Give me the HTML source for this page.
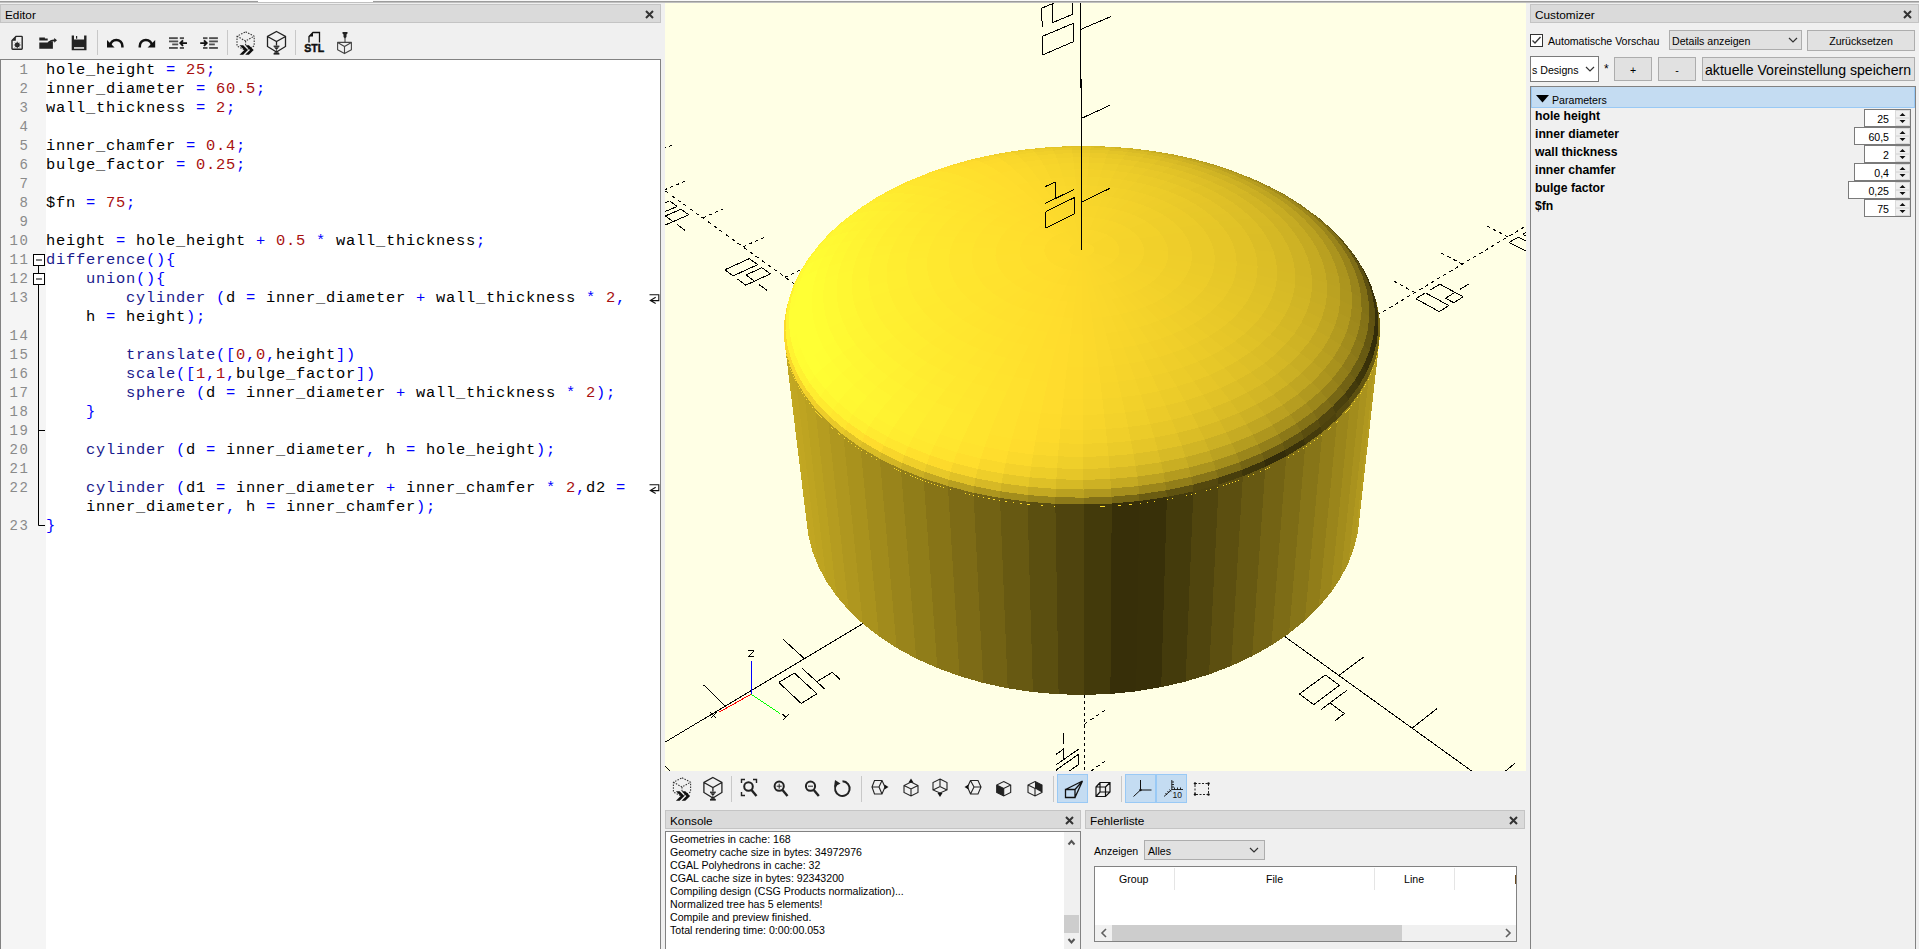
<!DOCTYPE html>
<html><head><meta charset="utf-8">
<style>
html,body{margin:0;padding:0;}
body{width:1919px;height:949px;overflow:hidden;background:#f0f0f0;position:relative;font-family:"Liberation Sans",sans-serif;font-size:12px;color:#000;}
.a{position:absolute;}
.tb{position:absolute;background:#dadada;border:1px solid #c4c4c4;box-sizing:border-box;height:19px;}
.tb span{position:absolute;left:4px;top:3.6px;font-size:11.8px;line-height:13px;color:#000;}
.tb svg{position:absolute;right:6px;top:5px;}
#code,#gut{position:absolute;top:61px;font-family:"Liberation Mono",monospace;font-size:14px;letter-spacing:1.6px;line-height:19px;white-space:pre;}
#code{left:46px;color:#000;letter-spacing:0.69px;transform:scaleX(1.1);transform-origin:0 0;}
#gut{left:0;width:29.6px;text-align:right;color:#8a8a8a;}
.k{color:#1a1a8c}.o{color:#0000ff}.n{color:#a81010}
.ic{position:absolute;}
.sep{position:absolute;width:1px;background:#c8c8c8;}
</style></head><body>
<!-- top strip -->
<div class="a" style="left:0;top:0;width:1919px;height:1px;background:#f8f8f8"></div><div class="a" style="left:0;top:1px;width:1919px;height:1px;background:#9c9c9c"></div>
<div class="a" style="left:258px;top:0;width:115px;height:2px;background:#fff"></div><div class="a" style="left:0;top:2px;width:1919px;height:1px;background:#c0c0c0"></div>

<!-- ================= Editor dock ================= -->
<div class="tb" style="left:0;top:4px;width:661px;"><span>Editor</span>
<svg width="9" height="9" viewBox="0 0 9 9"><path d="M1 1L8 8M8 1L1 8" stroke="#333" stroke-width="2"/></svg></div>

<!-- editor toolbar icons -->
<svg class="ic" style="left:0;top:28px" width="370" height="30" viewBox="0 28 370 30">
 <!-- new -->
 <path d="M16 36.4 H21.5 Q22.2 36.4 22.2 37.1 V48.6 Q22.2 49.3 21.5 49.3 H12.7 Q12 49.3 12 48.6 V40.6 Z" fill="none" stroke="#262626" stroke-width="1.4"/>
 <path d="M12.2 40.8 L15.8 37 V40.8 Z" fill="#262626"/>
 <circle cx="17.3" cy="45" r="2.4" fill="#1a1a1a"/>
 <path d="M17.3 41.6 V48.4 M13.9 45 H20.7 M14.9 42.6 L19.7 47.4 M19.7 42.6 L14.9 47.4" stroke="#333" stroke-width="0.8"/>
 <!-- open -->
 <path d="M39.3 37.4 H44.9 V38.5 H47.7 V40.4 H39.3 Z M39.3 42.5 H47.5 L49 41.5 H52.9 V48.7 H39.3 Z" fill="#222"/>
 <path d="M47.8 42.3 Q50 39.4 54.2 39.4 V37.9 L57 40.3 L54.2 42.8 V41.3 Q51 41.3 49.5 42.8 Z" fill="#222"/>
 <!-- save -->
 <path d="M71.7 35.5 H74 V39.5 H84.1 V35.5 H86.5 V50.3 H71.7 Z" fill="#222"/>
 <rect x="76" y="36" width="1.2" height="2.7" fill="#222"/>
 <rect x="74" y="47" width="10.1" height="1.9" fill="#c8c8c8"/>
 <!-- separator -->
 <rect x="97" y="30" width="1" height="25" fill="#c8c8c8"/>
 <!-- undo -->
 <path d="M110.2 46 A6.1 6.1 0 0 1 122.4 46 V47.6" fill="none" stroke="#111" stroke-width="2.5"/>
 <path d="M107 40 V47.6 H114.6 Z" fill="#111"/>
 <!-- redo -->
 <path d="M152 46 A6.1 6.1 0 0 0 139.8 46 V47.6" fill="none" stroke="#111" stroke-width="2.5"/>
 <path d="M155.2 40 V47.6 H147.6 Z" fill="#111"/>
 <!-- unindent -->
 <g fill="#505050">
  <rect x="169" y="37.2" width="8.8" height="1.9"/><rect x="179.8" y="37.2" width="4.2" height="1.9"/>
  <rect x="169" y="40.5" width="9.2" height="1.8"/>
  <rect x="172.2" y="43.5" width="6" height="1.8"/>
  <rect x="169" y="47" width="8.8" height="1.9"/><rect x="179.8" y="47" width="4.2" height="1.9"/>
 </g>
 <path d="M187 43.1 H181 M183 40.3 L180.3 43.1 L183 45.9" fill="none" stroke="#111" stroke-width="1.9"/>
 <!-- indent -->
 <g fill="#505050">
  <rect x="203" y="37.2" width="4.5" height="1.9"/><rect x="209.1" y="37.2" width="8.8" height="1.9"/>
  <rect x="209.1" y="40.5" width="8.8" height="1.8"/>
  <rect x="209.1" y="43.5" width="5.7" height="1.8"/>
  <rect x="203" y="47" width="4.5" height="1.9"/><rect x="209.1" y="47" width="8.8" height="1.9"/>
 </g>
 <path d="M200.2 43.1 H206 M204 40.3 L206.7 43.1 L204 45.9" fill="none" stroke="#111" stroke-width="1.9"/>
 <rect x="227" y="30" width="1" height="25" fill="#c8c8c8"/>
 <!-- preview -->
 <path d="M245.6 31.8 L254.2 36.2 V46 L245.6 50.4 L237 46 V36.2 Z M237 36.2 L245.6 41 L254.2 36.2 M245.6 41 V45" fill="none" stroke="#333" stroke-width="1.1" stroke-dasharray="1.5 1.3" stroke-linejoin="round"/>
 <path d="M239.5 45.3 H243.2 L248 50 L243.2 54.8 H239.5 L244.3 50 Z M245.2 45.3 H248.9 L253.7 50 L248.9 54.8 H245.2 L250 50 Z" fill="#111"/>
 <!-- render -->
 <path d="M276.5 31.5 L285.5 36.5 V46.5 L276.5 52 L267.5 46.5 V36.5 Z M267.5 36.5 L276.5 41.5 L285.5 36.5 M276.5 41.5 V45.5" fill="none" stroke="#222" stroke-width="1.3"/>
 <rect x="273.6" y="45.6" width="5.8" height="1.3" fill="#222"/>
 <path d="M274 47.2 H279 L276.5 50 Z M274 52.8 H279 L276.5 50 Z" fill="#222"/>
 <rect x="273.6" y="53" width="5.8" height="1.6" fill="#222"/>
 <rect x="295" y="30" width="1" height="25" fill="#c8c8c8"/>
 <!-- STL -->
 <path d="M309 42.5 V36.5 L313 32.5 H319.5 V42.5" fill="none" stroke="#111" stroke-width="1.3"/><path d="M309 36.5 H313 V32.5 Z" fill="#111"/>
 <text x="304.3" y="52.3" font-family="Liberation Sans" font-weight="bold" font-size="10.6" fill="#111" stroke="#111" stroke-width="0.45">STL</text>
 <!-- print -->
 <path d="M342.5 32 H347.5 V33.5 L346.5 34.5 V37 L345 38.5 L343.5 37 V34.5 L342.5 33.5 Z" fill="#222"/>
 <path d="M345 38 V42.2" stroke="#333" stroke-width="1"/>
 <path d="M337.6 42.4 H351.4 V49.7 L344.5 53.6 L337.6 49.7 Z M337.6 42.4 L344.5 46.4 L351.4 42.4 M344.5 46.4 V53.6" fill="none" stroke="#444" stroke-width="1.1" stroke-linejoin="round"/>
</svg>

<!-- editor area -->
<div class="a" style="left:0;top:59px;width:661px;height:890px;background:#fff;border:1px solid #828282;border-bottom:none;box-sizing:border-box"></div>
<div class="a" style="left:1px;top:60px;width:45px;height:889px;background:#f5f5f5"></div>
<!-- fold markers -->
<svg class="a" style="left:30px;top:250px" width="20" height="290" viewBox="30 250 20 290">
 <rect x="33.5" y="254.5" width="11" height="11" fill="#fff" stroke="#000" stroke-width="1"/>
 <path d="M36 260 H42" stroke="#000" stroke-width="1"/>
 <rect x="33.5" y="273.5" width="11" height="11" fill="#fff" stroke="#000" stroke-width="1"/>
 <path d="M36 279 H42" stroke="#000" stroke-width="1"/>
 <path d="M38.5 266 V273 M38.5 285 V525.5 H45 M38.5 430.5 H45" fill="none" stroke="#000" stroke-width="1"/>
</svg>
<div id="gut">1
2
3
4
5
6
7
8
9
10
11
12
13

14
15
16
17
18
19
20
21
22

23</div>
<div id="code">hole_height <span class="o">=</span> <span class="n">25</span><span class="o">;</span>
inner_diameter <span class="o">=</span> <span class="n">60.5</span><span class="o">;</span>
wall_thickness <span class="o">=</span> <span class="n">2</span><span class="o">;</span>

inner_chamfer <span class="o">=</span> <span class="n">0.4</span><span class="o">;</span>
bulge_factor <span class="o">=</span> <span class="n">0.25</span><span class="o">;</span>

$fn <span class="o">=</span> <span class="n">75</span><span class="o">;</span>

height <span class="o">=</span> hole_height <span class="o">+</span> <span class="n">0.5</span> <span class="o">*</span> wall_thickness<span class="o">;</span>
<span class="k">difference</span><span class="o">(){</span>
    <span class="k">union</span><span class="o">(){</span>
        <span class="k">cylinder</span> <span class="o">(</span>d <span class="o">=</span> inner_diameter <span class="o">+</span> wall_thickness <span class="o">*</span> <span class="n">2</span><span class="o">,</span>
    h <span class="o">=</span> height<span class="o">);</span>

        <span class="k">translate</span><span class="o">([</span><span class="n">0</span><span class="o">,</span><span class="n">0</span><span class="o">,</span>height<span class="o">])</span>
        <span class="k">scale</span><span class="o">([</span><span class="n">1</span><span class="o">,</span><span class="n">1</span><span class="o">,</span>bulge_factor<span class="o">])</span>
        <span class="k">sphere</span> <span class="o">(</span>d <span class="o">=</span> inner_diameter <span class="o">+</span> wall_thickness <span class="o">*</span> <span class="n">2</span><span class="o">);</span>
    <span class="o">}</span>

    <span class="k">cylinder</span> <span class="o">(</span>d <span class="o">=</span> inner_diameter<span class="o">,</span> h <span class="o">=</span> hole_height<span class="o">);</span>

    <span class="k">cylinder</span> <span class="o">(</span>d1 <span class="o">=</span> inner_diameter <span class="o">+</span> inner_chamfer <span class="o">*</span> <span class="n">2</span><span class="o">,</span>d2 <span class="o">=</span>
    inner_diameter<span class="o">,</span> h <span class="o">=</span> inner_chamfer<span class="o">);</span>
<span class="o">}</span></div>
<!-- wrap markers -->
<svg class="a" style="left:645px;top:285px" width="16" height="210" viewBox="645 285 16 210">
 <path d="M649.5 294.8 H658.8 V300.6 H650.5 M655.7 297.3 L650.3 300.6 L655.7 303.6" fill="none" stroke="#111" stroke-width="1.1"/>
 <path d="M649.5 484.8 H658.8 V490.6 H650.5 M655.7 487.3 L650.3 490.6 L655.7 493.6" fill="none" stroke="#111" stroke-width="1.1"/>
</svg>

<!-- ================= Viewport ================= -->
<svg class="a" style="left:665px;top:3px;background:#ffffe5" width="861" height="768" viewBox="0 0 861 768">
<g stroke="#000" stroke-width="1" shape-rendering="crispEdges" fill="none"><line x1="418.1" y1="488.5" x2="-3071.9" y2="2581.3"/>
<line x1="418.1" y1="488.5" x2="1385.5" y2="-91.5" stroke-dasharray="3.50 3.50"/>
<line x1="418.1" y1="488.5" x2="4008.4" y2="3070.9"/>
<line x1="418.1" y1="488.5" x2="-433.1" y2="-123.7" stroke-dasharray="3.70 3.70"/>
<line x1="418.1" y1="488.5" x2="395.1" y2="-3941.1"/>
<line x1="418.1" y1="488.5" x2="423.0" y2="1426.3" stroke-dasharray="3.00 3.00"/>
<line x1="353.5" y1="527.3" x2="330.9" y2="510.2"/>
<line x1="285.6" y1="568.0" x2="263.2" y2="550.0"/>
<line x1="321.3" y1="586.7" x2="307.3" y2="595.3"/>
<line x1="307.3" y1="595.3" x2="299.2" y2="588.8"/>
<line x1="313.2" y1="580.3" x2="299.2" y2="588.8"/>
<line x1="298.3" y1="568.4" x2="313.2" y2="580.3"/>
<line x1="298.3" y1="568.4" x2="284.3" y2="576.7"/>
<line x1="300.3" y1="599.6" x2="286.2" y2="608.3"/>
<line x1="286.2" y1="608.3" x2="278.1" y2="601.7"/>
<line x1="278.1" y1="601.7" x2="263.2" y2="589.5"/>
<line x1="277.3" y1="581.0" x2="263.2" y2="589.5"/>
<line x1="277.3" y1="581.0" x2="292.2" y2="593.0"/>
<line x1="292.2" y1="593.0" x2="300.3" y2="599.6"/>
<line x1="214.4" y1="610.7" x2="192.2" y2="591.8"/>
<line x1="139.4" y1="655.7" x2="117.5" y2="635.8"/>
<line x1="167.2" y1="669.3" x2="175.2" y2="676.5"/>
<line x1="167.2" y1="669.3" x2="151.8" y2="678.7"/>
<line x1="159.7" y1="686.0" x2="151.8" y2="678.7"/>
<line x1="151.8" y1="678.7" x2="137.2" y2="665.4"/>
<line x1="151.9" y1="690.8" x2="136.2" y2="700.4"/>
<line x1="136.2" y1="700.4" x2="128.3" y2="693.0"/>
<line x1="128.3" y1="693.0" x2="113.8" y2="679.5"/>
<line x1="129.4" y1="670.1" x2="113.8" y2="679.5"/>
<line x1="129.4" y1="670.1" x2="144.0" y2="683.5"/>
<line x1="144.0" y1="683.5" x2="151.9" y2="690.8"/>
<line x1="60.4" y1="703.1" x2="38.8" y2="682.1"/>
<line x1="-23.0" y1="753.1" x2="-44.2" y2="730.9"/>
<line x1="12.8" y1="776.2" x2="-4.4" y2="786.8"/>
<line x1="5.1" y1="768.2" x2="12.8" y2="776.2"/>
<line x1="5.1" y1="768.2" x2="-12.1" y2="778.7"/>
<line x1="-9.1" y1="753.5" x2="5.1" y2="768.2"/>
<line x1="-9.1" y1="753.5" x2="-26.2" y2="763.9"/>
<line x1="-12.1" y1="778.7" x2="-26.2" y2="763.9"/>
<line x1="-13.1" y1="792.1" x2="-30.7" y2="802.9"/>
<line x1="-30.7" y1="802.9" x2="-38.3" y2="794.6"/>
<line x1="-38.3" y1="794.6" x2="-52.3" y2="779.6"/>
<line x1="-34.9" y1="769.1" x2="-52.3" y2="779.6"/>
<line x1="-34.9" y1="769.1" x2="-20.8" y2="784.0"/>
<line x1="-20.8" y1="784.0" x2="-13.1" y2="792.1"/>
<line x1="479.8" y1="451.6" x2="457.0" y2="436.0" stroke-dasharray="3.63 3.63"/>
<line x1="538.7" y1="416.3" x2="515.8" y2="401.4" stroke-dasharray="3.58 3.58"/>
<line x1="599.3" y1="405.7" x2="588.1" y2="412.6"/>
<line x1="567.3" y1="406.3" x2="555.9" y2="413.1"/>
<line x1="555.9" y1="413.1" x2="571.1" y2="422.9"/>
<line x1="582.5" y1="416.0" x2="571.1" y2="422.9"/>
<line x1="590.7" y1="421.3" x2="582.5" y2="416.0"/>
<line x1="590.7" y1="421.3" x2="579.4" y2="428.3"/>
<line x1="550.2" y1="416.6" x2="538.7" y2="423.5"/>
<line x1="538.7" y1="423.5" x2="553.9" y2="433.4"/>
<line x1="553.9" y1="433.4" x2="562.1" y2="438.8"/>
<line x1="573.6" y1="431.8" x2="562.1" y2="438.8"/>
<line x1="573.6" y1="431.8" x2="565.4" y2="426.4"/>
<line x1="565.4" y1="426.4" x2="550.2" y2="416.6"/>
<line x1="595.0" y1="382.5" x2="572.1" y2="368.3" stroke-dasharray="3.53 3.53"/>
<line x1="648.8" y1="350.2" x2="625.9" y2="336.6" stroke-dasharray="3.49 3.49"/>
<line x1="706.2" y1="340.5" x2="695.9" y2="346.8"/>
<line x1="690.7" y1="350.0" x2="675.5" y2="341.1"/>
<line x1="690.7" y1="350.0" x2="680.3" y2="356.3"/>
<line x1="665.1" y1="347.3" x2="680.3" y2="356.3"/>
<line x1="680.3" y1="356.3" x2="688.6" y2="361.2"/>
<line x1="659.9" y1="350.5" x2="649.4" y2="356.8"/>
<line x1="649.4" y1="356.8" x2="664.6" y2="365.9"/>
<line x1="664.6" y1="365.9" x2="672.8" y2="370.9"/>
<line x1="683.4" y1="364.4" x2="672.8" y2="370.9"/>
<line x1="683.4" y1="364.4" x2="675.1" y2="359.5"/>
<line x1="675.1" y1="359.5" x2="659.9" y2="350.5"/>
<line x1="700.4" y1="319.3" x2="677.5" y2="306.2" stroke-dasharray="3.45 3.45"/>
<line x1="749.9" y1="289.6" x2="727.0" y2="277.1" stroke-dasharray="3.42 3.42"/>
<line x1="804.2" y1="280.7" x2="794.8" y2="286.5"/>
<line x1="774.9" y1="281.2" x2="765.3" y2="287.0"/>
<line x1="790.0" y1="289.4" x2="774.9" y2="281.2"/>
<line x1="790.0" y1="289.4" x2="780.5" y2="295.2"/>
<line x1="798.3" y1="293.8" x2="790.0" y2="289.4"/>
<line x1="798.3" y1="293.8" x2="788.7" y2="299.7"/>
<line x1="780.5" y1="295.2" x2="788.7" y2="299.7"/>
<line x1="760.5" y1="289.9" x2="750.8" y2="295.7"/>
<line x1="750.8" y1="295.7" x2="766.0" y2="304.1"/>
<line x1="766.0" y1="304.1" x2="774.2" y2="308.6"/>
<line x1="783.9" y1="302.6" x2="774.2" y2="308.6"/>
<line x1="783.9" y1="302.6" x2="775.7" y2="298.1"/>
<line x1="775.7" y1="298.1" x2="760.5" y2="289.9"/>
<line x1="797.4" y1="261.1" x2="774.5" y2="249.1" stroke-dasharray="3.39 3.39"/>
<line x1="842.9" y1="233.8" x2="820.2" y2="222.2" stroke-dasharray="3.37 3.37"/>
<line x1="894.6" y1="225.6" x2="885.9" y2="230.9"/>
<line x1="866.4" y1="226.1" x2="857.6" y2="231.4"/>
<line x1="857.6" y1="231.4" x2="872.7" y2="239.0"/>
<line x1="872.7" y1="239.0" x2="880.8" y2="243.1"/>
<line x1="889.7" y1="237.7" x2="880.8" y2="243.1"/>
<line x1="889.7" y1="237.7" x2="881.5" y2="233.6"/>
<line x1="881.5" y1="233.6" x2="866.4" y2="226.1"/>
<line x1="881.5" y1="233.6" x2="872.7" y2="239.0"/>
<line x1="853.2" y1="234.1" x2="844.2" y2="239.4"/>
<line x1="844.2" y1="239.4" x2="859.3" y2="247.1"/>
<line x1="859.3" y1="247.1" x2="867.5" y2="251.3"/>
<line x1="876.4" y1="245.8" x2="867.5" y2="251.3"/>
<line x1="876.4" y1="245.8" x2="868.2" y2="241.7"/>
<line x1="868.2" y1="241.7" x2="853.2" y2="234.1"/>
<line x1="886.7" y1="207.6" x2="864.0" y2="196.4" stroke-dasharray="3.34 3.34"/>
<line x1="477.0" y1="530.9" x2="502.1" y2="515.1"/>
<line x1="539.0" y1="575.5" x2="564.2" y2="558.8"/>
<line x1="532.6" y1="615.8" x2="519.7" y2="606.2"/>
<line x1="519.7" y1="606.2" x2="528.7" y2="600.2"/>
<line x1="541.7" y1="609.6" x2="528.7" y2="600.2"/>
<line x1="558.4" y1="598.3" x2="541.7" y2="609.6"/>
<line x1="558.4" y1="598.3" x2="545.5" y2="589.0"/>
<line x1="513.2" y1="601.5" x2="500.5" y2="592.1"/>
<line x1="500.5" y1="592.1" x2="509.6" y2="586.1"/>
<line x1="509.6" y1="586.1" x2="526.3" y2="575.1"/>
<line x1="539.0" y1="584.3" x2="526.3" y2="575.1"/>
<line x1="539.0" y1="584.3" x2="522.3" y2="595.5"/>
<line x1="522.3" y1="595.5" x2="513.2" y2="601.5"/>
<line x1="604.5" y1="622.6" x2="629.7" y2="605.0"/>
<line x1="673.8" y1="672.4" x2="699.0" y2="653.8"/>
<line x1="679.5" y1="710.6" x2="670.4" y2="717.5"/>
<line x1="679.5" y1="710.6" x2="665.0" y2="700.0"/>
<line x1="655.9" y1="706.8" x2="665.0" y2="700.0"/>
<line x1="665.0" y1="700.0" x2="681.7" y2="687.5"/>
<line x1="648.7" y1="701.5" x2="634.4" y2="691.0"/>
<line x1="634.4" y1="691.0" x2="643.5" y2="684.3"/>
<line x1="643.5" y1="684.3" x2="660.3" y2="672.0"/>
<line x1="674.5" y1="682.3" x2="660.3" y2="672.0"/>
<line x1="674.5" y1="682.3" x2="657.8" y2="694.7"/>
<line x1="657.8" y1="694.7" x2="648.7" y2="701.5"/>
<line x1="747.1" y1="725.2" x2="772.2" y2="705.4"/>
<line x1="824.9" y1="781.1" x2="849.9" y2="760.2"/>
<line x1="825.3" y1="831.9" x2="808.9" y2="819.9"/>
<line x1="834.4" y1="824.2" x2="825.3" y2="831.9"/>
<line x1="834.4" y1="824.2" x2="818.0" y2="812.2"/>
<line x1="851.0" y1="809.9" x2="834.4" y2="824.2"/>
<line x1="851.0" y1="809.9" x2="834.7" y2="798.1"/>
<line x1="818.0" y1="812.2" x2="834.7" y2="798.1"/>
<line x1="800.8" y1="813.9" x2="784.8" y2="802.0"/>
<line x1="784.8" y1="802.0" x2="793.9" y2="794.5"/>
<line x1="793.9" y1="794.5" x2="810.5" y2="780.6"/>
<line x1="826.6" y1="792.2" x2="810.5" y2="780.6"/>
<line x1="826.6" y1="792.2" x2="809.9" y2="806.2"/>
<line x1="809.9" y1="806.2" x2="800.8" y2="813.9"/>
<line x1="362.2" y1="448.3" x2="387.1" y2="434.1" stroke-dasharray="3.46 3.46"/>
<line x1="309.1" y1="410.1" x2="333.8" y2="396.5" stroke-dasharray="3.42 3.42"/>
<line x1="291.6" y1="426.3" x2="281.2" y2="418.7"/>
<line x1="267.2" y1="419.8" x2="257.0" y2="412.3"/>
<line x1="257.0" y1="412.3" x2="265.9" y2="407.5"/>
<line x1="276.1" y1="415.0" x2="265.9" y2="407.5"/>
<line x1="292.5" y1="406.1" x2="276.1" y2="415.0"/>
<line x1="292.5" y1="406.1" x2="282.3" y2="398.7"/>
<line x1="251.9" y1="408.6" x2="241.9" y2="401.2"/>
<line x1="241.9" y1="401.2" x2="250.8" y2="396.4"/>
<line x1="250.8" y1="396.4" x2="267.1" y2="387.7"/>
<line x1="277.2" y1="395.0" x2="267.1" y2="387.7"/>
<line x1="277.2" y1="395.0" x2="260.8" y2="403.8"/>
<line x1="260.8" y1="403.8" x2="251.9" y2="408.6"/>
<line x1="258.4" y1="373.7" x2="283.0" y2="360.7" stroke-dasharray="3.39 3.39"/>
<line x1="210.2" y1="339.0" x2="234.6" y2="326.6" stroke-dasharray="3.36 3.36"/>
<line x1="192.5" y1="353.7" x2="183.1" y2="346.8"/>
<line x1="178.4" y1="343.4" x2="169.6" y2="347.8"/>
<line x1="178.4" y1="343.4" x2="169.2" y2="336.6"/>
<line x1="160.4" y1="341.0" x2="169.2" y2="336.6"/>
<line x1="169.2" y1="336.6" x2="185.3" y2="328.6"/>
<line x1="155.8" y1="337.6" x2="146.7" y2="330.8"/>
<line x1="146.7" y1="330.8" x2="155.4" y2="326.5"/>
<line x1="155.4" y1="326.5" x2="171.5" y2="318.6"/>
<line x1="180.7" y1="325.2" x2="171.5" y2="318.6"/>
<line x1="180.7" y1="325.2" x2="164.6" y2="333.2"/>
<line x1="164.6" y1="333.2" x2="155.8" y2="337.6"/>
<line x1="164.1" y1="305.8" x2="188.4" y2="294.0" stroke-dasharray="3.33 3.33"/>
<line x1="120.1" y1="274.2" x2="144.2" y2="262.9" stroke-dasharray="3.31 3.31"/>
<line x1="102.3" y1="287.6" x2="93.7" y2="281.3"/>
<line x1="80.8" y1="282.2" x2="72.4" y2="276.0"/>
<line x1="89.5" y1="278.2" x2="80.8" y2="282.2"/>
<line x1="89.5" y1="278.2" x2="81.0" y2="272.0"/>
<line x1="105.4" y1="270.8" x2="89.5" y2="278.2"/>
<line x1="105.4" y1="270.8" x2="96.9" y2="264.7"/>
<line x1="81.0" y1="272.0" x2="96.9" y2="264.7"/>
<line x1="68.2" y1="272.9" x2="59.9" y2="266.7"/>
<line x1="59.9" y1="266.7" x2="68.5" y2="262.8"/>
<line x1="68.5" y1="262.8" x2="84.3" y2="255.6"/>
<line x1="92.7" y1="261.6" x2="84.3" y2="255.6"/>
<line x1="92.7" y1="261.6" x2="76.8" y2="268.9"/>
<line x1="76.8" y1="268.9" x2="68.2" y2="272.9"/>
<line x1="77.9" y1="243.9" x2="101.9" y2="233.1" stroke-dasharray="3.29 3.29"/>
<line x1="37.6" y1="214.9" x2="61.4" y2="204.5" stroke-dasharray="3.27 3.27"/>
<line x1="19.9" y1="227.2" x2="12.0" y2="221.4"/>
<line x1="-0.4" y1="222.3" x2="-8.1" y2="216.5"/>
<line x1="-8.1" y1="216.5" x2="0.4" y2="212.9"/>
<line x1="0.4" y1="212.9" x2="16.0" y2="206.2"/>
<line x1="23.8" y1="211.8" x2="16.0" y2="206.2"/>
<line x1="23.8" y1="211.8" x2="8.1" y2="218.6"/>
<line x1="8.1" y1="218.6" x2="-0.4" y2="222.3"/>
<line x1="8.1" y1="218.6" x2="0.4" y2="212.9"/>
<line x1="-11.9" y1="213.7" x2="-19.6" y2="208.1"/>
<line x1="-19.6" y1="208.1" x2="-11.1" y2="204.5"/>
<line x1="-11.1" y1="204.5" x2="4.5" y2="197.8"/>
<line x1="12.2" y1="203.4" x2="4.5" y2="197.8"/>
<line x1="12.2" y1="203.4" x2="-3.5" y2="210.1"/>
<line x1="-3.5" y1="210.1" x2="-11.9" y2="213.7"/>
<line x1="-1.0" y1="187.1" x2="22.5" y2="177.2" stroke-dasharray="3.26 3.26"/>
<line x1="-38.0" y1="160.4" x2="8.3" y2="141.6" stroke-dasharray="3.24 3.24"/>
<line x1="-55.7" y1="171.8" x2="-62.9" y2="166.5"/>
<line x1="-82.0" y1="162.0" x2="-73.7" y2="158.6"/>
<line x1="-73.7" y1="158.6" x2="-58.3" y2="152.4"/>
<line x1="-85.5" y1="159.4" x2="-92.6" y2="154.2"/>
<line x1="-92.6" y1="154.2" x2="-84.3" y2="150.9"/>
<line x1="-84.3" y1="150.9" x2="-68.9" y2="144.8"/>
<line x1="-61.9" y1="149.9" x2="-68.9" y2="144.8"/>
<line x1="-61.9" y1="149.9" x2="-77.2" y2="156.0"/>
<line x1="-77.2" y1="156.0" x2="-85.5" y2="159.4"/>
<line x1="-96.1" y1="151.6" x2="-103.0" y2="146.5"/>
<line x1="-103.0" y1="146.5" x2="-94.7" y2="143.2"/>
<line x1="-94.7" y1="143.2" x2="-79.4" y2="137.2"/>
<line x1="-72.5" y1="142.2" x2="-79.4" y2="137.2"/>
<line x1="-72.5" y1="142.2" x2="-87.8" y2="148.3"/>
<line x1="-87.8" y1="148.3" x2="-96.1" y2="151.6"/>
<line x1="417.8" y1="422.3" x2="443.5" y2="407.5"/>
<line x1="417.4" y1="352.2" x2="443.9" y2="337.7"/>
<line x1="383.1" y1="341.4" x2="383.4" y2="356.1"/>
<line x1="383.4" y1="356.1" x2="393.0" y2="350.9"/>
<line x1="392.7" y1="336.2" x2="393.0" y2="350.9"/>
<line x1="410.5" y1="326.6" x2="392.7" y2="336.2"/>
<line x1="410.5" y1="326.6" x2="410.6" y2="341.3"/>
<line x1="383.5" y1="363.4" x2="383.8" y2="377.9"/>
<line x1="383.8" y1="377.9" x2="393.3" y2="372.7"/>
<line x1="393.3" y1="372.7" x2="410.8" y2="363.0"/>
<line x1="410.7" y1="348.6" x2="410.8" y2="363.0"/>
<line x1="410.7" y1="348.6" x2="393.1" y2="358.2"/>
<line x1="393.1" y1="358.2" x2="383.5" y2="363.4"/>
<line x1="417.0" y1="277.9" x2="444.3" y2="263.8"/>
<line x1="418.5" y1="551.3" x2="442.8" y2="536.2" stroke-dasharray="3.53 3.53"/>
<line x1="418.8" y1="610.9" x2="442.5" y2="595.6" stroke-dasharray="3.57 3.57"/>
<line x1="397.0" y1="619.1" x2="397.1" y2="630.7"/>
<line x1="388.7" y1="642.0" x2="388.9" y2="653.5"/>
<line x1="388.9" y1="653.5" x2="397.4" y2="647.9"/>
<line x1="397.2" y1="636.5" x2="397.4" y2="647.9"/>
<line x1="412.9" y1="626.3" x2="397.2" y2="636.5"/>
<line x1="412.9" y1="626.3" x2="413.0" y2="637.8"/>
<line x1="389.0" y1="659.2" x2="389.3" y2="670.4"/>
<line x1="389.3" y1="670.4" x2="397.6" y2="664.9"/>
<line x1="397.6" y1="664.9" x2="413.1" y2="654.7"/>
<line x1="413.0" y1="643.4" x2="413.1" y2="654.7"/>
<line x1="413.0" y1="643.4" x2="397.5" y2="653.6"/>
<line x1="397.5" y1="653.6" x2="389.0" y2="659.2"/>
<line x1="419.1" y1="667.5" x2="442.2" y2="652.1" stroke-dasharray="3.61 3.61"/>
<line x1="419.3" y1="721.3" x2="441.9" y2="705.8" stroke-dasharray="3.64 3.64"/>
<line x1="398.6" y1="730.2" x2="398.8" y2="740.7"/>
<line x1="398.8" y1="745.9" x2="390.8" y2="751.5"/>
<line x1="398.8" y1="745.9" x2="399.0" y2="756.3"/>
<line x1="391.0" y1="761.9" x2="399.0" y2="756.3"/>
<line x1="399.0" y1="756.3" x2="413.8" y2="746.0"/>
<line x1="391.1" y1="767.0" x2="391.3" y2="777.2"/>
<line x1="391.3" y1="777.2" x2="399.2" y2="771.6"/>
<line x1="399.2" y1="771.6" x2="413.9" y2="761.3"/>
<line x1="413.8" y1="751.1" x2="413.9" y2="761.3"/>
<line x1="413.8" y1="751.1" x2="399.1" y2="761.4"/>
<line x1="399.1" y1="761.4" x2="391.1" y2="767.0"/>
<line x1="419.6" y1="772.5" x2="441.6" y2="757.0" stroke-dasharray="3.67 3.67"/>
<line x1="419.9" y1="821.4" x2="441.4" y2="805.8" stroke-dasharray="3.70 3.70"/>
<line x1="400.1" y1="830.9" x2="400.3" y2="840.4"/>
<line x1="392.6" y1="850.7" x2="392.8" y2="860.2"/>
<line x1="400.3" y1="845.1" x2="392.6" y2="850.7"/>
<line x1="400.3" y1="845.1" x2="400.5" y2="854.5"/>
<line x1="414.5" y1="834.8" x2="400.3" y2="845.1"/>
<line x1="414.5" y1="834.8" x2="414.6" y2="844.2"/>
<line x1="400.5" y1="854.5" x2="414.6" y2="844.2"/>
<line x1="392.9" y1="864.8" x2="393.1" y2="874.1"/>
<line x1="393.1" y1="874.1" x2="400.7" y2="868.5"/>
<line x1="400.7" y1="868.5" x2="414.7" y2="858.2"/>
<line x1="414.6" y1="848.9" x2="414.7" y2="858.2"/>
<line x1="414.6" y1="848.9" x2="400.5" y2="859.2"/>
<line x1="400.5" y1="859.2" x2="392.9" y2="864.8"/></g>
<g shape-rendering="crispEdges"><polygon points="119.1,335.5 119.0,332.9 119.3,318.2 121.7,303.7 123.2,298.7 127.5,284.6 133.8,270.9 141.9,257.7 145.0,253.4 154.6,240.9 165.8,228.9 178.5,217.7 182.8,214.4 196.5,204.1 211.5,194.4 227.7,185.5 244.8,177.4 262.9,170.2 266.5,168.7 284.9,162.4 303.9,157.0 323.6,152.5 343.6,148.8 364.1,146.0 384.8,144.1 405.6,143.1 426.5,143.0 447.4,143.8 468.1,145.5 488.6,148.1 508.7,151.5 528.3,155.9 547.4,161.1 565.8,167.2 583.5,174.1 587.6,175.7 604.8,183.6 621.0,192.3 636.1,201.8 649.9,212.0 654.2,215.2 667.0,226.3 678.3,238.1 688.1,250.5 691.3,254.8 699.5,267.9 705.9,281.5 710.4,295.5 711.9,300.4 714.5,314.9 715.0,329.6 715.0,332.1 713.4,346.9 692.9,529.1 689.2,544.6 683.4,560.0 675.6,575.1 665.7,589.8 653.7,604.1 639.8,617.7 624.0,630.5 606.4,642.4 587.1,653.3 566.2,663.0 544.0,671.5 520.6,678.6 496.2,684.2 471.1,688.4 445.4,691.0 419.5,691.9 393.6,691.3 367.9,689.1 342.7,685.3 318.2,680.0 294.6,673.2 272.3,665.0 251.2,655.6 231.7,645.0 213.9,633.3 197.8,620.7 183.7,607.2 171.5,593.1 161.4,578.5 153.3,563.4 147.3,548.1 143.3,532.6 141.4,517.1" fill="#b89a26"/><polygon points="197.8,620.7 213.9,633.3 195.8,447.3 178.6,435.1" fill="#a9921d"/>
<polygon points="213.9,633.3 231.7,645.0 215.0,458.6 195.8,447.3" fill="#a18b1c"/>
<polygon points="231.7,645.0 251.2,655.6 236.1,468.9 215.0,458.6" fill="#99841b"/>
<polygon points="251.2,655.6 272.3,665.0 258.8,478.1 236.1,468.9" fill="#907d19"/>
<polygon points="272.3,665.0 294.6,673.2 283.1,486.0 258.8,478.1" fill="#877417"/>
<polygon points="294.6,673.2 318.2,680.0 308.6,492.6 283.1,486.0" fill="#7d6b16"/>
<polygon points="318.2,680.0 342.7,685.3 335.1,497.8 308.6,492.6" fill="#726214"/>
<polygon points="342.7,685.3 367.9,689.1 362.5,501.5 335.1,497.8" fill="#675912"/>
<polygon points="367.9,689.1 393.6,691.3 390.4,503.6 362.5,501.5" fill="#5b4f10"/>
<polygon points="393.6,691.3 419.5,691.9 418.6,504.2 390.4,503.6" fill="#4f440e"/>
<polygon points="419.5,691.9 445.4,691.0 446.7,503.3 418.6,504.2" fill="#433a0b"/>
<polygon points="445.4,691.0 471.1,688.4 474.5,500.8 446.7,503.3" fill="#372f09"/>
<polygon points="471.1,688.4 496.2,684.2 501.8,496.7 474.5,500.8" fill="#383009"/>
<polygon points="496.2,684.2 520.6,678.6 528.3,491.2 501.8,496.7" fill="#443b0c"/>
<polygon points="520.6,678.6 544.0,671.5 553.6,484.3 528.3,491.2" fill="#50450e"/>
<polygon points="544.0,671.5 566.2,663.0 577.7,476.1 553.6,484.3" fill="#5c4f10"/>
<polygon points="566.2,663.0 587.1,653.3 600.2,466.7 577.7,476.1" fill="#675912"/>
<polygon points="587.1,653.3 606.4,642.4 621.1,456.1 600.2,466.7" fill="#736314"/>
<polygon points="606.4,642.4 624.0,630.5 640.1,444.6 621.1,456.1" fill="#7d6c16"/>
<polygon points="624.0,630.5 639.8,617.7 657.1,432.2 640.1,444.6" fill="#877518"/>
<polygon points="639.8,617.7 653.7,604.1 672.0,419.1 657.1,432.2" fill="#917d19"/>
<polygon points="653.7,604.1 665.7,589.8 684.7,405.3 672.0,419.1" fill="#9a851b"/>
<polygon points="665.7,589.8 675.6,575.1 695.2,391.1 684.7,405.3" fill="#a28c1c"/>
<polygon points="675.6,575.1 683.4,560.0 703.5,376.6 695.2,391.1" fill="#a9921e"/>
<polygon points="683.4,560.0 689.2,544.6 709.6,361.8 703.5,376.6" fill="#b0981f"/>
<polygon points="689.2,544.6 692.9,529.1 713.4,346.9 709.6,361.8" fill="#b69d20"/>
<polygon points="141.4,517.1 143.3,532.6 120.9,350.3 119.1,335.5" fill="#c3a822"/>
<polygon points="143.3,532.6 147.3,548.1 124.9,365.2 120.9,350.3" fill="#c2a822"/>
<polygon points="147.3,548.1 153.3,563.4 131.2,379.9 124.9,365.2" fill="#c1a622"/>
<polygon points="153.3,563.4 161.4,578.5 139.7,394.4 131.2,379.9" fill="#bea421"/>
<polygon points="161.4,578.5 171.5,593.1 150.5,408.5 139.7,394.4" fill="#baa120"/>
<polygon points="171.5,593.1 183.7,607.2 163.5,422.1 150.5,408.5" fill="#b59c20"/>
<polygon points="183.7,607.2 197.8,620.7 178.6,435.1 163.5,422.1" fill="#af971f"/>
<polygon points="178.6,435.1 195.8,447.3 215.0,458.6 236.1,468.9 258.8,478.1 283.1,486.0 308.6,492.6 335.1,497.8 362.5,501.5 390.4,503.6 418.6,504.2 446.7,503.3 474.5,500.8 501.8,496.7 528.3,491.2 553.6,484.3 577.7,476.1 600.2,466.7 621.1,456.1 640.1,444.6 657.1,432.2 672.0,419.1 684.7,405.3 695.2,391.1 703.5,376.6 709.6,361.8 713.4,346.9 715.0,332.1 714.5,317.4 711.9,302.9 707.3,288.8 700.8,275.0 692.6,261.8 682.6,249.1 671.0,237.0 658.0,225.6 643.6,215.0 628.0,205.1 611.2,196.0 593.3,187.7 574.6,180.3 555.1,173.8 534.9,168.3 514.1,163.6 492.8,159.9 471.1,157.1 449.2,155.3 427.2,154.4 405.1,154.6 383.0,155.6 361.1,157.7 339.5,160.6 318.3,164.6 297.5,169.4 277.3,175.2 257.8,181.9 239.1,189.5 221.4,197.9 204.7,207.2 189.1,217.3 174.8,228.1 161.9,239.7 150.4,251.9 140.6,264.7 132.5,278.1 126.2,291.9 121.8,306.2 119.4,320.7 119.1,335.5 120.9,350.3 124.9,365.2 131.2,379.9 139.7,394.4 150.5,408.5 163.5,422.1" fill="#fbd92c"/>
<polygon points="407.6,251.3 408.3,251.7 409.1,252.1 410.0,252.4 410.9,252.7 411.8,253.0 412.8,253.2 413.8,253.4 414.8,253.5 415.9,253.6 416.9,253.6 418.0,253.6 419.0,253.5 420.1,253.3 421.1,253.2 422.0,252.9 423.0,252.7 423.9,252.4 424.7,252.0 425.5,251.6 426.2,251.2 426.9,250.7 427.5,250.3 428.0,249.8 428.5,249.2 428.8,248.7 429.1,248.1 429.3,247.5 429.4,246.9 429.4,246.4 429.3,245.8 429.2,245.2 428.9,244.6 428.6,244.1 428.2,243.5 427.7,243.0 427.1,242.5 426.5,242.1 425.8,241.7 425.0,241.3 424.2,240.9 423.3,240.6 422.4,240.3 421.4,240.1 420.4,239.9 419.4,239.8 418.4,239.7 417.3,239.6 416.3,239.6 415.3,239.7 414.2,239.8 413.2,239.9 412.2,240.1 411.3,240.4 410.4,240.7 409.5,241.0 408.7,241.3 407.9,241.7 407.2,242.2 406.6,242.7 406.0,243.1 405.5,243.7 405.1,244.2 404.8,244.8 404.6,245.3 404.4,245.9 404.4,246.5 404.4,247.1 404.5,247.7 404.7,248.2 405.0,248.8 405.3,249.3 405.8,249.9 406.3,250.4 406.9,250.9" fill="#fbd92c"/>
<polygon points="407.6,251.3 388.8,261.3 391.0,262.5 408.3,251.7" fill="#fddb2c"/>
<polygon points="408.3,251.7 391.0,262.5 393.4,263.7 409.1,252.1" fill="#fddb2c"/>
<polygon points="409.1,252.1 393.4,263.7 396.0,264.7 410.0,252.4" fill="#fddb2c"/>
<polygon points="410.0,252.4 396.0,264.7 398.7,265.7 410.9,252.7" fill="#fdda2c"/>
<polygon points="410.9,252.7 398.7,265.7 401.6,266.4 411.8,253.0" fill="#fdda2c"/>
<polygon points="411.8,253.0 401.6,266.4 404.5,267.1 412.8,253.2" fill="#fdda2c"/>
<polygon points="412.8,253.2 404.5,267.1 407.6,267.6 413.8,253.4" fill="#fcda2c"/>
<polygon points="413.8,253.4 407.6,267.6 410.7,267.9 414.8,253.5" fill="#fcda2c"/>
<polygon points="414.8,253.5 410.7,267.9 413.8,268.2 415.9,253.6" fill="#fcd92c"/>
<polygon points="415.9,253.6 413.8,268.2 417.0,268.2 416.9,253.6" fill="#fcd92c"/>
<polygon points="416.9,253.6 417.0,268.2 420.2,268.1 418.0,253.6" fill="#fbd92c"/>
<polygon points="418.0,253.6 420.2,268.1 423.4,267.9 419.0,253.5" fill="#fbd92c"/>
<polygon points="419.0,253.5 423.4,267.9 426.5,267.5 420.1,253.3" fill="#fbd92c"/>
<polygon points="420.1,253.3 426.5,267.5 429.5,267.0 421.1,253.2" fill="#fbd82c"/>
<polygon points="421.1,253.2 429.5,267.0 432.5,266.3 422.0,252.9" fill="#fad82c"/>
<polygon points="422.0,252.9 432.5,266.3 435.3,265.5 423.0,252.7" fill="#fad82c"/>
<polygon points="423.0,252.7 435.3,265.5 438.0,264.5 423.9,252.4" fill="#fad82c"/>
<polygon points="423.9,252.4 438.0,264.5 440.5,263.4 424.7,252.0" fill="#fad72c"/>
<polygon points="424.7,252.0 440.5,263.4 442.9,262.3 425.5,251.6" fill="#f9d72c"/>
<polygon points="425.5,251.6 442.9,262.3 445.1,261.0 426.2,251.2" fill="#f9d72c"/>
<polygon points="426.2,251.2 445.1,261.0 447.1,259.6 426.9,250.7" fill="#f9d72c"/>
<polygon points="426.9,250.7 447.1,259.6 448.9,258.1 427.5,250.3" fill="#f9d72c"/>
<polygon points="427.5,250.3 448.9,258.1 450.4,256.6 428.0,249.8" fill="#f9d72c"/>
<polygon points="428.0,249.8 450.4,256.6 451.7,255.0 428.5,249.2" fill="#f8d62b"/>
<polygon points="428.5,249.2 451.7,255.0 452.7,253.3 428.8,248.7" fill="#f8d62b"/>
<polygon points="428.8,248.7 452.7,253.3 453.5,251.6 429.1,248.1" fill="#f8d62b"/>
<polygon points="429.1,248.1 453.5,251.6 454.0,249.9 429.3,247.5" fill="#f8d62b"/>
<polygon points="429.3,247.5 454.0,249.9 454.3,248.1 429.4,246.9" fill="#f8d62b"/>
<polygon points="429.4,246.9 454.3,248.1 454.3,246.4 429.4,246.4" fill="#f8d62b"/>
<polygon points="429.4,246.4 454.3,246.4 454.1,244.6 429.3,245.8" fill="#f8d62b"/>
<polygon points="429.3,245.8 454.1,244.6 453.5,242.9 429.2,245.2" fill="#f8d62b"/>
<polygon points="429.2,245.2 453.5,242.9 452.8,241.2 428.9,244.6" fill="#f8d62b"/>
<polygon points="428.9,244.6 452.8,241.2 451.8,239.6 428.6,244.1" fill="#f8d62b"/>
<polygon points="428.6,244.1 451.8,239.6 450.5,238.0 428.2,243.5" fill="#f8d62b"/>
<polygon points="428.2,243.5 450.5,238.0 449.0,236.5 427.7,243.0" fill="#f8d62b"/>
<polygon points="427.7,243.0 449.0,236.5 447.3,235.0 427.1,242.5" fill="#f8d62b"/>
<polygon points="427.1,242.5 447.3,235.0 445.4,233.7 426.5,242.1" fill="#f8d62b"/>
<polygon points="426.5,242.1 445.4,233.7 443.3,232.4 425.8,241.7" fill="#f8d62b"/>
<polygon points="425.8,241.7 443.3,232.4 441.0,231.2 425.0,241.3" fill="#f9d72c"/>
<polygon points="425.0,241.3 441.0,231.2 438.5,230.2 424.2,240.9" fill="#f9d72c"/>
<polygon points="424.2,240.9 438.5,230.2 435.9,229.3 423.3,240.6" fill="#f9d72c"/>
<polygon points="423.3,240.6 435.9,229.3 433.2,228.5 422.4,240.3" fill="#f9d72c"/>
<polygon points="422.4,240.3 433.2,228.5 430.3,227.8 421.4,240.1" fill="#f9d72c"/>
<polygon points="421.4,240.1 430.3,227.8 427.4,227.2 420.4,239.9" fill="#fad72c"/>
<polygon points="420.4,239.9 427.4,227.2 424.4,226.8 419.4,239.8" fill="#fad82c"/>
<polygon points="419.4,239.8 424.4,226.8 421.4,226.6 418.4,239.7" fill="#fad82c"/>
<polygon points="418.4,239.7 421.4,226.6 418.3,226.4 417.3,239.6" fill="#fad82c"/>
<polygon points="417.3,239.6 418.3,226.4 415.2,226.4 416.3,239.6" fill="#fad82c"/>
<polygon points="416.3,239.6 415.2,226.4 412.1,226.6 415.3,239.7" fill="#fbd82c"/>
<polygon points="415.3,239.7 412.1,226.6 409.1,226.9 414.2,239.8" fill="#fbd92c"/>
<polygon points="414.2,239.8 409.1,226.9 406.1,227.3 413.2,239.9" fill="#fbd92c"/>
<polygon points="413.2,239.9 406.1,227.3 403.1,227.9 412.2,240.1" fill="#fbd92c"/>
<polygon points="412.2,240.1 403.1,227.9 400.3,228.6 411.3,240.4" fill="#fcd92c"/>
<polygon points="411.3,240.4 400.3,228.6 397.6,229.5 410.4,240.7" fill="#fcda2c"/>
<polygon points="410.4,240.7 397.6,229.5 395.0,230.4 409.5,241.0" fill="#fcda2c"/>
<polygon points="409.5,241.0 395.0,230.4 392.6,231.5 408.7,241.3" fill="#fcda2c"/>
<polygon points="408.7,241.3 392.6,231.5 390.3,232.7 407.9,241.7" fill="#fdda2c"/>
<polygon points="407.9,241.7 390.3,232.7 388.2,234.0 407.2,242.2" fill="#fdda2c"/>
<polygon points="407.2,242.2 388.2,234.0 386.3,235.3 406.6,242.7" fill="#fdda2c"/>
<polygon points="406.6,242.7 386.3,235.3 384.6,236.8 406.0,243.1" fill="#fddb2c"/>
<polygon points="406.0,243.1 384.6,236.8 383.1,238.3 405.5,243.7" fill="#fddb2c"/>
<polygon points="405.5,243.7 383.1,238.3 381.9,239.9 405.1,244.2" fill="#fedb2c"/>
<polygon points="405.1,244.2 381.9,239.9 380.9,241.6 404.8,244.8" fill="#fedb2c"/>
<polygon points="404.8,244.8 380.9,241.6 380.1,243.3 404.6,245.3" fill="#fedb2c"/>
<polygon points="404.6,245.3 380.1,243.3 379.7,245.0 404.4,245.9" fill="#fedb2c"/>
<polygon points="404.4,245.9 379.7,245.0 379.4,246.8 404.4,246.5" fill="#fedb2c"/>
<polygon points="404.4,246.5 379.4,246.8 379.4,248.5 404.4,247.1" fill="#fedb2c"/>
<polygon points="404.4,247.1 379.4,248.5 379.7,250.3 404.5,247.7" fill="#fedb2c"/>
<polygon points="404.5,247.7 379.7,250.3 380.3,252.0 404.7,248.2" fill="#fedb2c"/>
<polygon points="404.7,248.2 380.3,252.0 381.1,253.7 405.0,248.8" fill="#fedb2c"/>
<polygon points="405.0,248.8 381.1,253.7 382.2,255.3 405.3,249.3" fill="#fedb2c"/>
<polygon points="405.3,249.3 382.2,255.3 383.5,256.9 405.8,249.9" fill="#fedb2c"/>
<polygon points="405.8,249.9 383.5,256.9 385.1,258.5 406.3,250.4" fill="#fedb2c"/>
<polygon points="406.3,250.4 385.1,258.5 386.8,259.9 406.9,250.9" fill="#fedb2c"/>
<polygon points="406.9,250.9 386.8,259.9 388.8,261.3 407.6,251.3" fill="#fedb2c"/>
<polygon points="388.8,261.3 370.1,271.7 373.7,273.8 391.0,262.5" fill="#ffdd2d"/>
<polygon points="391.0,262.5 373.7,273.8 377.7,275.8 393.4,263.7" fill="#ffdd2d"/>
<polygon points="393.4,263.7 377.7,275.8 381.9,277.6 396.0,264.7" fill="#ffdc2d"/>
<polygon points="396.0,264.7 381.9,277.6 386.5,279.1 398.7,265.7" fill="#ffdc2d"/>
<polygon points="398.7,265.7 386.5,279.1 391.2,280.4 401.6,266.4" fill="#fedc2d"/>
<polygon points="401.6,266.4 391.2,280.4 396.2,281.5 404.5,267.1" fill="#fedb2c"/>
<polygon points="404.5,267.1 396.2,281.5 401.3,282.4 407.6,267.6" fill="#fedb2c"/>
<polygon points="407.6,267.6 401.3,282.4 406.5,283.0 410.7,267.9" fill="#fdda2c"/>
<polygon points="410.7,267.9 406.5,283.0 411.8,283.3 413.8,268.2" fill="#fdda2c"/>
<polygon points="413.8,268.2 411.8,283.3 417.1,283.4 417.0,268.2" fill="#fcda2c"/>
<polygon points="417.0,268.2 417.1,283.4 422.5,283.3 420.2,268.1" fill="#fcd92c"/>
<polygon points="420.2,268.1 422.5,283.3 427.8,282.9 423.4,267.9" fill="#fbd92c"/>
<polygon points="423.4,267.9 427.8,282.9 433.0,282.2 426.5,267.5" fill="#fbd82c"/>
<polygon points="426.5,267.5 433.0,282.2 438.1,281.3 429.5,267.0" fill="#fad82c"/>
<polygon points="429.5,267.0 438.1,281.3 443.0,280.1 432.5,266.3" fill="#fad72c"/>
<polygon points="432.5,266.3 443.0,280.1 447.7,278.8 435.3,265.5" fill="#f9d72c"/>
<polygon points="435.3,265.5 447.7,278.8 452.2,277.2 438.0,264.5" fill="#f9d72c"/>
<polygon points="438.0,264.5 452.2,277.2 456.5,275.4 440.5,263.4" fill="#f8d62b"/>
<polygon points="440.5,263.4 456.5,275.4 460.4,273.4 442.9,262.3" fill="#f8d62b"/>
<polygon points="442.9,262.3 460.4,273.4 464.0,271.2 445.1,261.0" fill="#f7d52b"/>
<polygon points="445.1,261.0 464.0,271.2 467.3,268.9 447.1,259.6" fill="#f7d52b"/>
<polygon points="447.1,259.6 467.3,268.9 470.2,266.4 448.9,258.1" fill="#f6d52b"/>
<polygon points="448.9,258.1 470.2,266.4 472.7,263.8 450.4,256.6" fill="#f6d42b"/>
<polygon points="450.4,256.6 472.7,263.8 474.8,261.1 451.7,255.0" fill="#f6d42b"/>
<polygon points="451.7,255.0 474.8,261.1 476.5,258.3 452.7,253.3" fill="#f6d42b"/>
<polygon points="452.7,253.3 476.5,258.3 477.8,255.5 453.5,251.6" fill="#f5d42b"/>
<polygon points="453.5,251.6 477.8,255.5 478.6,252.6 454.0,249.9" fill="#f5d42b"/>
<polygon points="454.0,249.9 478.6,252.6 479.0,249.7 454.3,248.1" fill="#f5d32b"/>
<polygon points="454.3,248.1 479.0,249.7 479.0,246.8 454.3,246.4" fill="#f5d32b"/>
<polygon points="454.3,246.4 479.0,246.8 478.5,243.9 454.1,244.6" fill="#f5d32b"/>
<polygon points="454.1,244.6 478.5,243.9 477.6,241.1 453.5,242.9" fill="#f5d32b"/>
<polygon points="453.5,242.9 477.6,241.1 476.3,238.3 452.8,241.2" fill="#f5d32b"/>
<polygon points="452.8,241.2 476.3,238.3 474.5,235.6 451.8,239.6" fill="#f5d32b"/>
<polygon points="451.8,239.6 474.5,235.6 472.4,233.0 450.5,238.0" fill="#f5d32b"/>
<polygon points="450.5,238.0 472.4,233.0 469.9,230.5 449.0,236.5" fill="#f5d42b"/>
<polygon points="449.0,236.5 469.9,230.5 467.0,228.1 447.3,235.0" fill="#f5d42b"/>
<polygon points="447.3,235.0 467.0,228.1 463.8,225.9 445.4,233.7" fill="#f5d42b"/>
<polygon points="445.4,233.7 463.8,225.9 460.3,223.8 443.3,232.4" fill="#f6d42b"/>
<polygon points="443.3,232.4 460.3,223.8 456.5,221.9 441.0,231.2" fill="#f6d42b"/>
<polygon points="441.0,231.2 456.5,221.9 452.5,220.2 438.5,230.2" fill="#f6d52b"/>
<polygon points="438.5,230.2 452.5,220.2 448.2,218.7 435.9,229.3" fill="#f7d52b"/>
<polygon points="435.9,229.3 448.2,218.7 443.7,217.3 433.2,228.5" fill="#f7d52b"/>
<polygon points="433.2,228.5 443.7,217.3 439.0,216.2 430.3,227.8" fill="#f7d62b"/>
<polygon points="430.3,227.8 439.0,216.2 434.2,215.4 427.4,227.2" fill="#f8d62b"/>
<polygon points="427.4,227.2 434.2,215.4 429.3,214.7 424.4,226.8" fill="#f8d62b"/>
<polygon points="424.4,226.8 429.3,214.7 424.2,214.3 421.4,226.6" fill="#f9d72c"/>
<polygon points="421.4,226.6 424.2,214.3 419.2,214.1 418.3,226.4" fill="#f9d72c"/>
<polygon points="418.3,226.4 419.2,214.1 414.1,214.1 415.2,226.4" fill="#fad82c"/>
<polygon points="415.2,226.4 414.1,214.1 409.0,214.3 412.1,226.6" fill="#fad82c"/>
<polygon points="412.1,226.6 409.0,214.3 404.0,214.8 409.1,226.9" fill="#fbd92c"/>
<polygon points="409.1,226.9 404.0,214.8 399.1,215.5 406.1,227.3" fill="#fbd92c"/>
<polygon points="406.1,227.3 399.1,215.5 394.3,216.5 403.1,227.9" fill="#fcd92c"/>
<polygon points="403.1,227.9 394.3,216.5 389.6,217.6 400.3,228.6" fill="#fcda2c"/>
<polygon points="400.3,228.6 389.6,217.6 385.2,219.0 397.6,229.5" fill="#fdda2c"/>
<polygon points="397.6,229.5 385.2,219.0 380.9,220.6 395.0,230.4" fill="#fddb2c"/>
<polygon points="395.0,230.4 380.9,220.6 376.9,222.3 392.6,231.5" fill="#fedb2c"/>
<polygon points="392.6,231.5 376.9,222.3 373.1,224.2 390.3,232.7" fill="#fedb2d"/>
<polygon points="390.3,232.7 373.1,224.2 369.6,226.4 388.2,234.0" fill="#ffdc2d"/>
<polygon points="388.2,234.0 369.6,226.4 366.4,228.6 386.3,235.3" fill="#ffdc2d"/>
<polygon points="386.3,235.3 366.4,228.6 363.6,231.0 384.6,236.8" fill="#ffdc2d"/>
<polygon points="384.6,236.8 363.6,231.0 361.1,233.5 383.1,238.3" fill="#ffdd2d"/>
<polygon points="383.1,238.3 361.1,233.5 359.0,236.2 381.9,239.9" fill="#ffdd2d"/>
<polygon points="381.9,239.9 359.0,236.2 357.4,238.9 380.9,241.6" fill="#ffdd2d"/>
<polygon points="380.9,241.6 357.4,238.9 356.1,241.7 380.1,243.3" fill="#ffdd2d"/>
<polygon points="380.1,243.3 356.1,241.7 355.2,244.6 379.7,245.0" fill="#ffde2d"/>
<polygon points="379.7,245.0 355.2,244.6 354.8,247.5 379.4,246.8" fill="#ffde2d"/>
<polygon points="379.4,246.8 354.8,247.5 354.8,250.4 379.4,248.5" fill="#ffde2d"/>
<polygon points="379.4,248.5 354.8,250.4 355.2,253.3 379.7,250.3" fill="#ffde2d"/>
<polygon points="379.7,250.3 355.2,253.3 356.1,256.1 380.3,252.0" fill="#ffde2d"/>
<polygon points="380.3,252.0 356.1,256.1 357.4,259.0 381.1,253.7" fill="#ffde2d"/>
<polygon points="381.1,253.7 357.4,259.0 359.1,261.7 382.2,255.3" fill="#ffde2d"/>
<polygon points="382.2,255.3 359.1,261.7 361.3,264.4 383.5,256.9" fill="#ffde2d"/>
<polygon points="383.5,256.9 361.3,264.4 363.8,267.0 385.1,258.5" fill="#ffdd2d"/>
<polygon points="385.1,258.5 363.8,267.0 366.7,269.4 386.8,259.9" fill="#ffdd2d"/>
<polygon points="386.8,259.9 366.7,269.4 370.1,271.7 388.8,261.3" fill="#ffdd2d"/>
<polygon points="370.1,271.7 351.4,282.5 356.4,285.6 373.7,273.8" fill="#ffdf2d"/>
<polygon points="373.7,273.8 356.4,285.6 362.0,288.3 377.7,275.8" fill="#ffde2d"/>
<polygon points="377.7,275.8 362.0,288.3 367.9,290.8 381.9,277.6" fill="#ffde2d"/>
<polygon points="381.9,277.6 367.9,290.8 374.2,293.0 386.5,279.1" fill="#ffde2d"/>
<polygon points="386.5,279.1 374.2,293.0 380.9,294.9 391.2,280.4" fill="#ffdd2d"/>
<polygon points="391.2,280.4 380.9,294.9 387.8,296.4 396.2,281.5" fill="#ffdc2d"/>
<polygon points="396.2,281.5 387.8,296.4 395.0,297.6 401.3,282.4" fill="#ffdc2d"/>
<polygon points="401.3,282.4 395.0,297.6 402.3,298.5 406.5,283.0" fill="#fedb2c"/>
<polygon points="406.5,283.0 402.3,298.5 409.7,299.0 411.8,283.3" fill="#fddb2c"/>
<polygon points="411.8,283.3 409.7,299.0 417.2,299.1 417.1,283.4" fill="#fdda2c"/>
<polygon points="417.1,283.4 417.2,299.1 424.7,298.9 422.5,283.3" fill="#fcd92c"/>
<polygon points="422.5,283.3 424.7,298.9 432.2,298.3 427.8,282.9" fill="#fbd92c"/>
<polygon points="427.8,282.9 432.2,298.3 439.5,297.4 433.0,282.2" fill="#fad82c"/>
<polygon points="433.0,282.2 439.5,297.4 446.6,296.1 438.1,281.3" fill="#f9d72c"/>
<polygon points="438.1,281.3 446.6,296.1 453.5,294.5 443.0,280.1" fill="#f9d72c"/>
<polygon points="443.0,280.1 453.5,294.5 460.1,292.5 447.7,278.8" fill="#f8d62b"/>
<polygon points="447.7,278.8 460.1,292.5 466.4,290.3 452.2,277.2" fill="#f7d52b"/>
<polygon points="452.2,277.2 466.4,290.3 472.3,287.7 456.5,275.4" fill="#f6d52b"/>
<polygon points="456.5,275.4 472.3,287.7 477.8,284.9 460.4,273.4" fill="#f6d42b"/>
<polygon points="460.4,273.4 477.8,284.9 482.8,281.8 464.0,271.2" fill="#f5d42b"/>
<polygon points="464.0,271.2 482.8,281.8 487.4,278.6 467.3,268.9" fill="#f5d32b"/>
<polygon points="467.3,268.9 487.4,278.6 491.4,275.1 470.2,266.4" fill="#f4d32b"/>
<polygon points="470.2,266.4 491.4,275.1 494.8,271.4 472.7,263.8" fill="#f3d22b"/>
<polygon points="472.7,263.8 494.8,271.4 497.7,267.7 474.8,261.1" fill="#f3d22b"/>
<polygon points="474.8,261.1 497.7,267.7 500.0,263.8 476.5,258.3" fill="#f3d12a"/>
<polygon points="476.5,258.3 500.0,263.8 501.7,259.8 477.8,255.5" fill="#f2d12a"/>
<polygon points="477.8,255.5 501.7,259.8 502.8,255.8 478.6,252.6" fill="#f2d12a"/>
<polygon points="478.6,252.6 502.8,255.8 503.3,251.7 479.0,249.7" fill="#f2d12a"/>
<polygon points="479.0,249.7 503.3,251.7 503.1,247.7 479.0,246.8" fill="#f2d12a"/>
<polygon points="479.0,246.8 503.1,247.7 502.4,243.7 478.5,243.9" fill="#f1d02a"/>
<polygon points="478.5,243.9 502.4,243.7 501.1,239.7 477.6,241.1" fill="#f1d02a"/>
<polygon points="477.6,241.1 501.1,239.7 499.2,235.9 476.3,238.3" fill="#f1d02a"/>
<polygon points="476.3,238.3 499.2,235.9 496.7,232.1 474.5,235.6" fill="#f1d02a"/>
<polygon points="474.5,235.6 496.7,232.1 493.7,228.5 472.4,233.0" fill="#f2d12a"/>
<polygon points="472.4,233.0 493.7,228.5 490.2,225.1 469.9,230.5" fill="#f2d12a"/>
<polygon points="469.9,230.5 490.2,225.1 486.2,221.8 467.0,228.1" fill="#f2d12a"/>
<polygon points="467.0,228.1 486.2,221.8 481.7,218.7 463.8,225.9" fill="#f2d12a"/>
<polygon points="463.8,225.9 481.7,218.7 476.9,215.9 460.3,223.8" fill="#f3d22b"/>
<polygon points="460.3,223.8 476.9,215.9 471.6,213.3 456.5,221.9" fill="#f3d22b"/>
<polygon points="456.5,221.9 471.6,213.3 466.0,210.9 452.5,220.2" fill="#f4d22b"/>
<polygon points="452.5,220.2 466.0,210.9 460.0,208.9 448.2,218.7" fill="#f4d32b"/>
<polygon points="448.2,218.7 460.0,208.9 453.8,207.1 443.7,217.3" fill="#f5d32b"/>
<polygon points="443.7,217.3 453.8,207.1 447.4,205.6 439.0,216.2" fill="#f6d42b"/>
<polygon points="439.0,216.2 447.4,205.6 440.7,204.3 434.2,215.4" fill="#f6d52b"/>
<polygon points="434.2,215.4 440.7,204.3 433.9,203.4 429.3,214.7" fill="#f7d52b"/>
<polygon points="429.3,214.7 433.9,203.4 427.0,202.8 424.2,214.3" fill="#f8d62b"/>
<polygon points="424.2,214.3 427.0,202.8 420.1,202.6 419.2,214.1" fill="#f8d62b"/>
<polygon points="419.2,214.1 420.1,202.6 413.1,202.6 414.1,214.1" fill="#f9d72c"/>
<polygon points="414.1,214.1 413.1,202.6 406.1,203.0 409.0,214.3" fill="#fad82c"/>
<polygon points="409.0,214.3 406.1,203.0 399.2,203.6 404.0,214.8" fill="#fbd82c"/>
<polygon points="404.0,214.8 399.2,203.6 392.4,204.6 399.1,215.5" fill="#fbd92c"/>
<polygon points="399.1,215.5 392.4,204.6 385.8,205.9 394.3,216.5" fill="#fcda2c"/>
<polygon points="394.3,216.5 385.8,205.9 379.4,207.4 389.6,217.6" fill="#fdda2c"/>
<polygon points="389.6,217.6 379.4,207.4 373.2,209.3 385.2,219.0" fill="#fedb2c"/>
<polygon points="385.2,219.0 373.2,209.3 367.3,211.5 380.9,220.6" fill="#fedc2d"/>
<polygon points="380.9,220.6 367.3,211.5 361.7,213.9 376.9,222.3" fill="#ffdc2d"/>
<polygon points="376.9,222.3 361.7,213.9 356.4,216.5 373.1,224.2" fill="#ffdd2d"/>
<polygon points="373.1,224.2 356.4,216.5 351.6,219.4 369.6,226.4" fill="#ffdd2d"/>
<polygon points="369.6,226.4 351.6,219.4 347.2,222.5 366.4,228.6" fill="#ffde2d"/>
<polygon points="366.4,228.6 347.2,222.5 343.2,225.8 363.6,231.0" fill="#ffde2d"/>
<polygon points="363.6,231.0 343.2,225.8 339.7,229.3 361.1,233.5" fill="#ffdf2d"/>
<polygon points="361.1,233.5 339.7,229.3 336.8,232.9 359.0,236.2" fill="#ffdf2d"/>
<polygon points="359.0,236.2 336.8,232.9 334.4,236.7 357.4,238.9" fill="#ffdf2d"/>
<polygon points="357.4,238.9 334.4,236.7 332.5,240.6 356.1,241.7" fill="#ffe02d"/>
<polygon points="356.1,241.7 332.5,240.6 331.2,244.6 355.2,244.6" fill="#ffe02d"/>
<polygon points="355.2,244.6 331.2,244.6 330.6,248.6 354.8,247.5" fill="#ffe02d"/>
<polygon points="354.8,247.5 330.6,248.6 330.5,252.6 354.8,250.4" fill="#ffe02d"/>
<polygon points="354.8,250.4 330.5,252.6 331.0,256.7 355.2,253.3" fill="#ffe02e"/>
<polygon points="355.2,253.3 331.0,256.7 332.2,260.7 356.1,256.1" fill="#ffe02e"/>
<polygon points="356.1,256.1 332.2,260.7 333.9,264.6 357.4,259.0" fill="#ffe02d"/>
<polygon points="357.4,259.0 333.9,264.6 336.3,268.5 359.1,261.7" fill="#ffe02d"/>
<polygon points="359.1,261.7 336.3,268.5 339.2,272.3 361.3,264.4" fill="#ffe02d"/>
<polygon points="361.3,264.4 339.2,272.3 342.7,275.9 363.8,267.0" fill="#ffe02d"/>
<polygon points="363.8,267.0 342.7,275.9 346.8,279.3 366.7,269.4" fill="#ffe02d"/>
<polygon points="366.7,269.4 346.8,279.3 351.4,282.5 370.1,271.7" fill="#ffdf2d"/>
<polygon points="351.4,282.5 332.9,293.7 339.4,297.6 356.4,285.6" fill="#ffe12e"/>
<polygon points="356.4,285.6 339.4,297.6 346.4,301.2 362.0,288.3" fill="#ffe02e"/>
<polygon points="362.0,288.3 346.4,301.2 354.0,304.4 367.9,290.8" fill="#ffe02d"/>
<polygon points="367.9,290.8 354.0,304.4 362.1,307.2 374.2,293.0" fill="#ffdf2d"/>
<polygon points="374.2,293.0 362.1,307.2 370.7,309.7 380.9,294.9" fill="#ffde2d"/>
<polygon points="380.9,294.9 370.7,309.7 379.6,311.7 387.8,296.4" fill="#ffde2d"/>
<polygon points="387.8,296.4 379.6,311.7 388.7,313.2 395.0,297.6" fill="#ffdd2d"/>
<polygon points="395.0,297.6 388.7,313.2 398.2,314.4 402.3,298.5" fill="#ffdc2d"/>
<polygon points="402.3,298.5 398.2,314.4 407.7,315.0 409.7,299.0" fill="#fedb2c"/>
<polygon points="409.7,299.0 407.7,315.0 417.3,315.2 417.2,299.1" fill="#fdda2c"/>
<polygon points="417.2,299.1 417.3,315.2 427.0,314.9 424.7,298.9" fill="#fcd92c"/>
<polygon points="424.7,298.9 427.0,314.9 436.5,314.2 432.2,298.3" fill="#fbd82c"/>
<polygon points="432.2,298.3 436.5,314.2 445.9,312.9 439.5,297.4" fill="#fad82c"/>
<polygon points="439.5,297.4 445.9,312.9 455.1,311.3 446.6,296.1" fill="#f9d72c"/>
<polygon points="446.6,296.1 455.1,311.3 463.9,309.1 453.5,294.5" fill="#f8d62b"/>
<polygon points="453.5,294.5 463.9,309.1 472.4,306.6 460.1,292.5" fill="#f7d52b"/>
<polygon points="460.1,292.5 472.4,306.6 480.5,303.7 466.4,290.3" fill="#f6d42b"/>
<polygon points="466.4,290.3 480.5,303.7 488.0,300.4 472.3,287.7" fill="#f5d32b"/>
<polygon points="472.3,287.7 488.0,300.4 495.0,296.7 477.8,284.9" fill="#f4d22b"/>
<polygon points="477.8,284.9 495.0,296.7 501.4,292.8 482.8,281.8" fill="#f3d22b"/>
<polygon points="482.8,281.8 501.4,292.8 507.2,288.5 487.4,278.6" fill="#f2d12a"/>
<polygon points="487.4,278.6 507.2,288.5 512.2,284.1 491.4,275.1" fill="#f1d02a"/>
<polygon points="491.4,275.1 512.2,284.1 516.6,279.4 494.8,271.4" fill="#f1d02a"/>
<polygon points="494.8,271.4 516.6,279.4 520.2,274.5 497.7,267.7" fill="#f0cf2a"/>
<polygon points="497.7,267.7 520.2,274.5 523.0,269.5 500.0,263.8" fill="#efcf2a"/>
<polygon points="500.0,263.8 523.0,269.5 525.1,264.4 501.7,259.8" fill="#efce2a"/>
<polygon points="501.7,259.8 525.1,264.4 526.4,259.3 502.8,255.8" fill="#efce2a"/>
<polygon points="502.8,255.8 526.4,259.3 526.9,254.1 503.3,251.7" fill="#eece2a"/>
<polygon points="503.3,251.7 526.9,254.1 526.7,249.0 503.1,247.7" fill="#eecd2a"/>
<polygon points="503.1,247.7 526.7,249.0 525.6,243.9 502.4,243.7" fill="#eecd2a"/>
<polygon points="502.4,243.7 525.6,243.9 523.9,238.8 501.1,239.7" fill="#eecd2a"/>
<polygon points="501.1,239.7 523.9,238.8 521.4,233.9 499.2,235.9" fill="#eecd2a"/>
<polygon points="499.2,235.9 521.4,233.9 518.2,229.2 496.7,232.1" fill="#eecd2a"/>
<polygon points="496.7,232.1 518.2,229.2 514.3,224.6 493.7,228.5" fill="#eece2a"/>
<polygon points="493.7,228.5 514.3,224.6 509.8,220.3 490.2,225.1" fill="#eece2a"/>
<polygon points="490.2,225.1 509.8,220.3 504.7,216.2 486.2,221.8" fill="#efce2a"/>
<polygon points="486.2,221.8 504.7,216.2 499.0,212.3 481.7,218.7" fill="#efce2a"/>
<polygon points="481.7,218.7 499.0,212.3 492.7,208.7 476.9,215.9" fill="#f0cf2a"/>
<polygon points="476.9,215.9 492.7,208.7 486.0,205.5 471.6,213.3" fill="#f0cf2a"/>
<polygon points="471.6,213.3 486.0,205.5 478.9,202.5 466.0,210.9" fill="#f1d02a"/>
<polygon points="466.0,210.9 478.9,202.5 471.4,199.9 460.0,208.9" fill="#f2d12a"/>
<polygon points="460.0,208.9 471.4,199.9 463.5,197.6 453.8,207.1" fill="#f3d12a"/>
<polygon points="453.8,207.1 463.5,197.6 455.4,195.8 447.4,205.6" fill="#f3d22b"/>
<polygon points="447.4,205.6 455.4,195.8 447.0,194.2 440.7,204.3" fill="#f4d32b"/>
<polygon points="440.7,204.3 447.0,194.2 438.4,193.1 433.9,203.4" fill="#f5d42b"/>
<polygon points="433.9,203.4 438.4,193.1 429.7,192.4 427.0,202.8" fill="#f6d52b"/>
<polygon points="427.0,202.8 429.7,192.4 420.9,192.0 420.1,202.6" fill="#f7d52b"/>
<polygon points="420.1,202.6 420.9,192.0 412.1,192.1 413.1,202.6" fill="#f8d62b"/>
<polygon points="413.1,202.6 412.1,192.1 403.3,192.5 406.1,203.0" fill="#f9d72c"/>
<polygon points="406.1,203.0 403.3,192.5 394.6,193.3 399.2,203.6" fill="#fad82c"/>
<polygon points="399.2,203.6 394.6,193.3 386.0,194.5 392.4,204.6" fill="#fbd92c"/>
<polygon points="392.4,204.6 386.0,194.5 377.7,196.1 385.8,205.9" fill="#fcda2c"/>
<polygon points="385.8,205.9 377.7,196.1 369.5,198.1 379.4,207.4" fill="#fddb2c"/>
<polygon points="379.4,207.4 369.5,198.1 361.7,200.5 373.2,209.3" fill="#fedc2d"/>
<polygon points="373.2,209.3 361.7,200.5 354.2,203.1 367.3,211.5" fill="#ffdc2d"/>
<polygon points="367.3,211.5 354.2,203.1 347.1,206.2 361.7,213.9" fill="#ffdd2d"/>
<polygon points="361.7,213.9 347.1,206.2 340.4,209.5 356.4,216.5" fill="#ffde2d"/>
<polygon points="356.4,216.5 340.4,209.5 334.2,213.1 351.6,219.4" fill="#ffdf2d"/>
<polygon points="351.6,219.4 334.2,213.1 328.6,217.1 347.2,222.5" fill="#ffdf2d"/>
<polygon points="347.2,222.5 328.6,217.1 323.5,221.2 343.2,225.8" fill="#ffe02d"/>
<polygon points="343.2,225.8 323.5,221.2 319.1,225.6 339.7,229.3" fill="#ffe12e"/>
<polygon points="339.7,229.3 319.1,225.6 315.2,230.3 336.8,232.9" fill="#ffe12e"/>
<polygon points="336.8,232.9 315.2,230.3 312.1,235.0 334.4,236.7" fill="#ffe22e"/>
<polygon points="334.4,236.7 312.1,235.0 309.7,240.0 332.5,240.6" fill="#ffe22e"/>
<polygon points="332.5,240.6 309.7,240.0 308.0,245.0 331.2,244.6" fill="#ffe22e"/>
<polygon points="331.2,244.6 308.0,245.0 307.0,250.1 330.6,248.6" fill="#ffe32e"/>
<polygon points="330.6,248.6 307.0,250.1 306.8,255.3 330.5,252.6" fill="#ffe32e"/>
<polygon points="330.5,252.6 306.8,255.3 307.4,260.5 331.0,256.7" fill="#ffe32e"/>
<polygon points="331.0,256.7 307.4,260.5 308.8,265.6 332.2,260.7" fill="#ffe32e"/>
<polygon points="332.2,260.7 308.8,265.6 310.9,270.7 333.9,264.6" fill="#ffe32e"/>
<polygon points="333.9,264.6 310.9,270.7 313.9,275.6 336.3,268.5" fill="#ffe32e"/>
<polygon points="336.3,268.5 313.9,275.6 317.5,280.5 339.2,272.3" fill="#ffe22e"/>
<polygon points="339.2,272.3 317.5,280.5 322.0,285.1 342.7,275.9" fill="#ffe22e"/>
<polygon points="342.7,275.9 322.0,285.1 327.1,289.5 346.8,279.3" fill="#ffe22e"/>
<polygon points="346.8,279.3 327.1,289.5 332.9,293.7 351.4,282.5" fill="#ffe12e"/>
<polygon points="332.9,293.7 314.9,305.1 322.7,309.9 339.4,297.6" fill="#ffe32e"/>
<polygon points="339.4,297.6 322.7,309.9 331.2,314.2 346.4,301.2" fill="#ffe22e"/>
<polygon points="346.4,301.2 331.2,314.2 340.4,318.2 354.0,304.4" fill="#ffe12e"/>
<polygon points="354.0,304.4 340.4,318.2 350.2,321.7 362.1,307.2" fill="#ffe12e"/>
<polygon points="362.1,307.2 350.2,321.7 360.6,324.7 370.7,309.7" fill="#ffe02d"/>
<polygon points="370.7,309.7 360.6,324.7 371.4,327.2 379.6,311.7" fill="#ffdf2d"/>
<polygon points="379.6,311.7 371.4,327.2 382.6,329.1 388.7,313.2" fill="#ffde2d"/>
<polygon points="388.7,313.2 382.6,329.1 394.1,330.5 398.2,314.4" fill="#ffdd2d"/>
<polygon points="398.2,314.4 394.1,330.5 405.7,331.3 407.7,315.0" fill="#fedc2d"/>
<polygon points="407.7,315.0 405.7,331.3 417.5,331.5 417.3,315.2" fill="#fdda2c"/>
<polygon points="417.3,315.2 417.5,331.5 429.2,331.2 427.0,314.9" fill="#fcd92c"/>
<polygon points="427.0,314.9 429.2,331.2 440.8,330.2 436.5,314.2" fill="#fad82c"/>
<polygon points="436.5,314.2 440.8,330.2 452.3,328.7 445.9,312.9" fill="#f9d72c"/>
<polygon points="445.9,312.9 452.3,328.7 463.4,326.7 455.1,311.3" fill="#f8d62b"/>
<polygon points="455.1,311.3 463.4,326.7 474.2,324.1 463.9,309.1" fill="#f6d52b"/>
<polygon points="463.9,309.1 474.2,324.1 484.5,320.9 472.4,306.6" fill="#f5d42b"/>
<polygon points="472.4,306.6 484.5,320.9 494.3,317.3 480.5,303.7" fill="#f4d32b"/>
<polygon points="480.5,303.7 494.3,317.3 503.4,313.3 488.0,300.4" fill="#f3d12a"/>
<polygon points="488.0,300.4 503.4,313.3 511.9,308.8 495.0,296.7" fill="#f2d02a"/>
<polygon points="495.0,296.7 511.9,308.8 519.6,304.0 501.4,292.8" fill="#f0d02a"/>
<polygon points="501.4,292.8 519.6,304.0 526.5,298.8 507.2,288.5" fill="#efcf2a"/>
<polygon points="507.2,288.5 526.5,298.8 532.6,293.3 512.2,284.1" fill="#eece2a"/>
<polygon points="512.2,284.1 532.6,293.3 537.8,287.6 516.6,279.4" fill="#eecd2a"/>
<polygon points="516.6,279.4 537.8,287.6 542.1,281.7 520.2,274.5" fill="#edcc29"/>
<polygon points="520.2,274.5 542.1,281.7 545.4,275.6 523.0,269.5" fill="#eccc29"/>
<polygon points="523.0,269.5 545.4,275.6 547.8,269.4 525.1,264.4" fill="#ebcb29"/>
<polygon points="525.1,264.4 547.8,269.4 549.3,263.2 526.4,259.3" fill="#ebcb29"/>
<polygon points="526.4,259.3 549.3,263.2 549.8,256.9 526.9,254.1" fill="#eaca29"/>
<polygon points="526.9,254.1 549.8,256.9 549.4,250.7 526.7,249.0" fill="#eaca29"/>
<polygon points="526.7,249.0 549.4,250.7 548.1,244.5 525.6,243.9" fill="#eaca29"/>
<polygon points="525.6,243.9 548.1,244.5 545.8,238.4 523.9,238.8" fill="#eaca29"/>
<polygon points="523.9,238.8 545.8,238.4 542.7,232.5 521.4,233.9" fill="#eaca29"/>
<polygon points="521.4,233.9 542.7,232.5 538.8,226.8 518.2,229.2" fill="#eaca29"/>
<polygon points="518.2,229.2 538.8,226.8 534.0,221.4 514.3,224.6" fill="#eaca29"/>
<polygon points="514.3,224.6 534.0,221.4 528.5,216.1 509.8,220.3" fill="#ebcb29"/>
<polygon points="509.8,220.3 528.5,216.1 522.3,211.2 504.7,216.2" fill="#ebcb29"/>
<polygon points="504.7,216.2 522.3,211.2 515.4,206.6 499.0,212.3" fill="#eccb29"/>
<polygon points="499.0,212.3 515.4,206.6 507.9,202.3 492.7,208.7" fill="#eccc29"/>
<polygon points="492.7,208.7 507.9,202.3 499.8,198.4 486.0,205.5" fill="#edcd29"/>
<polygon points="486.0,205.5 499.8,198.4 491.2,194.9 478.9,202.5" fill="#eecd2a"/>
<polygon points="478.9,202.5 491.2,194.9 482.2,191.8 471.4,199.9" fill="#efce2a"/>
<polygon points="471.4,199.9 482.2,191.8 472.7,189.1 463.5,197.6" fill="#f0cf2a"/>
<polygon points="463.5,197.6 472.7,189.1 463.0,186.9 455.4,195.8" fill="#f1d02a"/>
<polygon points="455.4,195.8 463.0,186.9 452.9,185.1 447.0,194.2" fill="#f2d12a"/>
<polygon points="447.0,194.2 452.9,185.1 442.6,183.7 438.4,193.1" fill="#f3d22b"/>
<polygon points="438.4,193.1 442.6,183.7 432.2,182.8 429.7,192.4" fill="#f5d32b"/>
<polygon points="429.7,192.4 432.2,182.8 421.7,182.4 420.9,192.0" fill="#f6d42b"/>
<polygon points="420.9,192.0 421.7,182.4 411.1,182.5 412.1,192.1" fill="#f7d52b"/>
<polygon points="412.1,192.1 411.1,182.5 400.6,183.0 403.3,192.5" fill="#f9d72c"/>
<polygon points="403.3,192.5 400.6,183.0 390.2,184.0 394.6,193.3" fill="#fad82c"/>
<polygon points="394.6,193.3 390.2,184.0 380.0,185.4 386.0,194.5" fill="#fbd92c"/>
<polygon points="386.0,194.5 380.0,185.4 369.9,187.3 377.7,196.1" fill="#fdda2c"/>
<polygon points="377.7,196.1 369.9,187.3 360.2,189.7 369.5,198.1" fill="#fedb2c"/>
<polygon points="369.5,198.1 360.2,189.7 350.8,192.5 361.7,200.5" fill="#ffdc2d"/>
<polygon points="361.7,200.5 350.8,192.5 341.7,195.7 354.2,203.1" fill="#ffdd2d"/>
<polygon points="354.2,203.1 341.7,195.7 333.2,199.3 347.1,206.2" fill="#ffde2d"/>
<polygon points="347.1,206.2 333.2,199.3 325.2,203.3 340.4,209.5" fill="#ffdf2d"/>
<polygon points="340.4,209.5 325.2,203.3 317.7,207.6 334.2,213.1" fill="#ffe02d"/>
<polygon points="334.2,213.1 317.7,207.6 310.8,212.3 328.6,217.1" fill="#ffe12e"/>
<polygon points="328.6,217.1 310.8,212.3 304.7,217.3 323.5,221.2" fill="#ffe22e"/>
<polygon points="323.5,221.2 304.7,217.3 299.2,222.6 319.1,225.6" fill="#ffe32e"/>
<polygon points="319.1,225.6 299.2,222.6 294.6,228.1 315.2,230.3" fill="#ffe32e"/>
<polygon points="315.2,230.3 294.6,228.1 290.7,233.9 312.1,235.0" fill="#ffe42e"/>
<polygon points="312.1,235.0 290.7,233.9 287.7,239.8 309.7,240.0" fill="#ffe42e"/>
<polygon points="309.7,240.0 287.7,239.8 285.5,245.9 308.0,245.0" fill="#ffe52e"/>
<polygon points="308.0,245.0 285.5,245.9 284.3,252.1 307.0,250.1" fill="#ffe52e"/>
<polygon points="307.0,250.1 284.3,252.1 283.9,258.3 306.8,255.3" fill="#ffe52f"/>
<polygon points="306.8,255.3 283.9,258.3 284.5,264.6 307.4,260.5" fill="#ffe52f"/>
<polygon points="307.4,260.5 284.5,264.6 286.1,270.8 308.8,265.6" fill="#ffe52f"/>
<polygon points="308.8,265.6 286.1,270.8 288.6,277.0 310.9,270.7" fill="#ffe52f"/>
<polygon points="310.9,270.7 288.6,277.0 292.1,283.0 313.9,275.6" fill="#ffe52e"/>
<polygon points="313.9,275.6 292.1,283.0 296.4,288.9 317.5,280.5" fill="#ffe52e"/>
<polygon points="317.5,280.5 296.4,288.9 301.7,294.6 322.0,285.1" fill="#ffe52e"/>
<polygon points="322.0,285.1 301.7,294.6 307.9,300.0 327.1,289.5" fill="#ffe42e"/>
<polygon points="327.1,289.5 307.9,300.0 314.9,305.1 332.9,293.7" fill="#ffe42e"/>
<polygon points="314.9,305.1 297.3,316.6 306.4,322.3 322.7,309.9" fill="#ffe52e"/>
<polygon points="322.7,309.9 306.4,322.3 316.4,327.4 331.2,314.2" fill="#ffe42e"/>
<polygon points="331.2,314.2 316.4,327.4 327.1,332.1 340.4,318.2" fill="#ffe32e"/>
<polygon points="340.4,318.2 327.1,332.1 338.6,336.3 350.2,321.7" fill="#ffe22e"/>
<polygon points="350.2,321.7 338.6,336.3 350.8,339.8 360.6,324.7" fill="#ffe12e"/>
<polygon points="360.6,324.7 350.8,339.8 363.5,342.8 371.4,327.2" fill="#ffe02d"/>
<polygon points="371.4,327.2 363.5,342.8 376.6,345.1 382.6,329.1" fill="#ffdf2d"/>
<polygon points="382.6,329.1 376.6,345.1 390.1,346.7 394.1,330.5" fill="#ffdd2d"/>
<polygon points="394.1,330.5 390.1,346.7 403.8,347.7 405.7,331.3" fill="#ffdc2d"/>
<polygon points="405.7,331.3 403.8,347.7 417.6,348.0 417.5,331.5" fill="#fddb2c"/>
<polygon points="417.5,331.5 417.6,348.0 431.4,347.5 429.2,331.2" fill="#fcd92c"/>
<polygon points="429.2,331.2 431.4,347.5 445.0,346.4 440.8,330.2" fill="#fad82c"/>
<polygon points="440.8,330.2 445.0,346.4 458.5,344.6 452.3,328.7" fill="#f8d62b"/>
<polygon points="452.3,328.7 458.5,344.6 471.6,342.2 463.4,326.7" fill="#f7d52b"/>
<polygon points="463.4,326.7 471.6,342.2 484.2,339.1 474.2,324.1" fill="#f5d42b"/>
<polygon points="474.2,324.1 484.2,339.1 496.3,335.4 484.5,320.9" fill="#f3d22b"/>
<polygon points="484.5,320.9 496.3,335.4 507.7,331.1 494.3,317.3" fill="#f2d12a"/>
<polygon points="494.3,317.3 507.7,331.1 518.4,326.3 503.4,313.3" fill="#f0d02a"/>
<polygon points="503.4,313.3 518.4,326.3 528.3,321.0 511.9,308.8" fill="#efce2a"/>
<polygon points="511.9,308.8 528.3,321.0 537.2,315.3 519.6,304.0" fill="#eecd2a"/>
<polygon points="519.6,304.0 537.2,315.3 545.2,309.2 526.5,298.8" fill="#eccc29"/>
<polygon points="526.5,298.8 545.2,309.2 552.3,302.7 532.6,293.3" fill="#ebcb29"/>
<polygon points="532.6,293.3 552.3,302.7 558.2,296.0 537.8,287.6" fill="#eaca29"/>
<polygon points="537.8,287.6 558.2,296.0 563.1,289.0 542.1,281.7" fill="#e9c929"/>
<polygon points="542.1,281.7 563.1,289.0 567.0,281.9 545.4,275.6" fill="#e8c829"/>
<polygon points="545.4,275.6 567.0,281.9 569.7,274.6 547.8,269.4" fill="#e7c828"/>
<polygon points="547.8,269.4 569.7,274.6 571.3,267.3 549.3,263.2" fill="#e7c728"/>
<polygon points="549.3,263.2 571.3,267.3 571.7,260.0 549.8,256.9" fill="#e6c728"/>
<polygon points="549.8,256.9 571.7,260.0 571.1,252.7 549.4,250.7" fill="#e6c628"/>
<polygon points="549.4,250.7 571.1,252.7 569.5,245.6 548.1,244.5" fill="#e6c628"/>
<polygon points="548.1,244.5 569.5,245.6 566.8,238.5 545.8,238.4" fill="#e6c628"/>
<polygon points="545.8,238.4 566.8,238.5 563.1,231.7 542.7,232.5" fill="#e6c628"/>
<polygon points="542.7,232.5 563.1,231.7 558.4,225.1 538.8,226.8" fill="#e6c628"/>
<polygon points="538.8,226.8 558.4,225.1 552.8,218.7 534.0,221.4" fill="#e6c728"/>
<polygon points="534.0,221.4 552.8,218.7 546.3,212.7 528.5,216.1" fill="#e7c728"/>
<polygon points="528.5,216.1 546.3,212.7 539.0,207.0 522.3,211.2" fill="#e7c828"/>
<polygon points="522.3,211.2 539.0,207.0 531.0,201.7 515.4,206.6" fill="#e8c829"/>
<polygon points="515.4,206.6 531.0,201.7 522.2,196.7 507.9,202.3" fill="#e9c929"/>
<polygon points="507.9,202.3 522.2,196.7 512.8,192.2 499.8,198.4" fill="#eaca29"/>
<polygon points="499.8,198.4 512.8,192.2 502.9,188.2 491.2,194.9" fill="#ebcb29"/>
<polygon points="491.2,194.9 502.9,188.2 492.4,184.6 482.2,191.8" fill="#eccc29"/>
<polygon points="482.2,191.8 492.4,184.6 481.4,181.5 472.7,189.1" fill="#edcd29"/>
<polygon points="472.7,189.1 481.4,181.5 470.1,179.0 463.0,186.9" fill="#eece2a"/>
<polygon points="463.0,186.9 470.1,179.0 458.5,176.9 452.9,185.1" fill="#f0cf2a"/>
<polygon points="452.9,185.1 458.5,176.9 446.6,175.3 442.6,183.7" fill="#f1d02a"/>
<polygon points="442.6,183.7 446.6,175.3 434.6,174.3 432.2,182.8" fill="#f3d22a"/>
<polygon points="432.2,182.8 434.6,174.3 422.4,173.9 421.7,182.4" fill="#f4d32b"/>
<polygon points="421.7,182.4 422.4,173.9 410.3,173.9 411.1,182.5" fill="#f6d42b"/>
<polygon points="411.1,182.5 410.3,173.9 398.1,174.5 400.6,183.0" fill="#f8d62b"/>
<polygon points="400.6,183.0 398.1,174.5 386.1,175.6 390.2,184.0" fill="#f9d72c"/>
<polygon points="390.2,184.0 386.1,175.6 374.2,177.3 380.0,185.4" fill="#fbd92c"/>
<polygon points="380.0,185.4 374.2,177.3 362.6,179.5 369.9,187.3" fill="#fdda2c"/>
<polygon points="369.9,187.3 362.6,179.5 351.3,182.2 360.2,189.7" fill="#fedb2c"/>
<polygon points="360.2,189.7 351.3,182.2 340.4,185.4 350.8,192.5" fill="#ffdd2d"/>
<polygon points="350.8,192.5 340.4,185.4 330.0,189.1 341.7,195.7" fill="#ffde2d"/>
<polygon points="341.7,195.7 330.0,189.1 320.1,193.2 333.2,199.3" fill="#ffdf2d"/>
<polygon points="333.2,199.3 320.1,193.2 310.7,197.8 325.2,203.3" fill="#ffe12e"/>
<polygon points="325.2,203.3 310.7,197.8 302.0,202.8 317.7,207.6" fill="#ffe22e"/>
<polygon points="317.7,207.6 302.0,202.8 294.0,208.2 310.8,212.3" fill="#ffe32e"/>
<polygon points="310.8,212.3 294.0,208.2 286.8,214.0 304.7,217.3" fill="#ffe42e"/>
<polygon points="304.7,217.3 286.8,214.0 280.4,220.1 299.2,222.6" fill="#ffe52e"/>
<polygon points="299.2,222.6 280.4,220.1 274.9,226.5 294.6,228.1" fill="#ffe52f"/>
<polygon points="294.6,228.1 274.9,226.5 270.3,233.2 290.7,233.9" fill="#ffe62f"/>
<polygon points="290.7,233.9 270.3,233.2 266.7,240.1 287.7,239.8" fill="#ffe72f"/>
<polygon points="287.7,239.8 266.7,240.1 264.1,247.2 285.5,245.9" fill="#ffe72f"/>
<polygon points="285.5,245.9 264.1,247.2 262.5,254.4 284.3,252.1" fill="#ffe82f"/>
<polygon points="284.3,252.1 262.5,254.4 262.0,261.7 283.9,258.3" fill="#ffe82f"/>
<polygon points="283.9,258.3 262.0,261.7 262.6,269.0 284.5,264.6" fill="#ffe82f"/>
<polygon points="284.5,264.6 262.6,269.0 264.3,276.3 286.1,270.8" fill="#ffe82f"/>
<polygon points="286.1,270.8 264.3,276.3 267.1,283.5 288.6,277.0" fill="#ffe82f"/>
<polygon points="288.6,277.0 267.1,283.5 271.0,290.6 292.1,283.0" fill="#ffe82f"/>
<polygon points="292.1,283.0 271.0,290.6 276.0,297.5 296.4,288.9" fill="#ffe72f"/>
<polygon points="296.4,288.9 276.0,297.5 282.1,304.2 301.7,294.6" fill="#ffe72f"/>
<polygon points="301.7,294.6 282.1,304.2 289.2,310.6 307.9,300.0" fill="#ffe62f"/>
<polygon points="307.9,300.0 289.2,310.6 297.3,316.6 314.9,305.1" fill="#ffe62f"/>
<polygon points="297.3,316.6 280.5,328.2 290.8,334.7 306.4,322.3" fill="#ffe72f"/>
<polygon points="306.4,322.3 290.8,334.7 302.1,340.7 316.4,327.4" fill="#ffe62f"/>
<polygon points="316.4,327.4 302.1,340.7 314.4,346.1 327.1,332.1" fill="#ffe52e"/>
<polygon points="327.1,332.1 314.4,346.1 327.5,350.9 338.6,336.3" fill="#ffe42e"/>
<polygon points="338.6,336.3 327.5,350.9 341.3,355.0 350.8,339.8" fill="#ffe22e"/>
<polygon points="350.8,339.8 341.3,355.0 355.8,358.4 363.5,342.8" fill="#ffe12e"/>
<polygon points="363.5,342.8 355.8,358.4 370.8,361.0 376.6,345.1" fill="#ffdf2d"/>
<polygon points="376.6,345.1 370.8,361.0 386.2,362.9 390.1,346.7" fill="#ffde2d"/>
<polygon points="390.1,346.7 386.2,362.9 401.9,364.0 403.8,347.7" fill="#ffdc2d"/>
<polygon points="403.8,347.7 401.9,364.0 417.7,364.4 417.6,348.0" fill="#fddb2c"/>
<polygon points="417.6,348.0 417.7,364.4 433.5,363.9 431.4,347.5" fill="#fbd92c"/>
<polygon points="431.4,347.5 433.5,363.9 449.1,362.6 445.0,346.4" fill="#f9d72c"/>
<polygon points="445.0,346.4 449.1,362.6 464.5,360.5 458.5,344.6" fill="#f7d52b"/>
<polygon points="458.5,344.6 464.5,360.5 479.4,357.7 471.6,342.2" fill="#f5d42b"/>
<polygon points="471.6,342.2 479.4,357.7 493.9,354.1 484.2,339.1" fill="#f3d22b"/>
<polygon points="484.2,339.1 493.9,354.1 507.6,349.8 496.3,335.4" fill="#f2d02a"/>
<polygon points="496.3,335.4 507.6,349.8 520.7,344.9 507.7,331.1" fill="#f0cf2a"/>
<polygon points="507.7,331.1 520.7,344.9 532.8,339.4 518.4,326.3" fill="#eecd2a"/>
<polygon points="518.4,326.3 532.8,339.4 544.0,333.3 528.3,321.0" fill="#eccc29"/>
<polygon points="528.3,321.0 544.0,333.3 554.2,326.7 537.2,315.3" fill="#eaca29"/>
<polygon points="537.2,315.3 554.2,326.7 563.2,319.7 545.2,309.2" fill="#e9c929"/>
<polygon points="545.2,309.2 563.2,319.7 571.1,312.3 552.3,302.7" fill="#e8c828"/>
<polygon points="552.3,302.7 571.1,312.3 577.8,304.5 558.2,296.0" fill="#e6c728"/>
<polygon points="558.2,296.0 577.8,304.5 583.3,296.6 563.1,289.0" fill="#e5c628"/>
<polygon points="563.1,289.0 583.3,296.6 587.5,288.4 567.0,281.9" fill="#e4c528"/>
<polygon points="567.0,281.9 587.5,288.4 590.5,280.1 569.7,274.6" fill="#e3c428"/>
<polygon points="569.7,274.6 590.5,280.1 592.1,271.8 571.3,267.3" fill="#e2c328"/>
<polygon points="571.3,267.3 592.1,271.8 592.6,263.5 571.7,260.0" fill="#e2c327"/>
<polygon points="571.7,260.0 592.6,263.5 591.8,255.2 571.1,252.7" fill="#e1c227"/>
<polygon points="571.1,252.7 591.8,255.2 589.8,247.1 569.5,245.6" fill="#e1c227"/>
<polygon points="569.5,245.6 589.8,247.1 586.6,239.1 566.8,238.5" fill="#e1c227"/>
<polygon points="566.8,238.5 586.6,239.1 582.3,231.3 563.1,231.7" fill="#e1c227"/>
<polygon points="563.1,231.7 582.3,231.3 576.9,223.9 558.4,225.1" fill="#e1c227"/>
<polygon points="558.4,225.1 576.9,223.9 570.5,216.7 552.8,218.7" fill="#e1c327"/>
<polygon points="552.8,218.7 570.5,216.7 563.1,209.9 546.3,212.7" fill="#e2c328"/>
<polygon points="546.3,212.7 563.1,209.9 554.8,203.5 539.0,207.0" fill="#e3c428"/>
<polygon points="539.0,207.0 554.8,203.5 545.6,197.5 531.0,201.7" fill="#e4c428"/>
<polygon points="531.0,201.7 545.6,197.5 535.7,192.0 522.2,196.7" fill="#e5c528"/>
<polygon points="522.2,196.7 535.7,192.0 525.0,186.9 512.8,192.2" fill="#e6c628"/>
<polygon points="512.8,192.2 525.0,186.9 513.7,182.4 502.9,188.2" fill="#e7c728"/>
<polygon points="502.9,188.2 513.7,182.4 501.9,178.4 492.4,184.6" fill="#e8c929"/>
<polygon points="492.4,184.6 501.9,178.4 489.6,174.9 481.4,181.5" fill="#eaca29"/>
<polygon points="481.4,181.5 489.6,174.9 476.8,172.0 470.1,179.0" fill="#ebcb29"/>
<polygon points="470.1,179.0 476.8,172.0 463.7,169.7 458.5,176.9" fill="#edcd29"/>
<polygon points="458.5,176.9 463.7,169.7 450.4,168.0 446.6,175.3" fill="#efce2a"/>
<polygon points="446.6,175.3 450.4,168.0 436.8,166.8 434.6,174.3" fill="#f1d02a"/>
<polygon points="434.6,174.3 436.8,166.8 423.1,166.3 422.4,173.9" fill="#f3d12a"/>
<polygon points="422.4,173.9 423.1,166.3 409.4,166.4 410.3,173.9" fill="#f5d32b"/>
<polygon points="410.3,173.9 409.4,166.4 395.8,167.0 398.1,174.5" fill="#f6d52b"/>
<polygon points="398.1,174.5 395.8,167.0 382.2,168.3 386.1,175.6" fill="#f8d62b"/>
<polygon points="386.1,175.6 382.2,168.3 368.9,170.2 374.2,177.3" fill="#fad82c"/>
<polygon points="374.2,177.3 368.9,170.2 355.8,172.6 362.6,179.5" fill="#fcda2c"/>
<polygon points="362.6,179.5 355.8,172.6 343.1,175.6 351.3,182.2" fill="#fedc2d"/>
<polygon points="351.3,182.2 343.1,175.6 330.8,179.2 340.4,185.4" fill="#ffdd2d"/>
<polygon points="340.4,185.4 330.8,179.2 319.0,183.4 330.0,189.1" fill="#ffdf2d"/>
<polygon points="330.0,189.1 319.0,183.4 307.8,188.0 320.1,193.2" fill="#ffe02d"/>
<polygon points="320.1,193.2 307.8,188.0 297.2,193.2 310.7,197.8" fill="#ffe22e"/>
<polygon points="310.7,197.8 297.2,193.2 287.3,198.8 302.0,202.8" fill="#ffe32e"/>
<polygon points="302.0,202.8 287.3,198.8 278.2,204.9 294.0,208.2" fill="#ffe42e"/>
<polygon points="294.0,208.2 278.2,204.9 270.0,211.4 286.8,214.0" fill="#ffe62f"/>
<polygon points="286.8,214.0 270.0,211.4 262.7,218.3 280.4,220.1" fill="#ffe72f"/>
<polygon points="280.4,220.1 262.7,218.3 256.3,225.5 274.9,226.5" fill="#ffe82f"/>
<polygon points="274.9,226.5 256.3,225.5 251.0,233.1 270.3,233.2" fill="#ffe82f"/>
<polygon points="270.3,233.2 251.0,233.1 246.8,240.9 266.7,240.1" fill="#ffe92f"/>
<polygon points="266.7,240.1 246.8,240.9 243.7,248.9 264.1,247.2" fill="#ffea2f"/>
<polygon points="264.1,247.2 243.7,248.9 241.8,257.1 262.5,254.4" fill="#ffea30"/>
<polygon points="262.5,254.4 241.8,257.1 241.1,265.4 262.0,261.7" fill="#ffeb30"/>
<polygon points="262.0,261.7 241.1,265.4 241.7,273.7 262.6,269.0" fill="#ffeb30"/>
<polygon points="262.6,269.0 241.7,273.7 243.5,282.0 264.3,276.3" fill="#ffeb30"/>
<polygon points="264.3,276.3 243.5,282.0 246.6,290.3 267.1,283.5" fill="#ffeb30"/>
<polygon points="267.1,283.5 246.6,290.3 250.9,298.4 271.0,290.6" fill="#ffea30"/>
<polygon points="271.0,290.6 250.9,298.4 256.5,306.3 276.0,297.5" fill="#ffea2f"/>
<polygon points="276.0,297.5 256.5,306.3 263.3,314.0 282.1,304.2" fill="#ffe92f"/>
<polygon points="282.1,304.2 263.3,314.0 271.4,321.3 289.2,310.6" fill="#ffe92f"/>
<polygon points="289.2,310.6 271.4,321.3 280.5,328.2 297.3,316.6" fill="#ffe82f"/>
<polygon points="280.5,328.2 264.6,339.8 276.0,347.1 290.8,334.7" fill="#ffe92f"/>
<polygon points="290.8,334.7 276.0,347.1 288.5,353.8 302.1,340.7" fill="#ffe82f"/>
<polygon points="302.1,340.7 288.5,353.8 302.2,359.9 314.4,346.1" fill="#ffe72f"/>
<polygon points="314.4,346.1 302.2,359.9 316.8,365.3 327.5,350.9" fill="#ffe52f"/>
<polygon points="327.5,350.9 316.8,365.3 332.3,370.0 341.3,355.0" fill="#ffe42e"/>
<polygon points="341.3,355.0 332.3,370.0 348.5,373.8 355.8,358.4" fill="#ffe22e"/>
<polygon points="355.8,358.4 348.5,373.8 365.3,376.8 370.8,361.0" fill="#ffe02d"/>
<polygon points="370.8,361.0 365.3,376.8 382.5,379.0 386.2,362.9" fill="#ffde2d"/>
<polygon points="386.2,362.9 382.5,379.0 400.1,380.2 401.9,364.0" fill="#ffdc2d"/>
<polygon points="401.9,364.0 400.1,380.2 417.8,380.6 417.7,364.4" fill="#fdda2c"/>
<polygon points="417.7,364.4 417.8,380.6 435.5,380.0 433.5,363.9" fill="#fbd82c"/>
<polygon points="433.5,363.9 435.5,380.0 453.0,378.6 449.1,362.6" fill="#f8d62b"/>
<polygon points="449.1,362.6 453.0,378.6 470.2,376.2 464.5,360.5" fill="#f6d42b"/>
<polygon points="464.5,360.5 470.2,376.2 487.0,373.0 479.4,357.7" fill="#f4d22b"/>
<polygon points="479.4,357.7 487.0,373.0 503.1,369.0 493.9,354.1" fill="#f1d02a"/>
<polygon points="493.9,354.1 503.1,369.0 518.5,364.2 507.6,349.8" fill="#efce2a"/>
<polygon points="507.6,349.8 518.5,364.2 533.0,358.6 520.7,344.9" fill="#edcd29"/>
<polygon points="520.7,344.9 533.0,358.6 546.5,352.4 532.8,339.4" fill="#ebcb29"/>
<polygon points="532.8,339.4 546.5,352.4 559.0,345.5 544.0,333.3" fill="#e9c929"/>
<polygon points="544.0,333.3 559.0,345.5 570.2,338.1 554.2,326.7" fill="#e7c728"/>
<polygon points="554.2,326.7 570.2,338.1 580.3,330.2 563.2,319.7" fill="#e5c628"/>
<polygon points="563.2,319.7 580.3,330.2 589.0,321.8 571.1,312.3" fill="#e3c428"/>
<polygon points="571.1,312.3 589.0,321.8 596.4,313.2 577.8,304.5" fill="#e2c327"/>
<polygon points="577.8,304.5 596.4,313.2 602.3,304.2 583.3,296.6" fill="#e0c227"/>
<polygon points="583.3,296.6 602.3,304.2 606.9,295.1 587.5,288.4" fill="#dfc127"/>
<polygon points="587.5,288.4 606.9,295.1 610.1,285.9 590.5,280.1" fill="#dec027"/>
<polygon points="590.5,280.1 610.1,285.9 611.8,276.5 592.1,271.8" fill="#ddbf27"/>
<polygon points="592.1,271.8 611.8,276.5 612.2,267.3 592.6,263.5" fill="#dcbe27"/>
<polygon points="592.6,263.5 612.2,267.3 611.1,258.1 591.8,255.2" fill="#dcbe26"/>
<polygon points="591.8,255.2 611.1,258.1 608.8,249.0 589.8,247.1" fill="#dcbe26"/>
<polygon points="589.8,247.1 608.8,249.0 605.1,240.1 586.6,239.1" fill="#dbbd26"/>
<polygon points="586.6,239.1 605.1,240.1 600.2,231.5 582.3,231.3" fill="#dbbd26"/>
<polygon points="582.3,231.3 600.2,231.5 594.1,223.2 576.9,223.9" fill="#dcbe26"/>
<polygon points="576.9,223.9 594.1,223.2 586.9,215.3 570.5,216.7" fill="#dcbe26"/>
<polygon points="570.5,216.7 586.9,215.3 578.6,207.8 563.1,209.9" fill="#ddbf27"/>
<polygon points="563.1,209.9 578.6,207.8 569.4,200.7 554.8,203.5" fill="#debf27"/>
<polygon points="554.8,203.5 569.4,200.7 559.2,194.1 545.6,197.5" fill="#dfc027"/>
<polygon points="545.6,197.5 559.2,194.1 548.1,188.0 535.7,192.0" fill="#e0c127"/>
<polygon points="535.7,192.0 548.1,188.0 536.3,182.4 525.0,186.9" fill="#e1c227"/>
<polygon points="525.0,186.9 536.3,182.4 523.8,177.5 513.7,182.4" fill="#e3c428"/>
<polygon points="513.7,182.4 523.8,177.5 510.7,173.0 501.9,178.4" fill="#e4c528"/>
<polygon points="501.9,178.4 510.7,173.0 497.1,169.2 489.6,174.9" fill="#e6c728"/>
<polygon points="489.6,174.9 497.1,169.2 483.0,166.1 476.8,172.0" fill="#e8c829"/>
<polygon points="476.8,172.0 483.0,166.1 468.6,163.5 463.7,169.7" fill="#eaca29"/>
<polygon points="463.7,169.7 468.6,163.5 453.8,161.6 450.4,168.0" fill="#eccc29"/>
<polygon points="450.4,168.0 453.8,161.6 438.9,160.4 436.8,166.8" fill="#eece2a"/>
<polygon points="436.8,166.8 438.9,160.4 423.8,159.8 423.1,166.3" fill="#f0d02a"/>
<polygon points="423.1,166.3 423.8,159.8 408.7,159.9 409.4,166.4" fill="#f3d22a"/>
<polygon points="409.4,166.4 408.7,159.9 393.6,160.6 395.8,167.0" fill="#f5d42b"/>
<polygon points="395.8,167.0 393.6,160.6 378.7,162.0 382.2,168.3" fill="#f7d62b"/>
<polygon points="382.2,168.3 378.7,162.0 364.0,164.0 368.9,170.2" fill="#fad82c"/>
<polygon points="368.9,170.2 364.0,164.0 349.5,166.7 355.8,172.6" fill="#fcda2c"/>
<polygon points="355.8,172.6 349.5,166.7 335.5,170.1 343.1,175.6" fill="#fedc2d"/>
<polygon points="343.1,175.6 335.5,170.1 321.9,174.0 330.8,179.2" fill="#ffdd2d"/>
<polygon points="330.8,179.2 321.9,174.0 308.8,178.5 319.0,183.4" fill="#ffdf2d"/>
<polygon points="319.0,183.4 308.8,178.5 296.4,183.7 307.8,188.0" fill="#ffe12e"/>
<polygon points="307.8,188.0 296.4,183.7 284.6,189.3 297.2,193.2" fill="#ffe32e"/>
<polygon points="297.2,193.2 284.6,189.3 273.6,195.6 287.3,198.8" fill="#ffe42e"/>
<polygon points="287.3,198.8 273.6,195.6 263.5,202.3 278.2,204.9" fill="#ffe62f"/>
<polygon points="278.2,204.9 263.5,202.3 254.3,209.5 270.0,211.4" fill="#ffe72f"/>
<polygon points="270.0,211.4 254.3,209.5 246.1,217.1 262.7,218.3" fill="#ffe92f"/>
<polygon points="262.7,218.3 246.1,217.1 239.0,225.1 256.3,225.5" fill="#ffea2f"/>
<polygon points="256.3,225.5 239.0,225.1 233.0,233.5 251.0,233.1" fill="#ffeb30"/>
<polygon points="251.0,233.1 233.0,233.5 228.2,242.1 246.8,240.9" fill="#ffec30"/>
<polygon points="246.8,240.9 228.2,242.1 224.7,251.0 243.7,248.9" fill="#ffec30"/>
<polygon points="243.7,248.9 224.7,251.0 222.4,260.1 241.8,257.1" fill="#ffed30"/>
<polygon points="241.8,257.1 222.4,260.1 221.6,269.4 241.1,265.4" fill="#ffed30"/>
<polygon points="241.1,265.4 221.6,269.4 222.0,278.7 241.7,273.7" fill="#ffee30"/>
<polygon points="241.7,273.7 222.0,278.7 223.9,288.0 243.5,282.0" fill="#ffee30"/>
<polygon points="243.5,282.0 223.9,288.0 227.2,297.2 246.6,290.3" fill="#ffed30"/>
<polygon points="246.6,290.3 227.2,297.2 231.9,306.3 250.9,298.4" fill="#ffed30"/>
<polygon points="250.9,298.4 231.9,306.3 238.0,315.2 256.5,306.3" fill="#ffed30"/>
<polygon points="256.5,306.3 238.0,315.2 245.5,323.7 263.3,314.0" fill="#ffec30"/>
<polygon points="263.3,314.0 245.5,323.7 254.4,332.0 271.4,321.3" fill="#ffeb30"/>
<polygon points="271.4,321.3 254.4,332.0 264.6,339.8 280.5,328.2" fill="#ffea30"/>
<polygon points="264.6,339.8 249.6,351.2 262.0,359.3 276.0,347.1" fill="#ffeb30"/>
<polygon points="276.0,347.1 262.0,359.3 275.8,366.8 288.5,353.8" fill="#ffea2f"/>
<polygon points="288.5,353.8 275.8,366.8 290.7,373.5 302.2,359.9" fill="#ffe82f"/>
<polygon points="302.2,359.9 290.7,373.5 306.8,379.5 316.8,365.3" fill="#ffe72f"/>
<polygon points="316.8,365.3 306.8,379.5 323.8,384.7 332.3,370.0" fill="#ffe52e"/>
<polygon points="332.3,370.0 323.8,384.7 341.6,389.0 348.5,373.8" fill="#ffe32e"/>
<polygon points="348.5,373.8 341.6,389.0 360.1,392.3 365.3,376.8" fill="#ffe12e"/>
<polygon points="365.3,376.8 360.1,392.3 379.1,394.7 382.5,379.0" fill="#ffdf2d"/>
<polygon points="382.5,379.0 379.1,394.7 398.4,396.1 400.1,380.2" fill="#ffdc2d"/>
<polygon points="400.1,380.2 398.4,396.1 417.9,396.5 417.8,380.6" fill="#fdda2c"/>
<polygon points="417.8,380.6 417.9,396.5 437.4,395.9 435.5,380.0" fill="#fad82c"/>
<polygon points="435.5,380.0 437.4,395.9 456.7,394.3 453.0,378.6" fill="#f7d52b"/>
<polygon points="453.0,378.6 456.7,394.3 475.6,391.7 470.2,376.2" fill="#f4d32b"/>
<polygon points="470.2,376.2 475.6,391.7 494.0,388.1 487.0,373.0" fill="#f2d12a"/>
<polygon points="487.0,373.0 494.0,388.1 511.8,383.6 503.1,369.0" fill="#efce2a"/>
<polygon points="503.1,369.0 511.8,383.6 528.7,378.2 518.5,364.2" fill="#eccc29"/>
<polygon points="518.5,364.2 528.7,378.2 544.6,372.1 533.0,358.6" fill="#eaca29"/>
<polygon points="533.0,358.6 544.6,372.1 559.4,365.1 546.5,352.4" fill="#e7c828"/>
<polygon points="546.5,352.4 559.4,365.1 573.0,357.5 559.0,345.5" fill="#e5c628"/>
<polygon points="559.0,345.5 573.0,357.5 585.3,349.3 570.2,338.1" fill="#e3c428"/>
<polygon points="570.2,338.1 585.3,349.3 596.2,340.6 580.3,330.2" fill="#e0c227"/>
<polygon points="580.3,330.2 596.2,340.6 605.7,331.4 589.0,321.8" fill="#dec027"/>
<polygon points="589.0,321.8 605.7,331.4 613.7,321.8 596.4,313.2" fill="#ddbe27"/>
<polygon points="596.4,313.2 613.7,321.8 620.1,311.9 602.3,304.2" fill="#dbbd26"/>
<polygon points="602.3,304.2 620.1,311.9 625.0,301.9 606.9,295.1" fill="#d9bc26"/>
<polygon points="606.9,295.1 625.0,301.9 628.3,291.7 610.1,285.9" fill="#d8bb26"/>
<polygon points="610.1,285.9 628.3,291.7 630.1,281.5 611.8,276.5" fill="#d7ba26"/>
<polygon points="611.8,276.5 630.1,281.5 630.3,271.3 612.2,267.3" fill="#d6b925"/>
<polygon points="612.2,267.3 630.3,271.3 629.1,261.2 611.1,258.1" fill="#d6b825"/>
<polygon points="611.1,258.1 629.1,261.2 626.4,251.3 608.8,249.0" fill="#d5b825"/>
<polygon points="608.8,249.0 626.4,251.3 622.3,241.6 605.1,240.1" fill="#d5b825"/>
<polygon points="605.1,240.1 622.3,241.6 616.8,232.2 600.2,231.5" fill="#d5b825"/>
<polygon points="600.2,231.5 616.8,232.2 610.1,223.2 594.1,223.2" fill="#d5b825"/>
<polygon points="594.1,223.2 610.1,223.2 602.1,214.6 586.9,215.3" fill="#d6b925"/>
<polygon points="586.9,215.3 602.1,214.6 593.0,206.4 578.6,207.8" fill="#d7b926"/>
<polygon points="578.6,207.8 593.0,206.4 582.8,198.7 569.4,200.7" fill="#d8ba26"/>
<polygon points="569.4,200.7 582.8,198.7 571.7,191.5 559.2,194.1" fill="#d9bb26"/>
<polygon points="559.2,194.1 571.7,191.5 559.6,184.9 548.1,188.0" fill="#dabc26"/>
<polygon points="548.1,188.0 559.6,184.9 546.7,178.9 536.3,182.4" fill="#dcbe26"/>
<polygon points="536.3,182.4 546.7,178.9 533.1,173.5 523.8,177.5" fill="#debf27"/>
<polygon points="523.8,177.5 533.1,173.5 518.8,168.7 510.7,173.0" fill="#e0c127"/>
<polygon points="510.7,173.0 518.8,168.7 504.0,164.6 497.1,169.2" fill="#e2c327"/>
<polygon points="497.1,169.2 504.0,164.6 488.7,161.1 483.0,166.1" fill="#e4c528"/>
<polygon points="483.0,166.1 488.7,161.1 473.0,158.4 468.6,163.5" fill="#e6c728"/>
<polygon points="468.6,163.5 473.0,158.4 457.0,156.3 453.8,161.6" fill="#e9c929"/>
<polygon points="453.8,161.6 457.0,156.3 440.7,155.0 438.9,160.4" fill="#ebcb29"/>
<polygon points="438.9,160.4 440.7,155.0 424.4,154.4 423.8,159.8" fill="#eecd2a"/>
<polygon points="423.8,159.8 424.4,154.4 408.0,154.4 408.7,159.9" fill="#f1d02a"/>
<polygon points="408.7,159.9 408.0,154.4 391.7,155.2 393.6,160.6" fill="#f3d22b"/>
<polygon points="393.6,160.6 391.7,155.2 375.4,156.7 378.7,162.0" fill="#f6d42b"/>
<polygon points="378.7,162.0 375.4,156.7 359.5,158.9 364.0,164.0" fill="#f9d72c"/>
<polygon points="364.0,164.0 359.5,158.9 343.8,161.9 349.5,166.7" fill="#fbd92c"/>
<polygon points="349.5,166.7 343.8,161.9 328.5,165.4 335.5,170.1" fill="#fedb2c"/>
<polygon points="335.5,170.1 328.5,165.4 313.7,169.7 321.9,174.0" fill="#ffde2d"/>
<polygon points="321.9,174.0 313.7,169.7 299.5,174.6 308.8,178.5" fill="#ffe02d"/>
<polygon points="308.8,178.5 299.5,174.6 285.9,180.2 296.4,183.7" fill="#ffe22e"/>
<polygon points="296.4,183.7 285.9,180.2 273.1,186.3 284.6,189.3" fill="#ffe42e"/>
<polygon points="284.6,189.3 273.1,186.3 261.1,193.1 273.6,195.6" fill="#ffe62f"/>
<polygon points="273.6,195.6 261.1,193.1 250.0,200.4 263.5,202.3" fill="#ffe82f"/>
<polygon points="263.5,202.3 250.0,200.4 239.9,208.2 254.3,209.5" fill="#ffe92f"/>
<polygon points="254.3,209.5 239.9,208.2 230.9,216.5 246.1,217.1" fill="#ffeb30"/>
<polygon points="246.1,217.1 230.9,216.5 223.0,225.2 239.0,225.1" fill="#ffec30"/>
<polygon points="239.0,225.1 223.0,225.2 216.4,234.3 233.0,233.5" fill="#ffed30"/>
<polygon points="233.0,233.5 216.4,234.3 211.0,243.8 228.2,242.1" fill="#ffee30"/>
<polygon points="228.2,242.1 211.0,243.8 207.0,253.5 224.7,251.0" fill="#ffef31"/>
<polygon points="224.7,251.0 207.0,253.5 204.5,263.5 222.4,260.1" fill="#fff031"/>
<polygon points="222.4,260.1 204.5,263.5 203.4,273.6 221.6,269.4" fill="#fff031"/>
<polygon points="221.6,269.4 203.4,273.6 203.7,283.8 222.0,278.7" fill="#fff031"/>
<polygon points="222.0,278.7 203.7,283.8 205.7,294.0 223.9,288.0" fill="#fff131"/>
<polygon points="223.9,288.0 205.7,294.0 209.1,304.2 227.2,297.2" fill="#fff031"/>
<polygon points="227.2,297.2 209.1,304.2 214.2,314.2 231.9,306.3" fill="#fff031"/>
<polygon points="231.9,306.3 214.2,314.2 220.8,324.0 238.0,315.2" fill="#ffef31"/>
<polygon points="238.0,315.2 220.8,324.0 228.9,333.5 245.5,323.7" fill="#ffef30"/>
<polygon points="245.5,323.7 228.9,333.5 238.5,342.6 254.4,332.0" fill="#ffee30"/>
<polygon points="254.4,332.0 238.5,342.6 249.6,351.2 264.6,339.8" fill="#ffed30"/>
<polygon points="249.6,351.2 235.7,362.4 249.1,371.2 262.0,359.3" fill="#ffee30"/>
<polygon points="262.0,359.3 249.1,371.2 264.0,379.4 275.8,366.8" fill="#ffec30"/>
<polygon points="275.8,366.8 264.0,379.4 280.1,386.8 290.7,373.5" fill="#ffea30"/>
<polygon points="290.7,373.5 280.1,386.8 297.5,393.3 306.8,379.5" fill="#ffe82f"/>
<polygon points="306.8,379.5 297.5,393.3 315.9,399.0 323.8,384.7" fill="#ffe62f"/>
<polygon points="323.8,384.7 315.9,399.0 335.2,403.7 341.6,389.0" fill="#ffe42e"/>
<polygon points="341.6,389.0 335.2,403.7 355.2,407.4 360.1,392.3" fill="#ffe12e"/>
<polygon points="360.1,392.3 355.2,407.4 375.8,410.0 379.1,394.7" fill="#ffdf2d"/>
<polygon points="379.1,394.7 375.8,410.0 396.8,411.5 398.4,396.1" fill="#ffdc2d"/>
<polygon points="398.4,396.1 396.8,411.5 418.0,411.9 417.9,396.5" fill="#fcd92c"/>
<polygon points="417.9,396.5 418.0,411.9 439.1,411.3 437.4,395.9" fill="#f9d72c"/>
<polygon points="437.4,395.9 439.1,411.3 460.1,409.5 456.7,394.3" fill="#f5d42b"/>
<polygon points="456.7,394.3 460.1,409.5 480.6,406.6 475.6,391.7" fill="#f2d12a"/>
<polygon points="475.6,391.7 480.6,406.6 500.6,402.7 494.0,388.1" fill="#efce2a"/>
<polygon points="494.0,388.1 500.6,402.7 519.8,397.8 511.8,383.6" fill="#eccc29"/>
<polygon points="511.8,383.6 519.8,397.8 538.1,391.9 528.7,378.2" fill="#e9c929"/>
<polygon points="528.7,378.2 538.1,391.9 555.3,385.2 544.6,372.1" fill="#e6c628"/>
<polygon points="544.6,372.1 555.3,385.2 571.4,377.6 559.4,365.1" fill="#e3c428"/>
<polygon points="559.4,365.1 571.4,377.6 586.0,369.3 573.0,357.5" fill="#e0c127"/>
<polygon points="573.0,357.5 586.0,369.3 599.3,360.3 585.3,349.3" fill="#ddbf27"/>
<polygon points="585.3,349.3 599.3,360.3 611.0,350.8 596.2,340.6" fill="#dbbd26"/>
<polygon points="596.2,340.6 611.0,350.8 621.1,340.8 605.7,331.4" fill="#d9bb26"/>
<polygon points="605.7,331.4 621.1,340.8 629.6,330.4 613.7,321.8" fill="#d6b925"/>
<polygon points="613.7,321.8 629.6,330.4 636.5,319.7 620.1,311.9" fill="#d4b725"/>
<polygon points="620.1,311.9 636.5,319.7 641.6,308.7 625.0,301.9" fill="#d3b625"/>
<polygon points="625.0,301.9 641.6,308.7 645.1,297.7 628.3,291.7" fill="#d1b525"/>
<polygon points="628.3,291.7 645.1,297.7 646.9,286.6 630.1,281.5" fill="#d0b424"/>
<polygon points="630.1,281.5 646.9,286.6 647.0,275.6 630.3,271.3" fill="#cfb324"/>
<polygon points="630.3,271.3 647.0,275.6 645.5,264.7 629.1,261.2" fill="#ceb224"/>
<polygon points="629.1,261.2 645.5,264.7 642.5,254.0 626.4,251.3" fill="#ceb224"/>
<polygon points="626.4,251.3 642.5,254.0 637.9,243.6 622.3,241.6" fill="#ceb224"/>
<polygon points="622.3,241.6 637.9,243.6 631.9,233.5 616.8,232.2" fill="#ceb224"/>
<polygon points="616.8,232.2 631.9,233.5 624.6,223.7 610.1,223.2" fill="#ceb224"/>
<polygon points="610.1,223.2 624.6,223.7 615.9,214.5 602.1,214.6" fill="#cfb224"/>
<polygon points="602.1,214.6 615.9,214.5 606.1,205.7 593.0,206.4" fill="#d0b324"/>
<polygon points="593.0,206.4 606.1,205.7 595.1,197.4 582.8,198.7" fill="#d1b424"/>
<polygon points="582.8,198.7 595.1,197.4 583.0,189.7 571.7,191.5" fill="#d2b525"/>
<polygon points="571.7,191.5 583.0,189.7 570.0,182.6 559.6,184.9" fill="#d4b725"/>
<polygon points="559.6,184.9 570.0,182.6 556.1,176.2 546.7,178.9" fill="#d6b825"/>
<polygon points="546.7,178.9 556.1,176.2 541.5,170.4 533.1,173.5" fill="#d8ba26"/>
<polygon points="533.1,173.5 541.5,170.4 526.2,165.3 518.8,168.7" fill="#dabc26"/>
<polygon points="518.8,168.7 526.2,165.3 510.2,160.9 504.0,164.6" fill="#dcbe27"/>
<polygon points="504.0,164.6 510.2,160.9 493.8,157.2 488.7,161.1" fill="#dfc027"/>
<polygon points="488.7,161.1 493.8,157.2 477.0,154.3 473.0,158.4" fill="#e2c327"/>
<polygon points="473.0,158.4 477.0,154.3 459.8,152.1 457.0,156.3" fill="#e4c528"/>
<polygon points="457.0,156.3 459.8,152.1 442.5,150.6 440.7,155.0" fill="#e7c828"/>
<polygon points="440.7,155.0 442.5,150.6 424.9,150.0 424.4,154.4" fill="#ebca29"/>
<polygon points="424.4,154.4 424.9,150.0 407.4,150.1 408.0,154.4" fill="#eecd2a"/>
<polygon points="408.0,154.4 407.4,150.1 389.9,150.9 391.7,155.2" fill="#f1d02a"/>
<polygon points="391.7,155.2 389.9,150.9 372.5,152.5 375.4,156.7" fill="#f4d32b"/>
<polygon points="375.4,156.7 372.5,152.5 355.4,154.9 359.5,158.9" fill="#f7d52b"/>
<polygon points="359.5,158.9 355.4,154.9 338.6,158.0 343.8,161.9" fill="#fad82c"/>
<polygon points="343.8,161.9 338.6,158.0 322.2,161.8 328.5,165.4" fill="#fedb2c"/>
<polygon points="328.5,165.4 322.2,161.8 306.3,166.4 313.7,169.7" fill="#ffde2d"/>
<polygon points="313.7,169.7 306.3,166.4 291.0,171.6 299.5,174.6" fill="#ffe02d"/>
<polygon points="299.5,174.6 291.0,171.6 276.4,177.6 285.9,180.2" fill="#ffe32e"/>
<polygon points="285.9,180.2 276.4,177.6 262.6,184.2 273.1,186.3" fill="#ffe52e"/>
<polygon points="273.1,186.3 262.6,184.2 249.7,191.4 261.1,193.1" fill="#ffe72f"/>
<polygon points="261.1,193.1 249.7,191.4 237.7,199.2 250.0,200.4" fill="#ffe92f"/>
<polygon points="250.0,200.4 237.7,199.2 226.8,207.6 239.9,208.2" fill="#ffeb30"/>
<polygon points="239.9,208.2 226.8,207.6 217.0,216.5 230.9,216.5" fill="#ffed30"/>
<polygon points="230.9,216.5 217.0,216.5 208.4,225.9 223.0,225.2" fill="#ffef30"/>
<polygon points="223.0,225.2 208.4,225.9 201.2,235.7 216.4,234.3" fill="#fff031"/>
<polygon points="216.4,234.3 201.2,235.7 195.3,245.9 211.0,243.8" fill="#fff131"/>
<polygon points="211.0,243.8 195.3,245.9 190.9,256.4 207.0,253.5" fill="#fff231"/>
<polygon points="207.0,253.5 190.9,256.4 188.0,267.2 204.5,263.5" fill="#fff331"/>
<polygon points="204.5,263.5 188.0,267.2 186.7,278.1 203.4,273.6" fill="#fff331"/>
<polygon points="203.4,273.6 186.7,278.1 187.0,289.1 203.7,283.8" fill="#fff431"/>
<polygon points="203.7,283.8 187.0,289.1 188.9,300.2 205.7,294.0" fill="#fff431"/>
<polygon points="205.7,294.0 188.9,300.2 192.5,311.2 209.1,304.2" fill="#fff331"/>
<polygon points="209.1,304.2 192.5,311.2 197.9,322.1 214.2,314.2" fill="#fff331"/>
<polygon points="214.2,314.2 197.9,322.1 204.9,332.7 220.8,324.0" fill="#fff231"/>
<polygon points="220.8,324.0 204.9,332.7 213.5,343.1 228.9,333.5" fill="#fff231"/>
<polygon points="228.9,333.5 213.5,343.1 223.8,353.0 238.5,342.6" fill="#fff031"/>
<polygon points="238.5,342.6 223.8,353.0 235.7,362.4 249.6,351.2" fill="#ffef31"/>
<polygon points="235.7,362.4 223.2,373.3 237.4,382.8 249.1,371.2" fill="#fff031"/>
<polygon points="249.1,371.2 237.4,382.8 253.2,391.6 264.0,379.4" fill="#ffee30"/>
<polygon points="264.0,379.4 253.2,391.6 270.5,399.6 280.1,386.8" fill="#ffec30"/>
<polygon points="280.1,386.8 270.5,399.6 289.0,406.6 297.5,393.3" fill="#ffe92f"/>
<polygon points="297.5,393.3 289.0,406.6 308.7,412.8 315.9,399.0" fill="#ffe72f"/>
<polygon points="315.9,399.0 308.7,412.8 329.3,417.8 335.2,403.7" fill="#ffe42e"/>
<polygon points="335.2,403.7 329.3,417.8 350.8,421.8 355.2,407.4" fill="#ffe12e"/>
<polygon points="355.2,407.4 350.8,421.8 372.9,424.6 375.8,410.0" fill="#ffde2d"/>
<polygon points="375.8,410.0 372.9,424.6 395.4,426.3 396.8,411.5" fill="#fedb2c"/>
<polygon points="396.8,411.5 395.4,426.3 418.1,426.8 418.0,411.9" fill="#fbd82c"/>
<polygon points="418.0,411.9 418.1,426.8 440.8,426.0 439.1,411.3" fill="#f7d52b"/>
<polygon points="439.1,411.3 440.8,426.0 463.2,424.1 460.1,409.5" fill="#f3d22b"/>
<polygon points="460.1,409.5 463.2,424.1 485.2,421.0 480.6,406.6" fill="#efcf2a"/>
<polygon points="480.6,406.6 485.2,421.0 506.6,416.8 500.6,402.7" fill="#eccb29"/>
<polygon points="500.6,402.7 506.6,416.8 527.2,411.5 519.8,397.8" fill="#e8c829"/>
<polygon points="519.8,397.8 527.2,411.5 546.8,405.1 538.1,391.9" fill="#e4c528"/>
<polygon points="538.1,391.9 546.8,405.1 565.2,397.8 555.3,385.2" fill="#e1c227"/>
<polygon points="555.3,385.2 565.2,397.8 582.2,389.6 571.4,377.6" fill="#ddbf27"/>
<polygon points="571.4,377.6 582.2,389.6 597.9,380.7 586.0,369.3" fill="#dabc26"/>
<polygon points="586.0,369.3 597.9,380.7 612.0,371.0 599.3,360.3" fill="#d7ba26"/>
<polygon points="599.3,360.3 612.0,371.0 624.4,360.7 611.0,350.8" fill="#d4b725"/>
<polygon points="611.0,350.8 624.4,360.7 635.1,350.0 621.1,340.8" fill="#d1b525"/>
<polygon points="621.1,340.8 635.1,350.0 644.1,338.8 629.6,330.4" fill="#cfb324"/>
<polygon points="629.6,330.4 644.1,338.8 651.3,327.3 636.5,319.7" fill="#cdb124"/>
<polygon points="636.5,319.7 651.3,327.3 656.7,315.6 641.6,308.7" fill="#cbaf23"/>
<polygon points="641.6,308.7 656.7,315.6 660.2,303.8 645.1,297.7" fill="#c9ad23"/>
<polygon points="645.1,297.7 660.2,303.8 662.0,291.9 646.9,286.6" fill="#c7ac23"/>
<polygon points="646.9,286.6 662.0,291.9 662.0,280.1 647.0,275.6" fill="#c6ab23"/>
<polygon points="647.0,275.6 662.0,280.1 660.3,268.5 645.5,264.7" fill="#c5aa22"/>
<polygon points="645.5,264.7 660.3,268.5 657.0,257.1 642.5,254.0" fill="#c5aa22"/>
<polygon points="642.5,254.0 657.0,257.1 652.0,245.9 637.9,243.6" fill="#c5aa22"/>
<polygon points="637.9,243.6 652.0,245.9 645.5,235.2 631.9,233.5" fill="#c5aa22"/>
<polygon points="631.9,233.5 645.5,235.2 637.6,224.8 624.6,223.7" fill="#c5aa22"/>
<polygon points="624.6,223.7 637.6,224.8 628.3,215.0 615.9,214.5" fill="#c6ab23"/>
<polygon points="615.9,214.5 628.3,215.0 617.8,205.6 606.1,205.7" fill="#c7ac23"/>
<polygon points="606.1,205.7 617.8,205.6 606.0,196.8 595.1,197.4" fill="#c8ad23"/>
<polygon points="595.1,197.4 606.0,196.8 593.2,188.7 583.0,189.7" fill="#caae23"/>
<polygon points="583.0,189.7 593.2,188.7 579.3,181.2 570.0,182.6" fill="#ccb024"/>
<polygon points="570.0,182.6 579.3,181.2 564.6,174.3 556.1,176.2" fill="#ceb224"/>
<polygon points="556.1,176.2 564.6,174.3 549.0,168.2 541.5,170.4" fill="#d0b424"/>
<polygon points="541.5,170.4 549.0,168.2 532.7,162.8 526.2,165.3" fill="#d3b625"/>
<polygon points="526.2,165.3 532.7,162.8 515.8,158.2 510.2,160.9" fill="#d6b825"/>
<polygon points="510.2,160.9 515.8,158.2 498.4,154.3 493.8,157.2" fill="#d9bb26"/>
<polygon points="493.8,157.2 498.4,154.3 480.6,151.2 477.0,154.3" fill="#dcbe26"/>
<polygon points="477.0,154.3 480.6,151.2 462.4,148.9 459.8,152.1" fill="#dfc127"/>
<polygon points="459.8,152.1 462.4,148.9 444.0,147.4 442.5,150.6" fill="#e3c428"/>
<polygon points="442.5,150.6 444.0,147.4 425.4,146.6 424.9,150.0" fill="#e6c728"/>
<polygon points="424.9,150.0 425.4,146.6 406.8,146.7 407.4,150.1" fill="#eaca29"/>
<polygon points="407.4,150.1 406.8,146.7 388.3,147.6 389.9,150.9" fill="#eecd2a"/>
<polygon points="389.9,150.9 388.3,147.6 369.9,149.3 372.5,152.5" fill="#f1d02a"/>
<polygon points="372.5,152.5 369.9,149.3 351.7,151.8 355.4,154.9" fill="#f5d42b"/>
<polygon points="355.4,154.9 351.7,151.8 333.9,155.1 338.6,158.0" fill="#f9d72c"/>
<polygon points="338.6,158.0 333.9,155.1 316.5,159.2 322.2,161.8" fill="#fdda2c"/>
<polygon points="322.2,161.8 316.5,159.2 299.7,164.0 306.3,166.4" fill="#ffdd2d"/>
<polygon points="306.3,166.4 299.7,164.0 283.5,169.5 291.0,171.6" fill="#ffe02d"/>
<polygon points="291.0,171.6 283.5,169.5 267.9,175.8 276.4,177.6" fill="#ffe32e"/>
<polygon points="276.4,177.6 267.9,175.8 253.2,182.8 262.6,184.2" fill="#ffe62f"/>
<polygon points="262.6,184.2 253.2,182.8 239.5,190.5 249.7,191.4" fill="#ffe82f"/>
<polygon points="249.7,191.4 239.5,190.5 226.7,198.8 237.7,199.2" fill="#ffeb30"/>
<polygon points="237.7,199.2 226.7,198.8 215.0,207.7 226.8,207.6" fill="#ffed30"/>
<polygon points="226.8,207.6 215.0,207.7 204.6,217.1 217.0,216.5" fill="#ffef31"/>
<polygon points="217.0,216.5 204.6,217.1 195.4,227.1 208.4,225.9" fill="#fff131"/>
<polygon points="208.4,225.9 195.4,227.1 187.6,237.6 201.2,235.7" fill="#fff331"/>
<polygon points="201.2,235.7 187.6,237.6 181.2,248.4 195.3,245.9" fill="#fff432"/>
<polygon points="195.3,245.9 181.2,248.4 176.4,259.6 190.9,256.4" fill="#fff532"/>
<polygon points="190.9,256.4 176.4,259.6 173.2,271.1 188.0,267.2" fill="#fff632"/>
<polygon points="188.0,267.2 173.2,271.1 171.7,282.8 186.7,278.1" fill="#fff732"/>
<polygon points="186.7,278.1 171.7,282.8 171.8,294.6 187.0,289.1" fill="#fff732"/>
<polygon points="187.0,289.1 171.8,294.6 173.8,306.4 188.9,300.2" fill="#fff732"/>
<polygon points="188.9,300.2 173.8,306.4 177.5,318.2 192.5,311.2" fill="#fff732"/>
<polygon points="192.5,311.2 177.5,318.2 183.1,329.9 197.9,322.1" fill="#fff632"/>
<polygon points="197.9,322.1 183.1,329.9 190.4,341.3 204.9,332.7" fill="#fff532"/>
<polygon points="204.9,332.7 190.4,341.3 199.6,352.4 213.5,343.1" fill="#fff432"/>
<polygon points="213.5,343.1 199.6,352.4 210.5,363.1 223.8,353.0" fill="#fff331"/>
<polygon points="223.8,353.0 210.5,363.1 223.2,373.3 235.7,362.4" fill="#fff231"/>
<polygon points="223.2,373.3 211.9,383.7 227.0,393.8 237.4,382.8" fill="#fff231"/>
<polygon points="237.4,382.8 227.0,393.8 243.6,403.2 253.2,391.6" fill="#fff031"/>
<polygon points="253.2,391.6 243.6,403.2 261.8,411.7 270.5,399.6" fill="#ffed30"/>
<polygon points="270.5,399.6 261.8,411.7 281.4,419.3 289.0,406.6" fill="#ffeb30"/>
<polygon points="289.0,406.6 281.4,419.3 302.3,425.8 308.7,412.8" fill="#ffe82f"/>
<polygon points="308.7,412.8 302.3,425.8 324.1,431.2 329.3,417.8" fill="#ffe42e"/>
<polygon points="329.3,417.8 324.1,431.2 346.9,435.5 350.8,421.8" fill="#ffe12e"/>
<polygon points="350.8,421.8 346.9,435.5 370.3,438.5 372.9,424.6" fill="#ffde2d"/>
<polygon points="372.9,424.6 370.3,438.5 394.1,440.3 395.4,426.3" fill="#fdda2c"/>
<polygon points="395.4,426.3 394.1,440.3 418.2,440.8 418.1,426.8" fill="#f8d62b"/>
<polygon points="418.1,426.8 418.2,440.8 442.2,440.0 440.8,426.0" fill="#f4d32b"/>
<polygon points="440.8,426.0 442.2,440.0 466.0,438.0 463.2,424.1" fill="#f0cf2a"/>
<polygon points="463.2,424.1 466.0,438.0 489.3,434.6 485.2,421.0" fill="#ebcb29"/>
<polygon points="485.2,421.0 489.3,434.6 512.0,430.1 506.6,416.8" fill="#e7c728"/>
<polygon points="506.6,416.8 512.0,430.1 533.8,424.4 527.2,411.5" fill="#e3c428"/>
<polygon points="527.2,411.5 533.8,424.4 554.5,417.7 546.8,405.1" fill="#dec027"/>
<polygon points="546.8,405.1 554.5,417.7 573.9,409.9 565.2,397.8" fill="#dabc26"/>
<polygon points="565.2,397.8 573.9,409.9 591.9,401.2 582.2,389.6" fill="#d6b925"/>
<polygon points="582.2,389.6 591.9,401.2 608.4,391.6 597.9,380.7" fill="#d3b625"/>
<polygon points="597.9,380.7 608.4,391.6 623.3,381.3 612.0,371.0" fill="#cfb324"/>
<polygon points="612.0,371.0 623.3,381.3 636.3,370.4 624.4,360.7" fill="#cbb024"/>
<polygon points="624.4,360.7 636.3,370.4 647.6,358.9 635.1,350.0" fill="#c8ad23"/>
<polygon points="635.1,350.0 647.6,358.9 657.0,347.0 644.1,338.8" fill="#c5aa22"/>
<polygon points="644.1,338.8 657.0,347.0 664.4,334.8 651.3,327.3" fill="#c3a822"/>
<polygon points="651.3,327.3 664.4,334.8 670.0,322.4 656.7,315.6" fill="#c0a622"/>
<polygon points="656.7,315.6 670.0,322.4 673.6,309.8 660.2,303.8" fill="#bea421"/>
<polygon points="660.2,303.8 673.6,309.8 675.4,297.3 662.0,291.9" fill="#bda321"/>
<polygon points="662.0,291.9 675.4,297.3 675.3,284.8 662.0,280.1" fill="#bba221"/>
<polygon points="662.0,280.1 675.3,284.8 673.4,272.5 660.3,268.5" fill="#baa121"/>
<polygon points="660.3,268.5 673.4,272.5 669.7,260.5 657.0,257.1" fill="#baa020"/>
<polygon points="657.0,257.1 669.7,260.5 664.4,248.7 652.0,245.9" fill="#b9a020"/>
<polygon points="652.0,245.9 664.4,248.7 657.5,237.4 645.5,235.2" fill="#baa020"/>
<polygon points="645.5,235.2 657.5,237.4 649.1,226.5 637.6,224.8" fill="#baa120"/>
<polygon points="637.6,224.8 649.1,226.5 639.2,216.1 628.3,215.0" fill="#bba121"/>
<polygon points="628.3,215.0 639.2,216.1 628.0,206.2 617.8,205.6" fill="#bca221"/>
<polygon points="617.8,205.6 628.0,206.2 615.6,197.0 606.0,196.8" fill="#bea421"/>
<polygon points="606.0,196.8 615.6,197.0 602.1,188.5 593.2,188.7" fill="#bfa521"/>
<polygon points="593.2,188.7 602.1,188.5 587.5,180.6 579.3,181.2" fill="#c2a722"/>
<polygon points="579.3,181.2 587.5,180.6 571.9,173.4 564.6,174.3" fill="#c4a922"/>
<polygon points="564.6,174.3 571.9,173.4 555.5,167.0 549.0,168.2" fill="#c7ac23"/>
<polygon points="549.0,168.2 555.5,167.0 538.4,161.3 532.7,162.8" fill="#caae23"/>
<polygon points="532.7,162.8 538.4,161.3 520.7,156.4 515.8,158.2" fill="#cdb124"/>
<polygon points="515.8,158.2 520.7,156.4 502.4,152.4 498.4,154.3" fill="#d1b425"/>
<polygon points="498.4,154.3 502.4,152.4 483.7,149.1 480.6,151.2" fill="#d5b825"/>
<polygon points="480.6,151.2 483.7,149.1 464.6,146.7 462.4,148.9" fill="#d9bb26"/>
<polygon points="462.4,148.9 464.6,146.7 445.3,145.1 444.0,147.4" fill="#ddbe27"/>
<polygon points="444.0,147.4 445.3,145.1 425.9,144.4 425.4,146.6" fill="#e1c227"/>
<polygon points="425.4,146.6 425.9,144.4 406.4,144.5 406.8,146.7" fill="#e5c628"/>
<polygon points="406.8,146.7 406.4,144.5 386.9,145.4 388.3,147.6" fill="#e9ca29"/>
<polygon points="388.3,147.6 386.9,145.4 367.6,147.2 369.9,149.3" fill="#eecd2a"/>
<polygon points="369.9,149.3 367.6,147.2 348.6,149.8 351.7,151.8" fill="#f2d12a"/>
<polygon points="351.7,151.8 348.6,149.8 329.9,153.2 333.9,155.1" fill="#f7d52b"/>
<polygon points="333.9,155.1 329.9,153.2 311.6,157.5 316.5,159.2" fill="#fbd82c"/>
<polygon points="316.5,159.2 311.6,157.5 293.9,162.5 299.7,164.0" fill="#ffdc2d"/>
<polygon points="299.7,164.0 293.9,162.5 276.8,168.4 283.5,169.5" fill="#ffe02d"/>
<polygon points="283.5,169.5 276.8,168.4 260.5,175.0 267.9,175.8" fill="#ffe32e"/>
<polygon points="267.9,175.8 260.5,175.0 245.1,182.3 253.2,182.8" fill="#ffe62f"/>
<polygon points="253.2,182.8 245.1,182.3 230.5,190.3 239.5,190.5" fill="#ffe92f"/>
<polygon points="239.5,190.5 230.5,190.3 217.0,199.1 226.7,198.8" fill="#ffec30"/>
<polygon points="226.7,198.8 217.0,199.1 204.7,208.4 215.0,207.7" fill="#ffef30"/>
<polygon points="215.0,207.7 204.7,208.4 193.6,218.4 204.6,217.1" fill="#fff131"/>
<polygon points="204.6,217.1 193.6,218.4 183.9,228.9 195.4,227.1" fill="#fff331"/>
<polygon points="195.4,227.1 183.9,228.9 175.6,239.9 187.6,237.6" fill="#fff532"/>
<polygon points="187.6,237.6 175.6,239.9 168.8,251.3 181.2,248.4" fill="#fff732"/>
<polygon points="181.2,248.4 168.8,251.3 163.6,263.2 176.4,259.6" fill="#fff832"/>
<polygon points="176.4,259.6 163.6,263.2 160.1,275.3 173.2,271.1" fill="#fff933"/>
<polygon points="173.2,271.1 160.1,275.3 158.4,287.6 171.7,282.8" fill="#fffa33"/>
<polygon points="171.7,282.8 158.4,287.6 158.5,300.1 171.8,294.6" fill="#fffa33"/>
<polygon points="171.8,294.6 158.5,300.1 160.4,312.7 173.8,306.4" fill="#fffa33"/>
<polygon points="173.8,306.4 160.4,312.7 164.2,325.2 177.5,318.2" fill="#fffa33"/>
<polygon points="177.5,318.2 164.2,325.2 170.0,337.6 183.1,329.9" fill="#fff933"/>
<polygon points="183.1,329.9 170.0,337.6 177.6,349.7 190.4,341.3" fill="#fff932"/>
<polygon points="190.4,341.3 177.6,349.7 187.2,361.5 199.6,352.4" fill="#fff732"/>
<polygon points="199.6,352.4 187.2,361.5 198.7,372.9 210.5,363.1" fill="#fff632"/>
<polygon points="210.5,363.1 198.7,372.9 211.9,383.7 223.2,373.3" fill="#fff432"/>
<polygon points="211.9,383.7 202.2,393.6 217.9,404.3 227.0,393.8" fill="#fff432"/>
<polygon points="227.0,393.8 217.9,404.3 235.3,414.2 243.6,403.2" fill="#fff131"/>
<polygon points="243.6,403.2 235.3,414.2 254.3,423.2 261.8,411.7" fill="#ffee30"/>
<polygon points="261.8,411.7 254.3,423.2 274.8,431.2 281.4,419.3" fill="#ffeb30"/>
<polygon points="281.4,419.3 274.8,431.2 296.7,438.1 302.3,425.8" fill="#ffe82f"/>
<polygon points="302.3,425.8 296.7,438.1 319.6,443.8 324.1,431.2" fill="#ffe42e"/>
<polygon points="324.1,431.2 319.6,443.8 343.4,448.3 346.9,435.5" fill="#ffe02d"/>
<polygon points="346.9,435.5 343.4,448.3 368.0,451.5 370.3,438.5" fill="#ffdc2d"/>
<polygon points="370.3,438.5 368.0,451.5 393.0,453.4 394.1,440.3" fill="#fad82c"/>
<polygon points="394.1,440.3 393.0,453.4 418.3,453.9 418.2,440.8" fill="#f5d32b"/>
<polygon points="418.2,440.8 418.3,453.9 443.5,453.1 442.2,440.0" fill="#f0cf2a"/>
<polygon points="442.2,440.0 443.5,453.1 468.5,450.9 466.0,438.0" fill="#ebcb29"/>
<polygon points="466.0,438.0 468.5,450.9 492.9,447.4 489.3,434.6" fill="#e6c628"/>
<polygon points="489.3,434.6 492.9,447.4 516.7,442.6 512.0,430.1" fill="#e1c227"/>
<polygon points="512.0,430.1 516.7,442.6 539.5,436.6 533.8,424.4" fill="#dbbd26"/>
<polygon points="533.8,424.4 539.5,436.6 561.2,429.5 554.5,417.7" fill="#d7b925"/>
<polygon points="554.5,417.7 561.2,429.5 581.5,421.2 573.9,409.9" fill="#d2b525"/>
<polygon points="573.9,409.9 581.5,421.2 600.4,412.0 591.9,401.2" fill="#cdb124"/>
<polygon points="591.9,401.2 600.4,412.0 617.6,401.9 608.4,391.6" fill="#c9ad23"/>
<polygon points="608.4,391.6 617.6,401.9 633.1,391.1 623.3,381.3" fill="#c4a922"/>
<polygon points="623.3,381.3 633.1,391.1 646.7,379.5 636.3,370.4" fill="#c0a622"/>
<polygon points="636.3,370.4 646.7,379.5 658.4,367.5 647.6,358.9" fill="#bda321"/>
<polygon points="647.6,358.9 658.4,367.5 668.1,355.0 657.0,347.0" fill="#b9a020"/>
<polygon points="657.0,347.0 668.1,355.0 675.8,342.1 664.4,334.8" fill="#b69d20"/>
<polygon points="664.4,334.8 675.8,342.1 681.5,329.1 670.0,322.4" fill="#b39b1f"/>
<polygon points="670.0,322.4 681.5,329.1 685.2,315.9 673.6,309.8" fill="#b1991f"/>
<polygon points="673.6,309.8 685.2,315.9 687.0,302.7 675.4,297.3" fill="#af971e"/>
<polygon points="675.4,297.3 687.0,302.7 686.7,289.7 675.3,284.8" fill="#ad961e"/>
<polygon points="675.3,284.8 686.7,289.7 684.7,276.8 673.4,272.5" fill="#ac951e"/>
<polygon points="673.4,272.5 684.7,276.8 680.7,264.2 669.7,260.5" fill="#ab941e"/>
<polygon points="669.7,260.5 680.7,264.2 675.1,251.9 664.4,248.7" fill="#ab941e"/>
<polygon points="664.4,248.7 675.1,251.9 667.8,240.0 657.5,237.4" fill="#ab941e"/>
<polygon points="657.5,237.4 667.8,240.0 658.9,228.6 649.1,226.5" fill="#ac941e"/>
<polygon points="649.1,226.5 658.9,228.6 648.6,217.8 639.2,216.1" fill="#ad951e"/>
<polygon points="639.2,216.1 648.6,217.8 636.8,207.5 628.0,206.2" fill="#ae961e"/>
<polygon points="628.0,206.2 636.8,207.5 623.8,197.9 615.6,197.0" fill="#b0981f"/>
<polygon points="615.6,197.0 623.8,197.9 609.7,189.0 602.1,188.5" fill="#b29a1f"/>
<polygon points="602.1,188.5 609.7,189.0 594.4,180.8 587.5,180.6" fill="#b59c20"/>
<polygon points="587.5,180.6 594.4,180.8 578.2,173.3 571.9,173.4" fill="#b89f20"/>
<polygon points="571.9,173.4 578.2,173.3 561.2,166.6 555.5,167.0" fill="#bba121"/>
<polygon points="555.5,167.0 561.2,166.6 543.3,160.8 538.4,161.3" fill="#bfa521"/>
<polygon points="538.4,161.3 543.3,160.8 524.9,155.7 520.7,156.4" fill="#c2a822"/>
<polygon points="520.7,156.4 524.9,155.7 505.8,151.5 502.4,152.4" fill="#c7ab23"/>
<polygon points="502.4,152.4 505.8,151.5 486.4,148.1 483.7,149.1" fill="#cbaf23"/>
<polygon points="483.7,149.1 486.4,148.1 466.5,145.6 464.6,146.7" fill="#d0b324"/>
<polygon points="464.6,146.7 466.5,145.6 446.5,143.9 445.3,145.1" fill="#d4b725"/>
<polygon points="445.3,145.1 446.5,143.9 426.2,143.2 425.9,144.4" fill="#d9bc26"/>
<polygon points="425.9,144.4 426.2,143.2 406.0,143.3 406.4,144.5" fill="#dec027"/>
<polygon points="406.4,144.5 406.0,143.3 385.7,144.2 386.9,145.4" fill="#e3c428"/>
<polygon points="386.9,145.4 385.7,144.2 365.7,146.1 367.6,147.2" fill="#e9c929"/>
<polygon points="367.6,147.2 365.7,146.1 345.9,148.8 348.6,149.8" fill="#eecd2a"/>
<polygon points="348.6,149.8 345.9,148.8 326.4,152.3 329.9,153.2" fill="#f3d22a"/>
<polygon points="329.9,153.2 326.4,152.3 307.4,156.8 311.6,157.5" fill="#f8d62b"/>
<polygon points="311.6,157.5 307.4,156.8 289.0,162.0 293.9,162.5" fill="#fdda2c"/>
<polygon points="293.9,162.5 289.0,162.0 271.2,168.1 276.8,168.4" fill="#ffde2d"/>
<polygon points="276.8,168.4 271.2,168.1 254.2,174.9 260.5,175.0" fill="#ffe22e"/>
<polygon points="260.5,175.0 254.2,174.9 238.0,182.6 245.1,182.3" fill="#ffe62f"/>
<polygon points="245.1,182.3 238.0,182.6 222.9,191.0 230.5,190.3" fill="#ffea2f"/>
<polygon points="230.5,190.3 222.9,191.0 208.8,200.0 217.0,199.1" fill="#ffed30"/>
<polygon points="217.0,199.1 208.8,200.0 195.9,209.8 204.7,208.4" fill="#fff031"/>
<polygon points="204.7,208.4 195.9,209.8 184.3,220.2 193.6,218.4" fill="#fff331"/>
<polygon points="193.6,218.4 184.3,220.2 174.0,231.2 183.9,228.9" fill="#fff532"/>
<polygon points="183.9,228.9 174.0,231.2 165.3,242.7 175.6,239.9" fill="#fff832"/>
<polygon points="175.6,239.9 165.3,242.7 158.1,254.6 168.8,251.3" fill="#fff933"/>
<polygon points="168.8,251.3 158.1,254.6 152.6,267.0 163.6,263.2" fill="#fffb33"/>
<polygon points="163.6,263.2 152.6,267.0 148.9,279.7 160.1,275.3" fill="#fffc33"/>
<polygon points="160.1,275.3 148.9,279.7 146.9,292.6 158.4,287.6" fill="#fffd33"/>
<polygon points="158.4,287.6 146.9,292.6 146.9,305.7 158.5,300.1" fill="#fffd33"/>
<polygon points="158.5,300.1 146.9,305.7 148.8,318.9 160.4,312.7" fill="#fffd33"/>
<polygon points="160.4,312.7 148.8,318.9 152.7,332.0 164.2,325.2" fill="#fffd33"/>
<polygon points="164.2,325.2 152.7,332.0 158.6,345.0 170.0,337.6" fill="#fffd33"/>
<polygon points="170.0,337.6 158.6,345.0 166.6,357.8 177.6,349.7" fill="#fffc33"/>
<polygon points="177.6,349.7 166.6,357.8 176.5,370.2 187.2,361.5" fill="#fffa33"/>
<polygon points="187.2,361.5 176.5,370.2 188.4,382.2 198.7,372.9" fill="#fff832"/>
<polygon points="198.7,372.9 188.4,382.2 202.2,393.6 211.9,383.7" fill="#fff632"/>
<polygon points="202.2,393.6 194.1,402.9 210.3,414.1 217.9,404.3" fill="#fff532"/>
<polygon points="217.9,404.3 210.3,414.1 228.3,424.4 235.3,414.2" fill="#fff231"/>
<polygon points="235.3,414.2 228.3,424.4 248.1,433.8 254.3,423.2" fill="#ffee30"/>
<polygon points="254.3,423.2 248.1,433.8 269.3,442.2 274.8,431.2" fill="#ffea30"/>
<polygon points="274.8,431.2 269.3,442.2 292.0,449.4 296.7,438.1" fill="#ffe62f"/>
<polygon points="296.7,438.1 292.0,449.4 315.8,455.4 319.6,443.8" fill="#ffe22e"/>
<polygon points="319.6,443.8 315.8,455.4 340.6,460.1 343.4,448.3" fill="#ffdd2d"/>
<polygon points="343.4,448.3 340.6,460.1 366.1,463.5 368.0,451.5" fill="#fbd92c"/>
<polygon points="368.0,451.5 366.1,463.5 392.1,465.4 393.0,453.4" fill="#f5d42b"/>
<polygon points="393.0,453.4 392.1,465.4 418.3,466.0 418.3,453.9" fill="#efcf2a"/>
<polygon points="418.3,453.9 418.3,466.0 444.6,465.1 443.5,453.1" fill="#e9c929"/>
<polygon points="443.5,453.1 444.6,465.1 470.5,462.8 468.5,450.9" fill="#e3c428"/>
<polygon points="468.5,450.9 470.5,462.8 496.0,459.2 492.9,447.4" fill="#ddbf27"/>
<polygon points="492.9,447.4 496.0,459.2 520.6,454.2 516.7,442.6" fill="#d7ba26"/>
<polygon points="516.7,442.6 520.6,454.2 544.3,447.9 539.5,436.6" fill="#d1b525"/>
<polygon points="539.5,436.6 544.3,447.9 566.8,440.4 561.2,429.5" fill="#cbb024"/>
<polygon points="561.2,429.5 566.8,440.4 587.9,431.8 581.5,421.2" fill="#c6ab23"/>
<polygon points="581.5,421.2 587.9,431.8 607.5,422.1 600.4,412.0" fill="#c0a622"/>
<polygon points="600.4,412.0 607.5,422.1 625.3,411.6 617.6,401.9" fill="#bba121"/>
<polygon points="617.6,401.9 625.3,411.6 641.3,400.2 633.1,391.1" fill="#b69d20"/>
<polygon points="633.1,391.1 641.3,400.2 655.4,388.2 646.7,379.5" fill="#b1991f"/>
<polygon points="646.7,379.5 655.4,388.2 667.4,375.6 658.4,367.5" fill="#ad951e"/>
<polygon points="658.4,367.5 667.4,375.6 677.4,362.6 668.1,355.0" fill="#a9921d"/>
<polygon points="668.1,355.0 677.4,362.6 685.3,349.2 675.8,342.1" fill="#a58e1d"/>
<polygon points="675.8,342.1 685.3,349.2 691.2,335.6 681.5,329.1" fill="#a28c1c"/>
<polygon points="681.5,329.1 691.2,335.6 694.9,321.9 685.2,315.9" fill="#9f891c"/>
<polygon points="685.2,315.9 694.9,321.9 696.6,308.2 687.0,302.7" fill="#9d871b"/>
<polygon points="687.0,302.7 696.6,308.2 696.3,294.6 686.7,289.7" fill="#9b861b"/>
<polygon points="686.7,289.7 696.3,294.6 694.0,281.2 684.7,276.8" fill="#99841b"/>
<polygon points="684.7,276.8 694.0,281.2 689.9,268.1 680.7,264.2" fill="#99841b"/>
<polygon points="680.7,264.2 689.9,268.1 684.0,255.4 675.1,251.9" fill="#98831a"/>
<polygon points="675.1,251.9 684.0,255.4 676.3,243.1 667.8,240.0" fill="#98831b"/>
<polygon points="667.8,240.0 676.3,243.1 667.1,231.3 658.9,228.6" fill="#99841b"/>
<polygon points="658.9,228.6 667.1,231.3 656.3,220.1 648.6,217.8" fill="#9a851b"/>
<polygon points="648.6,217.8 656.3,220.1 644.2,209.5 636.8,207.5" fill="#9c861b"/>
<polygon points="636.8,207.5 644.2,209.5 630.7,199.5 623.8,197.9" fill="#9e881b"/>
<polygon points="623.8,197.9 630.7,199.5 616.0,190.3 609.7,189.0" fill="#a18b1c"/>
<polygon points="609.7,189.0 616.0,190.3 600.2,181.8 594.4,180.8" fill="#a48d1c"/>
<polygon points="594.4,180.8 600.2,181.8 583.5,174.1 578.2,173.3" fill="#a7901d"/>
<polygon points="578.2,173.3 583.5,174.1 565.8,167.2 561.2,166.6" fill="#ab941e"/>
<polygon points="561.2,166.6 565.8,167.2 547.4,161.1 543.3,160.8" fill="#af971f"/>
<polygon points="543.3,160.8 547.4,161.1 528.3,155.9 524.9,155.7" fill="#b49b1f"/>
<polygon points="524.9,155.7 528.3,155.9 508.7,151.5 505.8,151.5" fill="#b99f20"/>
<polygon points="505.8,151.5 508.7,151.5 488.6,148.1 486.4,148.1" fill="#bea421"/>
<polygon points="486.4,148.1 488.6,148.1 468.1,145.5 466.5,145.6" fill="#c3a922"/>
<polygon points="466.5,145.6 468.1,145.5 447.4,143.8 446.5,143.9" fill="#c9ad23"/>
<polygon points="446.5,143.9 447.4,143.8 426.5,143.0 426.2,143.2" fill="#cfb224"/>
<polygon points="426.2,143.2 426.5,143.0 405.6,143.1 406.0,143.3" fill="#d5b825"/>
<polygon points="406.0,143.3 405.6,143.1 384.8,144.1 385.7,144.2" fill="#dbbd26"/>
<polygon points="385.7,144.2 384.8,144.1 364.1,146.0 365.7,146.1" fill="#e1c227"/>
<polygon points="365.7,146.1 364.1,146.0 343.6,148.8 345.9,148.8" fill="#e7c728"/>
<polygon points="345.9,148.8 343.6,148.8 323.6,152.5 326.4,152.3" fill="#edcc29"/>
<polygon points="326.4,152.3 323.6,152.5 303.9,157.0 307.4,156.8" fill="#f3d22a"/>
<polygon points="307.4,156.8 303.9,157.0 284.9,162.4 289.0,162.0" fill="#f9d72c"/>
<polygon points="289.0,162.0 284.9,162.4 266.5,168.7 271.2,168.1" fill="#fedb2c"/>
<polygon points="271.2,168.1 266.5,168.7 248.9,175.8 254.2,174.9" fill="#ffe02d"/>
<polygon points="254.2,174.9 248.9,175.8 232.2,183.7 238.0,182.6" fill="#ffe52e"/>
<polygon points="238.0,182.6 232.2,183.7 216.5,192.3 222.9,191.0" fill="#ffe92f"/>
<polygon points="222.9,191.0 216.5,192.3 201.9,201.7 208.8,200.0" fill="#ffed30"/>
<polygon points="208.8,200.0 201.9,201.7 188.6,211.8 195.9,209.8" fill="#fff031"/>
<polygon points="195.9,209.8 188.6,211.8 176.5,222.6 184.3,220.2" fill="#fff431"/>
<polygon points="184.3,220.2 176.5,222.6 165.8,233.9 174.0,231.2" fill="#fff732"/>
<polygon points="174.0,231.2 165.8,233.9 156.7,245.8 165.3,242.7" fill="#fff933"/>
<polygon points="165.3,242.7 156.7,245.8 149.2,258.2 158.1,254.6" fill="#fffb33"/>
<polygon points="158.1,254.6 149.2,258.2 143.4,271.1 152.6,267.0" fill="#fffd33"/>
<polygon points="152.6,267.0 143.4,271.1 139.5,284.3 148.9,279.7" fill="#ffff34"/>
<polygon points="148.9,279.7 139.5,284.3 137.4,297.7 146.9,292.6" fill="#ffff34"/>
<polygon points="146.9,292.6 137.4,297.7 137.3,311.3 146.9,305.7" fill="#ffff34"/>
<polygon points="146.9,305.7 137.3,311.3 139.2,325.0 148.8,318.9" fill="#ffff34"/>
<polygon points="148.8,318.9 139.2,325.0 143.1,338.7 152.7,332.0" fill="#ffff34"/>
<polygon points="152.7,332.0 143.1,338.7 149.2,352.2 158.6,345.0" fill="#ffff34"/>
<polygon points="158.6,345.0 149.2,352.2 157.3,365.6 166.6,357.8" fill="#fffe34"/>
<polygon points="166.6,357.8 157.3,365.6 167.5,378.5 176.5,370.2" fill="#fffc33"/>
<polygon points="176.5,370.2 167.5,378.5 179.8,391.0 188.4,382.2" fill="#fffa33"/>
<polygon points="188.4,382.2 179.8,391.0 194.1,402.9 202.2,393.6" fill="#fff832"/>
<polygon points="194.1,402.9 187.6,411.5 204.2,423.0 210.3,414.1" fill="#fff432"/>
<polygon points="210.3,414.1 204.2,423.0 222.8,433.8 228.3,424.4" fill="#fff031"/>
<polygon points="228.3,424.4 222.8,433.8 243.0,443.5 248.1,433.8" fill="#ffec30"/>
<polygon points="248.1,433.8 243.0,443.5 264.9,452.2 269.3,442.2" fill="#ffe82f"/>
<polygon points="269.3,442.2 264.9,452.2 288.2,459.7 292.0,449.4" fill="#ffe32e"/>
<polygon points="292.0,449.4 288.2,459.7 312.8,465.9 315.8,455.4" fill="#ffde2d"/>
<polygon points="315.8,455.4 312.8,465.9 338.3,470.8 340.6,460.1" fill="#fad82c"/>
<polygon points="340.6,460.1 338.3,470.8 364.6,474.3 366.1,463.5" fill="#f4d22b"/>
<polygon points="366.1,463.5 364.6,474.3 391.4,476.3 392.1,465.4" fill="#edcd29"/>
<polygon points="392.1,465.4 391.4,476.3 418.4,476.9 418.3,466.0" fill="#e6c628"/>
<polygon points="418.3,466.0 418.4,476.9 445.4,476.0 444.6,465.1" fill="#dfc027"/>
<polygon points="444.6,465.1 445.4,476.0 472.2,473.6 470.5,462.8" fill="#d8ba26"/>
<polygon points="470.5,462.8 472.2,473.6 498.4,469.8 496.0,459.2" fill="#d0b424"/>
<polygon points="496.0,459.2 498.4,469.8 523.8,464.6 520.6,454.2" fill="#c9ae23"/>
<polygon points="520.6,454.2 523.8,464.6 548.2,458.1 544.3,447.9" fill="#c2a822"/>
<polygon points="544.3,447.9 548.2,458.1 571.3,450.3 566.8,440.4" fill="#bba221"/>
<polygon points="566.8,440.4 571.3,450.3 593.0,441.4 587.9,431.8" fill="#b49c1f"/>
<polygon points="587.9,431.8 593.0,441.4 613.1,431.4 607.5,422.1" fill="#ae961e"/>
<polygon points="607.5,422.1 613.1,431.4 631.4,420.5 625.3,411.6" fill="#a8911d"/>
<polygon points="625.3,411.6 631.4,420.5 647.9,408.8 641.3,400.2" fill="#a28b1c"/>
<polygon points="641.3,400.2 647.9,408.8 662.3,396.3 655.4,388.2" fill="#9c871b"/>
<polygon points="655.4,388.2 662.3,396.3 674.6,383.3 667.4,375.6" fill="#97821a"/>
<polygon points="667.4,375.6 674.6,383.3 684.8,369.8 677.4,362.6" fill="#927e19"/>
<polygon points="677.4,362.6 684.8,369.8 692.9,356.0 685.3,349.2" fill="#8e7a19"/>
<polygon points="685.3,349.2 692.9,356.0 698.8,341.9 691.2,335.6" fill="#8a7718"/>
<polygon points="691.2,335.6 698.8,341.9 702.6,327.8 694.9,321.9" fill="#867417"/>
<polygon points="694.9,321.9 702.6,327.8 704.3,313.7 696.6,308.2" fill="#847217"/>
<polygon points="696.6,308.2 704.3,313.7 703.9,299.7 696.3,294.6" fill="#817016"/>
<polygon points="696.3,294.6 703.9,299.7 701.5,285.9 694.0,281.2" fill="#806e16"/>
<polygon points="694.0,281.2 701.5,285.9 697.2,272.4 689.9,268.1" fill="#7f6d16"/>
<polygon points="689.9,268.1 697.2,272.4 691.0,259.3 684.0,255.4" fill="#7e6d16"/>
<polygon points="684.0,255.4 691.0,259.3 683.1,246.6 676.3,243.1" fill="#7f6d16"/>
<polygon points="676.3,243.1 683.1,246.6 673.6,234.5 667.1,231.3" fill="#7f6e16"/>
<polygon points="667.1,231.3 673.6,234.5 662.5,222.9 656.3,220.1" fill="#816f16"/>
<polygon points="656.3,220.1 662.5,222.9 649.9,212.0 644.2,209.5" fill="#837117"/>
<polygon points="644.2,209.5 649.9,212.0 636.1,201.8 630.7,199.5" fill="#857317"/>
<polygon points="630.7,199.5 636.1,201.8 621.0,192.3 616.0,190.3" fill="#887618"/>
<polygon points="616.0,190.3 621.0,192.3 604.8,183.6 600.2,181.8" fill="#8c7918"/>
<polygon points="600.2,181.8 604.8,183.6 587.6,175.7 583.5,174.1" fill="#907c19"/>
<polygon points="266.5,168.7 262.9,170.2 244.8,177.4 248.9,175.8" fill="#fedb2c"/>
<polygon points="248.9,175.8 244.8,177.4 227.7,185.5 232.2,183.7" fill="#ffe12e"/>
<polygon points="232.2,183.7 227.7,185.5 211.5,194.4 216.5,192.3" fill="#ffe62f"/>
<polygon points="216.5,192.3 211.5,194.4 196.5,204.1 201.9,201.7" fill="#ffea30"/>
<polygon points="201.9,201.7 196.5,204.1 182.8,214.4 188.6,211.8" fill="#ffef30"/>
<polygon points="188.6,211.8 182.8,214.4 170.3,225.5 176.5,222.6" fill="#fff331"/>
<polygon points="176.5,222.6 170.3,225.5 159.4,237.2 165.8,233.9" fill="#fff632"/>
<polygon points="165.8,233.9 159.4,237.2 149.9,249.4 156.7,245.8" fill="#fff933"/>
<polygon points="156.7,245.8 149.9,249.4 142.2,262.2 149.2,258.2" fill="#fffc33"/>
<polygon points="149.2,258.2 142.2,262.2 136.2,275.4 143.4,271.1" fill="#fffe34"/>
<polygon points="143.4,271.1 136.2,275.4 132.0,289.0 139.5,284.3" fill="#ffff34"/>
<polygon points="139.5,284.3 132.0,289.0 129.8,302.8 137.4,297.7" fill="#ffff34"/>
<polygon points="137.4,297.7 129.8,302.8 129.6,316.9 137.3,311.3" fill="#ffff34"/>
<polygon points="137.3,311.3 129.6,316.9 131.5,331.0 139.2,325.0" fill="#ffff34"/>
<polygon points="139.2,325.0 131.5,331.0 135.5,345.1 143.1,338.7" fill="#ffff34"/>
<polygon points="143.1,338.7 135.5,345.1 141.6,359.1 149.2,352.2" fill="#ffff34"/>
<polygon points="149.2,352.2 141.6,359.1 149.9,372.9 157.3,365.6" fill="#ffff34"/>
<polygon points="157.3,365.6 149.9,372.9 160.4,386.3 167.5,378.5" fill="#fffd33"/>
<polygon points="167.5,378.5 160.4,386.3 173.0,399.2 179.8,391.0" fill="#fffa33"/>
<polygon points="179.8,391.0 173.0,399.2 187.6,411.5 194.1,402.9" fill="#fff732"/>
<polygon points="187.6,411.5 182.8,419.3 199.8,431.2 204.2,423.0" fill="#ffef31"/>
<polygon points="204.2,423.0 199.8,431.2 218.7,442.2 222.8,433.8" fill="#ffea30"/>
<polygon points="222.8,433.8 218.7,442.2 239.4,452.2 243.0,443.5" fill="#ffe62f"/>
<polygon points="243.0,443.5 239.4,452.2 261.7,461.1 264.9,452.2" fill="#ffe02d"/>
<polygon points="264.9,452.2 261.7,461.1 285.5,468.8 288.2,459.7" fill="#fdda2c"/>
<polygon points="288.2,459.7 285.5,468.8 310.5,475.2 312.8,465.9" fill="#f6d42b"/>
<polygon points="312.8,465.9 310.5,475.2 336.6,480.2 338.3,470.8" fill="#eece2a"/>
<polygon points="338.3,470.8 336.6,480.2 363.4,483.8 364.6,474.3" fill="#e6c728"/>
<polygon points="364.6,474.3 363.4,483.8 390.8,485.9 391.4,476.3" fill="#dec027"/>
<polygon points="391.4,476.3 390.8,485.9 418.5,486.5 418.4,476.9" fill="#d6b925"/>
<polygon points="418.4,476.9 418.5,486.5 446.1,485.5 445.4,476.0" fill="#cdb124"/>
<polygon points="445.4,476.0 446.1,485.5 473.4,483.1 472.2,473.6" fill="#c5aa22"/>
<polygon points="472.2,473.6 473.4,483.1 500.2,479.2 498.4,469.8" fill="#bca221"/>
<polygon points="498.4,469.8 500.2,479.2 526.1,473.9 523.8,464.6" fill="#b49b1f"/>
<polygon points="523.8,464.6 526.1,473.9 551.0,467.2 548.2,458.1" fill="#ab941e"/>
<polygon points="548.2,458.1 551.0,467.2 574.7,459.2 571.3,450.3" fill="#a38d1c"/>
<polygon points="571.3,450.3 574.7,459.2 596.8,450.0 593.0,441.4" fill="#9b861b"/>
<polygon points="593.0,441.4 596.8,450.0 617.3,439.8 613.1,431.4" fill="#937f1a"/>
<polygon points="613.1,431.4 617.3,439.8 636.0,428.6 631.4,420.5" fill="#8b7818"/>
<polygon points="631.4,420.5 636.0,428.6 652.7,416.5 647.9,408.8" fill="#847217"/>
<polygon points="647.9,408.8 652.7,416.5 667.4,403.7 662.3,396.3" fill="#7e6c16"/>
<polygon points="662.3,396.3 667.4,403.7 679.9,390.4 674.6,383.3" fill="#776715"/>
<polygon points="674.6,383.3 679.9,390.4 690.3,376.6 684.8,369.8" fill="#726214"/>
<polygon points="684.8,369.8 690.3,376.6 698.5,362.4 692.9,356.0" fill="#6c5e13"/>
<polygon points="692.9,356.0 698.5,362.4 704.5,348.0 698.8,341.9" fill="#685a12"/>
<polygon points="698.8,341.9 704.5,348.0 708.3,333.5 702.6,327.8" fill="#645611"/>
<polygon points="702.6,327.8 708.3,333.5 709.9,319.1 704.3,313.7" fill="#615311"/>
<polygon points="704.3,313.7 709.9,319.1 709.5,304.8 703.9,299.7" fill="#5e5110"/>
<polygon points="703.9,299.7 709.5,304.8 707.0,290.6 701.5,285.9" fill="#5c4f10"/>
<polygon points="701.5,285.9 707.0,290.6 702.5,276.8 697.2,272.4" fill="#5b4e10"/>
<polygon points="697.2,272.4 702.5,276.8 696.2,263.4 691.0,259.3" fill="#5a4e10"/>
<polygon points="691.0,259.3 696.2,263.4 688.1,250.5 683.1,246.6" fill="#5a4e10"/>
<polygon points="683.1,246.6 688.1,250.5 678.3,238.1 673.6,234.5" fill="#5b4f10"/>
<polygon points="673.6,234.5 678.3,238.1 667.0,226.3 662.5,222.9" fill="#5d5010"/>
<polygon points="662.5,222.9 667.0,226.3 654.2,215.2 649.9,212.0" fill="#5f5210"/>
<polygon points="182.8,214.4 178.5,217.7 165.8,228.9 170.3,225.5" fill="#ffed30"/>
<polygon points="170.3,225.5 165.8,228.9 154.6,240.9 159.4,237.2" fill="#fff131"/>
<polygon points="159.4,237.2 154.6,240.9 145.0,253.4 149.9,249.4" fill="#fff532"/>
<polygon points="149.9,249.4 145.0,253.4 137.0,266.4 142.2,262.2" fill="#fff832"/>
<polygon points="142.2,262.2 137.0,266.4 130.9,279.9 136.2,275.4" fill="#fffb33"/>
<polygon points="136.2,275.4 130.9,279.9 126.6,293.8 132.0,289.0" fill="#fffd33"/>
<polygon points="132.0,289.0 126.6,293.8 124.3,308.0 129.8,302.8" fill="#fffe34"/>
<polygon points="129.8,302.8 124.3,308.0 124.0,322.4 129.6,316.9" fill="#ffff34"/>
<polygon points="129.6,316.9 124.0,322.4 125.9,336.8 131.5,331.0" fill="#ffff34"/>
<polygon points="131.5,331.0 125.9,336.8 129.9,351.3 135.5,345.1" fill="#fffe34"/>
<polygon points="135.5,345.1 129.9,351.3 136.1,365.6 141.6,359.1" fill="#fffd33"/>
<polygon points="141.6,359.1 136.1,365.6 144.5,379.7 149.9,372.9" fill="#fffc33"/>
<polygon points="149.9,372.9 144.5,379.7 155.1,393.4 160.4,386.3" fill="#fff933"/>
<polygon points="160.4,386.3 155.1,393.4 167.9,406.7 173.0,399.2" fill="#fff632"/>
<polygon points="173.0,399.2 167.9,406.7 182.8,419.3 187.6,411.5" fill="#fff331"/>
<polygon points="182.8,419.3 179.8,426.3 197.0,438.4 199.8,431.2" fill="#ffe12e"/>
<polygon points="199.8,431.2 197.0,438.4 216.1,449.6 218.7,442.2" fill="#ffdc2d"/>
<polygon points="218.7,442.2 216.1,449.6 237.0,459.8 239.4,452.2" fill="#f8d62b"/>
<polygon points="239.4,452.2 237.0,459.8 259.6,468.8 261.7,461.1" fill="#f0cf2a"/>
<polygon points="261.7,461.1 259.6,468.8 283.7,476.7 285.5,468.8" fill="#e8c929"/>
<polygon points="285.5,468.8 283.7,476.7 309.1,483.2 310.5,475.2" fill="#e0c127"/>
<polygon points="310.5,475.2 309.1,483.2 335.5,488.3 336.6,480.2" fill="#d7b926"/>
<polygon points="336.6,480.2 335.5,488.3 362.7,492.0 363.4,483.8" fill="#ceb124"/>
<polygon points="363.4,483.8 362.7,492.0 390.5,494.1 390.8,485.9" fill="#c4a922"/>
<polygon points="390.8,485.9 390.5,494.1 418.5,494.7 418.5,486.5" fill="#baa120"/>
<polygon points="418.5,486.5 418.5,494.7 446.5,493.7 446.1,485.5" fill="#b0981f"/>
<polygon points="446.1,485.5 446.5,493.7 474.2,491.3 473.4,483.1" fill="#a68f1d"/>
<polygon points="473.4,483.1 474.2,491.3 501.3,487.3 500.2,479.2" fill="#9c861b"/>
<polygon points="500.2,479.2 501.3,487.3 527.6,481.8 526.1,473.9" fill="#927e19"/>
<polygon points="526.1,473.9 527.6,481.8 552.9,475.0 551.0,467.2" fill="#887518"/>
<polygon points="551.0,467.2 552.9,475.0 576.8,466.9 574.7,459.2" fill="#7e6d16"/>
<polygon points="574.7,459.2 576.8,466.9 599.2,457.6 596.8,450.0" fill="#746414"/>
<polygon points="596.8,450.0 599.2,457.6 620.0,447.1 617.3,439.8" fill="#6b5c12"/>
<polygon points="617.3,439.8 620.0,447.1 638.9,435.7 636.0,428.6" fill="#625511"/>
<polygon points="636.0,428.6 638.9,435.7 655.8,423.5 652.7,416.5" fill="#5a4d0f"/>
<polygon points="652.7,416.5 655.8,423.5 670.6,410.5 667.4,403.7" fill="#52460e"/>
<polygon points="667.4,403.7 670.6,410.5 683.3,396.9 679.9,390.4" fill="#4a400d"/>
<polygon points="679.9,390.4 683.3,396.9 693.8,382.8 690.3,376.6" fill="#433a0c"/>
<polygon points="690.3,376.6 693.8,382.8 702.0,368.4 698.5,362.4" fill="#3d350a"/>
<polygon points="698.5,362.4 702.0,368.4 708.1,353.8 704.5,348.0" fill="#383009"/>
<polygon points="704.5,348.0 708.1,353.8 711.9,339.1 708.3,333.5" fill="#332c09"/>
<polygon points="708.3,333.5 711.9,339.1 713.5,324.4 709.9,319.1" fill="#332c09"/>
<polygon points="709.9,319.1 713.5,324.4 713.0,309.8 709.5,304.8" fill="#362f09"/>
<polygon points="709.5,304.8 713.0,309.8 710.4,295.5 707.0,290.6" fill="#39310a"/>
<polygon points="707.0,290.6 710.4,295.5 705.9,281.5 702.5,276.8" fill="#3a320a"/>
<polygon points="702.5,276.8 705.9,281.5 699.5,267.9 696.2,263.4" fill="#3b330a"/>
<polygon points="696.2,263.4 699.5,267.9 691.3,254.8 688.1,250.5" fill="#3b320a"/>
<polygon points="145.0,253.4 141.9,257.7 133.8,270.9 137.0,266.4" fill="#ffec30"/>
<polygon points="137.0,266.4 133.8,270.9 127.5,284.6 130.9,279.9" fill="#ffef31"/>
<polygon points="130.9,279.9 127.5,284.6 123.2,298.7 126.6,293.8" fill="#fff131"/>
<polygon points="126.6,293.8 123.2,298.7 120.8,313.1 124.3,308.0" fill="#fff331"/>
<polygon points="124.3,308.0 120.8,313.1 120.5,327.7 124.0,322.4" fill="#fff431"/>
<polygon points="124.0,322.4 120.5,327.7 122.3,342.4 125.9,336.8" fill="#fff432"/>
<polygon points="125.9,336.8 122.3,342.4 126.4,357.1 129.9,351.3" fill="#fff331"/>
<polygon points="129.9,351.3 126.4,357.1 132.6,371.7 136.1,365.6" fill="#fff231"/>
<polygon points="136.1,365.6 132.6,371.7 141.1,386.0 144.5,379.7" fill="#fff031"/>
<polygon points="144.5,379.7 141.1,386.0 151.8,400.0 155.1,393.4" fill="#ffed30"/>
<polygon points="155.1,393.4 151.8,400.0 164.7,413.5 167.9,406.7" fill="#ffea2f"/>
<polygon points="167.9,406.7 164.7,413.5 179.8,426.3 182.8,419.3" fill="#ffe62f"/>
<polygon points="179.8,426.3 178.6,432.4 195.8,444.6 197.0,438.4" fill="#e2c328"/>
<polygon points="197.0,438.4 195.8,444.6 215.0,455.9 216.1,449.6" fill="#dbbd26"/>
<polygon points="216.1,449.6 215.0,455.9 236.1,466.2 237.0,459.8" fill="#d3b625"/>
<polygon points="237.0,459.8 236.1,466.2 258.8,475.3 259.6,468.8" fill="#cbaf23"/>
<polygon points="259.6,468.8 258.8,475.3 283.0,483.3 283.7,476.7" fill="#c2a722"/>
<polygon points="283.7,476.7 283.0,483.3 308.5,489.8 309.1,483.2" fill="#b89f20"/>
<polygon points="309.1,483.2 308.5,489.8 335.1,495.0 335.5,488.3" fill="#ae961e"/>
<polygon points="335.5,488.3 335.1,495.0 362.5,498.7 362.7,492.0" fill="#a38d1c"/>
<polygon points="362.7,492.0 362.5,498.7 390.4,500.8 390.5,494.1" fill="#98841b"/>
<polygon points="390.5,494.1 390.4,500.8 418.5,501.4 418.5,494.7" fill="#8d7a19"/>
<polygon points="418.5,494.7 418.5,501.4 446.7,500.5 446.5,493.7" fill="#827017"/>
<polygon points="446.5,493.7 446.7,500.5 474.5,498.0 474.2,491.3" fill="#766614"/>
<polygon points="474.2,491.3 474.5,498.0 501.8,494.0 501.3,487.3" fill="#6b5c12"/>
<polygon points="501.3,487.3 501.8,494.0 528.3,488.5 527.6,481.8" fill="#5f5210"/>
<polygon points="527.6,481.8 528.3,488.5 553.6,481.6 552.9,475.0" fill="#54480e"/>
<polygon points="552.9,475.0 553.6,481.6 577.7,473.4 576.8,466.9" fill="#483e0c"/>
<polygon points="576.8,466.9 577.7,473.4 600.3,463.9 599.2,457.6" fill="#3d350a"/>
<polygon points="599.2,457.6 600.3,463.9 621.1,453.4 620.0,447.1" fill="#332c09"/>
<polygon points="620.0,447.1 621.1,453.4 640.1,441.9 638.9,435.7" fill="#3a320a"/>
<polygon points="638.9,435.7 640.1,441.9 657.1,429.5 655.8,423.5" fill="#443a0c"/>
<polygon points="655.8,423.5 657.1,429.5 672.0,416.4 670.6,410.5" fill="#4d420d"/>
<polygon points="670.6,410.5 672.0,416.4 684.7,402.7 683.3,396.9" fill="#55490f"/>
<polygon points="683.3,396.9 684.7,402.7 695.3,388.5 693.8,382.8" fill="#5d5010"/>
<polygon points="693.8,382.8 695.3,388.5 703.5,374.0 702.0,368.4" fill="#645611"/>
<polygon points="702.0,368.4 703.5,374.0 709.6,359.2 708.1,353.8" fill="#6a5c12"/>
<polygon points="708.1,353.8 709.6,359.2 713.4,344.4 711.9,339.1" fill="#6f6013"/>
<polygon points="711.9,339.1 713.4,344.4 715.0,329.6 713.5,324.4" fill="#746414"/>
<polygon points="713.5,324.4 715.0,329.6 714.5,314.9 713.0,309.8" fill="#776715"/>
<polygon points="713.0,309.8 714.5,314.9 711.9,300.4 710.4,295.5" fill="#7a6915"/>
<polygon points="123.2,298.7 121.7,303.7 119.3,318.2 120.8,313.1" fill="#fad82c"/>
<polygon points="120.8,313.1 119.3,318.2 119.0,332.9 120.5,327.7" fill="#fbd92c"/>
<polygon points="120.5,327.7 119.0,332.9 120.9,347.8 122.3,342.4" fill="#fbd92c"/>
<polygon points="122.3,342.4 120.9,347.8 124.9,362.6 126.4,357.1" fill="#fad82c"/>
<polygon points="126.4,357.1 124.9,362.6 131.2,377.3 132.6,371.7" fill="#f9d72c"/>
<polygon points="132.6,371.7 131.2,377.3 139.7,391.7 141.1,386.0" fill="#f6d42b"/>
<polygon points="141.1,386.0 139.7,391.7 150.4,405.8 151.8,400.0" fill="#f2d12a"/>
<polygon points="151.8,400.0 150.4,405.8 163.4,419.4 164.7,413.5" fill="#eecd2a"/>
<polygon points="164.7,413.5 163.4,419.4 178.6,432.4 179.8,426.3" fill="#e9c929"/>
<polygon points="178.6,432.4 178.8,435.0 196.0,447.2 195.8,444.6" fill="#a9921d"/>
<polygon points="195.8,444.6 196.0,447.2 215.2,458.5 215.0,455.9" fill="#a18b1c"/>
<polygon points="215.0,455.9 215.2,458.5 236.3,468.8 236.1,466.2" fill="#99841b"/>
<polygon points="236.1,466.2 236.3,468.8 259.0,477.9 258.8,475.3" fill="#907d19"/>
<polygon points="258.8,475.3 259.0,477.9 283.2,485.9 283.0,483.3" fill="#877417"/>
<polygon points="283.0,483.3 283.2,485.9 308.7,492.4 308.5,489.8" fill="#7d6b16"/>
<polygon points="308.5,489.8 308.7,492.4 335.2,497.6 335.1,495.0" fill="#726214"/>
<polygon points="335.1,495.0 335.2,497.6 362.5,501.3 362.5,498.7" fill="#675912"/>
<polygon points="362.5,498.7 362.5,501.3 390.4,503.5 390.4,500.8" fill="#5b4f10"/>
<polygon points="390.4,500.8 390.4,503.5 418.6,504.1 418.5,501.4" fill="#4f440e"/>
<polygon points="418.5,501.4 418.6,504.1 446.7,503.1 446.7,500.5" fill="#433a0b"/>
<polygon points="446.7,500.5 446.7,503.1 474.5,500.6 474.5,498.0" fill="#372f09"/>
<polygon points="474.5,498.0 474.5,500.6 501.7,496.6 501.8,494.0" fill="#383009"/>
<polygon points="501.8,494.0 501.7,496.6 528.2,491.1 528.3,488.5" fill="#443b0c"/>
<polygon points="528.3,488.5 528.2,491.1 553.5,484.2 553.6,481.6" fill="#50450e"/>
<polygon points="553.6,481.6 553.5,484.2 577.5,476.0 577.7,473.4" fill="#5c4f10"/>
<polygon points="577.7,473.4 577.5,476.0 600.1,466.5 600.3,463.9" fill="#675912"/>
<polygon points="600.3,463.9 600.1,466.5 620.9,456.0 621.1,453.4" fill="#736314"/>
<polygon points="621.1,453.4 620.9,456.0 639.9,444.5 640.1,441.9" fill="#7d6c16"/>
<polygon points="640.1,441.9 639.9,444.5 656.9,432.1 657.1,429.5" fill="#877518"/>
<polygon points="657.1,429.5 656.9,432.1 671.7,419.0 672.0,416.4" fill="#917d19"/>
<polygon points="672.0,416.4 671.7,419.0 684.5,405.2 684.7,402.7" fill="#9a851b"/>
<polygon points="684.7,402.7 684.5,405.2 695.0,391.1 695.3,388.5" fill="#a28c1c"/>
<polygon points="695.3,388.5 695.0,391.1 703.3,376.5 703.5,374.0" fill="#a9921e"/>
<polygon points="703.5,374.0 703.3,376.5 709.3,361.8 709.6,359.2" fill="#b0981f"/>
<polygon points="709.6,359.2 709.3,361.8 713.1,346.9 713.4,344.4" fill="#b69d20"/>
<polygon points="119.0,332.9 119.3,335.4 121.2,350.3 120.9,347.8" fill="#c3a822"/>
<polygon points="120.9,347.8 121.2,350.3 125.2,365.1 124.9,362.6" fill="#c2a822"/>
<polygon points="124.9,362.6 125.2,365.1 131.5,379.8 131.2,377.3" fill="#c1a622"/>
<polygon points="131.2,377.3 131.5,379.8 140.0,394.3 139.7,391.7" fill="#bea421"/>
<polygon points="139.7,391.7 140.0,394.3 150.7,408.4 150.4,405.8" fill="#baa120"/>
<polygon points="150.4,405.8 150.7,408.4 163.7,422.0 163.4,419.4" fill="#b59c20"/>
<polygon points="163.4,419.4 163.7,422.0 178.8,435.0 178.6,432.4" fill="#af971f"/></g>
<g stroke="#000" stroke-width="1" shape-rendering="crispEdges" fill="none"><line x1="416.6" y1="199.2" x2="444.7" y2="185.4"/>
<line x1="390.4" y1="178.8" x2="380.1" y2="183.7"/>
<line x1="390.4" y1="178.8" x2="390.6" y2="195.4"/>
<line x1="380.4" y1="200.4" x2="390.6" y2="195.4"/>
<line x1="390.6" y1="195.4" x2="409.4" y2="186.3"/>
<line x1="380.6" y1="208.6" x2="380.9" y2="225.0"/>
<line x1="380.9" y1="225.0" x2="391.0" y2="220.0"/>
<line x1="391.0" y1="220.0" x2="409.6" y2="210.8"/>
<line x1="409.5" y1="194.5" x2="409.6" y2="210.8"/>
<line x1="409.5" y1="194.5" x2="390.8" y2="203.7"/>
<line x1="390.8" y1="203.7" x2="380.6" y2="208.6"/>
<line x1="416.2" y1="115.5" x2="445.1" y2="102.2"/>
<line x1="415.7" y1="26.4" x2="445.6" y2="13.7"/>
<line x1="376.8" y1="5.1" x2="377.1" y2="24.1"/>
<line x1="387.7" y1="0.6" x2="376.8" y2="5.1"/>
<line x1="387.7" y1="0.6" x2="388.0" y2="19.5"/>
<line x1="407.9" y1="-7.7" x2="387.7" y2="0.6"/>
<line x1="407.9" y1="-7.7" x2="408.0" y2="11.1"/>
<line x1="388.0" y1="19.5" x2="408.0" y2="11.1"/>
<line x1="377.3" y1="33.4" x2="377.6" y2="52.0"/>
<line x1="377.6" y1="52.0" x2="388.4" y2="47.3"/>
<line x1="388.4" y1="47.3" x2="408.2" y2="38.8"/>
<line x1="408.1" y1="20.4" x2="408.2" y2="38.8"/>
<line x1="408.1" y1="20.4" x2="388.2" y2="28.8"/>
<line x1="388.2" y1="28.8" x2="377.3" y2="33.4"/>
<line x1="416.9" y1="246.6" x2="395.1" y2="-3941.1"/></g>
<g stroke-width="1" shape-rendering="crispEdges"><line x1="86.1" y1="691.2" x2="54.7" y2="708.9" stroke="#ff0000"/>
<line x1="86.1" y1="691.2" x2="114.9" y2="710.5" stroke="#00ff00"/>
<line x1="86.1" y1="691.2" x2="86.1" y2="657.5" stroke="#0000ff"/>
<line x1="45.4" y1="715.4" x2="51.4" y2="709.4" stroke="#000"/>
<line x1="45.4" y1="709.4" x2="51.4" y2="715.4" stroke="#000"/>
<line x1="117.7" y1="717.3" x2="123.7" y2="711.3" stroke="#000"/>
<line x1="117.7" y1="711.3" x2="120.7" y2="714.3" stroke="#000"/>
<line x1="83.1" y1="653.8" x2="89.1" y2="653.8" stroke="#000"/>
<line x1="83.1" y1="647.8" x2="89.1" y2="647.8" stroke="#000"/>
<line x1="83.1" y1="653.8" x2="89.1" y2="647.8" stroke="#000"/></g>
</svg>

<!-- viewport toolbar -->
<svg class="a" style="left:665px;top:771px" width="560" height="38" viewBox="665 771 560 38">
 <g transform="translate(436.4 746)">
 <!-- preview -->
 <path d="M245.6 31.8 L254.2 36.2 V46 L245.6 50.4 L237 46 V36.2 Z M237 36.2 L245.6 41 L254.2 36.2 M245.6 41 V45" fill="none" stroke="#333" stroke-width="1.1" stroke-dasharray="1.5 1.3" stroke-linejoin="round"/>
 <path d="M239.5 45.3 H243.2 L248 50 L243.2 54.8 H239.5 L244.3 50 Z M245.2 45.3 H248.9 L253.7 50 L248.9 54.8 H245.2 L250 50 Z" fill="#111"/>
 <!-- render -->
 <path d="M276.5 31.5 L285.5 36.5 V46.5 L276.5 52 L267.5 46.5 V36.5 Z M267.5 36.5 L276.5 41.5 L285.5 36.5 M276.5 41.5 V45.5" fill="none" stroke="#222" stroke-width="1.3"/>
 <rect x="273.6" y="45.6" width="5.8" height="1.3" fill="#222"/>
 <path d="M274 47.2 H279 L276.5 50 Z M274 52.8 H279 L276.5 50 Z" fill="#222"/>
 <rect x="273.6" y="53" width="5.8" height="1.6" fill="#222"/>
 </g>
 <rect x="731" y="776" width="1" height="26" fill="#c8c8c8"/>
 <!-- view all -->
 <path d="M741.5 783 V779.5 H745 M753 779.5 H756.5 V783 M741.5 792 V795.5 H745" fill="none" stroke="#222" stroke-width="1.4"/>
 <circle cx="748.5" cy="786.5" r="4.3" fill="none" stroke="#222" stroke-width="2"/>
 <path d="M751.5 790 L756.5 796" stroke="#222" stroke-width="2.4"/>
 <!-- zoom in -->
 <circle cx="779.2" cy="786.2" r="4.6" fill="none" stroke="#222" stroke-width="2"/>
 <path d="M782.5 790 L787.5 796" stroke="#222" stroke-width="2.4"/>
 <path d="M776.7 786.2 H781.7 M779.2 783.7 V788.7" stroke="#222" stroke-width="1"/>
 <!-- zoom out -->
 <circle cx="810.5" cy="786.2" r="4.6" fill="none" stroke="#222" stroke-width="2"/>
 <path d="M813.8 790 L818.8 796" stroke="#222" stroke-width="2.4"/>
 <path d="M808 786.2 H813" stroke="#222" stroke-width="1"/>
 <!-- reset -->
 <path d="M836.3 784.5 A7.3 7.3 0 1 0 842.5 781.3" fill="none" stroke="#222" stroke-width="2"/>
 <path d="M834 787 L835 780 L840.5 783.5 Z" fill="#222"/>
 <rect x="861" y="776" width="1" height="26" fill="#c8c8c8"/>
 <!-- view right -->
 <path d="M872 787 L874.5 780.5 H882 L885 787 L882 794 H874.5 Z M872 787 H879 L882 780.5 M879 787 L882 794" fill="none" stroke="#222" stroke-width="1.1"/>
 <path d="M884.5 784.5 L888.5 787 L884.5 789.5 Z" fill="#111"/>
 <!-- view top -->
 <path d="M911 782 L918 785.5 V792.5 L911 796 L904 792.5 V785.5 Z M904 785.5 L911 789 L918 785.5 M911 789 V796" fill="none" stroke="#222" stroke-width="1.1"/>
 <path d="M908.5 782.5 L911 778.5 L913.5 782.5 Z" fill="#111"/>
 <!-- view bottom -->
 <path d="M940 779 L947 782.5 V790 L940 793 L933 790 V782.5 Z M933 790 L940 786.5 L947 790 M940 786.5 V779" fill="none" stroke="#222" stroke-width="1.1"/>
 <path d="M937.5 793 L940 797 L942.5 793 Z" fill="#111"/>
 <!-- view left -->
 <path d="M967.5 787 L970.5 780.5 H978 L981 787 L978 794 H970.5 Z M981 787 H974 L970.5 780.5 M974 787 L970.5 794" fill="none" stroke="#222" stroke-width="1.1"/>
 <path d="M968.5 784.5 L964.5 787 L968.5 789.5 Z" fill="#111"/>
 <!-- view front -->
 <path d="M1003.7 781.5 L1010.7 785 V792.5 L1003.7 796 L996.7 792.5 V785 Z M996.7 785 L1003.7 788.5 L1010.7 785 M1003.7 788.5 V796" fill="none" stroke="#222" stroke-width="1.1"/>
 <path d="M996.7 785 L1003.7 788.5 V796 L996.7 792.5 Z" fill="#222"/>
 <!-- view back -->
 <path d="M1035 781.5 L1042 785 V792.5 L1035 796 L1028 792.5 V785 Z M1028 785 L1035 788.5 L1042 785 M1035 788.5 V796" fill="none" stroke="#222" stroke-width="1.1"/>
 <path d="M1035 781.5 L1042 785 V792.5 L1035 788.5 Z" fill="#222"/>
 <rect x="1053" y="776" width="1" height="26" fill="#c8c8c8"/>
 <!-- perspective (active) -->
 <rect x="1057.5" y="774.5" width="30" height="28" fill="#c4dcf2" stroke="#99c9f5" stroke-width="1"/>
 <path d="M1065.5 789.5 H1075 V797.5 H1065.5 Z M1065.5 789.5 L1082.5 781 L1075 789.5 M1082.5 781 L1075 797.5" fill="none" stroke="#111" stroke-width="1.3"/>
 <!-- ortho -->
 <path d="M1096 787 L1100 782.5 H1110 V792 L1105.5 796.5 H1096 Z M1096 787 H1105.5 V796.5 M1105.5 787 L1110 782.5 M1100 782.5 V792 H1110 M1100 792 L1096 796.5" fill="none" stroke="#111" stroke-width="1.2"/>
 <rect x="1121" y="776" width="1" height="26" fill="#c8c8c8"/>
 <!-- axes (active) -->
 <rect x="1125.5" y="774.5" width="61" height="28" fill="#c4dcf2" stroke="#99c9f5" stroke-width="1"/>
 <rect x="1155" y="774.5" width="2" height="28" fill="#99c9f5"/>
 <path d="M1140.5 780 V790 H1151.5 M1140.5 790 L1133.5 796.5" fill="none" stroke="#111" stroke-width="1"/>
 <circle cx="1140.5" cy="790" r="1.2" fill="#111"/>
 <path d="M1171.8 780 V789.5 H1183 M1171.8 782 H1174 M1171.8 784.5 H1174 M1171.8 787 H1174 M1174.5 789.5 V787.5 M1177.5 789.5 V787.5 M1180.5 789.5 V787.5 M1171.8 789.5 L1164 796.5 M1165.5 793 L1167 795 M1167.5 791 L1169 793 M1169.5 789.5 L1171 791.5" fill="none" stroke="#111" stroke-width="0.9"/>
 <text x="1172.5" y="797.8" font-family="Liberation Sans" font-size="8.5" fill="#111">10</text>
 <!-- show edges -->
 <path d="M1195 783.5 H1208.5 V794.5 H1195 Z" fill="none" stroke="#222" stroke-width="1" stroke-dasharray="2 1.5"/>
 <circle cx="1195" cy="783.5" r="1.2" fill="#111"/><circle cx="1208.5" cy="783.5" r="1.2" fill="#111"/>
 <circle cx="1195" cy="794.5" r="1.2" fill="#111"/><circle cx="1208.5" cy="794.5" r="1.2" fill="#111"/>
</svg>

<!-- ================= Konsole ================= -->
<div class="tb" style="left:665px;top:810px;width:416px;"><span>Konsole</span>
<svg width="9" height="9" viewBox="0 0 9 9"><path d="M1 1L8 8M8 1L1 8" stroke="#333" stroke-width="2"/></svg></div>
<div class="a" style="left:665px;top:831px;width:416px;height:118px;background:#fff;border:1px solid #828282;border-bottom:none;box-sizing:border-box"></div>
<div class="a" style="left:1064px;top:832px;width:16px;height:117px;background:#f0f0f0"></div>
<div class="a" style="left:1064px;top:915px;width:15px;height:18px;background:#cdcdcd"></div>
<svg class="a" style="left:1064px;top:832px" width="16" height="117" viewBox="1064 832 16 117">
 <path d="M1068.5 844.5 L1071.5 841 L1074.5 844.5" fill="none" stroke="#555" stroke-width="2"/>
 <path d="M1068.5 939 L1071.5 942.5 L1074.5 939" fill="none" stroke="#555" stroke-width="2"/>
</svg>
<div class="a" id="kon" style="left:670px;top:833px;font-size:10.6px;line-height:13px;white-space:pre;color:#000">Geometries in cache: 168
Geometry cache size in bytes: 34972976
CGAL Polyhedrons in cache: 32
CGAL cache size in bytes: 92343200
Compiling design (CSG Products normalization)...
Normalized tree has 5 elements!
Compile and preview finished.
Total rendering time: 0:00:00.053</div>

<!-- ================= Fehlerliste ================= -->
<div class="tb" style="left:1085px;top:810px;width:440px;"><span>Fehlerliste</span>
<svg width="9" height="9" viewBox="0 0 9 9"><path d="M1 1L8 8M8 1L1 8" stroke="#333" stroke-width="2"/></svg></div>
<div class="a" style="left:1094px;top:845px;font-size:10.6px;line-height:13px">Anzeigen</div>
<div class="a" style="left:1144px;top:840px;width:121px;height:20px;background:#e1e1e1;border:1px solid #adadad;box-sizing:border-box"></div>
<div class="a" style="left:1148px;top:845px;font-size:10.6px;line-height:13px">Alles</div>
<svg class="a" style="left:1248px;top:845px" width="12" height="10" viewBox="0 0 12 10"><path d="M2 3 L6 7 L10 3" fill="none" stroke="#333" stroke-width="1.2"/></svg>
<div class="a" style="left:1094px;top:866px;width:423px;height:76px;background:#fff;border:1px solid #828282;box-sizing:border-box"></div>
<div class="a" style="left:1174px;top:868px;width:1px;height:22px;background:#e5e5e5"></div>
<div class="a" style="left:1374px;top:868px;width:1px;height:22px;background:#e5e5e5"></div>
<div class="a" style="left:1454px;top:868px;width:1px;height:22px;background:#e5e5e5"></div>
<div class="a" style="left:1119px;top:873px;font-size:10.6px;line-height:13px">Group</div>
<div class="a" style="left:1266px;top:873px;font-size:10.6px;line-height:13px">File</div>
<div class="a" style="left:1404px;top:873px;font-size:10.6px;line-height:13px">Line</div>
<div class="a" style="left:1515px;top:875px;width:1px;height:9px;background:#6a4a20"></div>
<div class="a" style="left:1095px;top:925px;width:421px;height:16px;background:#f0f0f0"></div>
<div class="a" style="left:1112px;top:925px;width:290px;height:16px;background:#cdcdcd"></div>
<svg class="a" style="left:1095px;top:925px" width="421" height="16" viewBox="1095 925 421 16">
 <path d="M1106 929 L1102 933 L1106 937" fill="none" stroke="#606060" stroke-width="1.6"/>
 <path d="M1506 929 L1510 933 L1506 937" fill="none" stroke="#606060" stroke-width="1.6"/>
</svg>

<!-- ================= Customizer ================= -->
<div class="tb" style="left:1530px;top:4px;width:389px;"><span>Customizer</span>
<svg width="9" height="9" viewBox="0 0 9 9"><path d="M1 1L8 8M8 1L1 8" stroke="#333" stroke-width="2"/></svg></div>
<svg class="a" style="left:1530px;top:34px" width="13" height="13" viewBox="0 0 13 13"><rect x="0.5" y="0.5" width="12" height="12" fill="#fff" stroke="#333" stroke-width="1"/><path d="M2.5 6.5 L5 9 L10.5 3" fill="none" stroke="#333" stroke-width="1.3"/></svg>
<div class="a" style="left:1548px;top:35px;font-size:10.6px;line-height:13px">Automatische Vorschau</div>
<div class="a" style="left:1669px;top:30px;width:133px;height:20px;background:#e1e1e1;border:1px solid #adadad;box-sizing:border-box"></div>
<div class="a" style="left:1672px;top:35px;font-size:10.6px;line-height:13px">Details anzeigen</div>
<svg class="a" style="left:1787px;top:35px" width="12" height="10" viewBox="0 0 12 10"><path d="M2 3 L6 7 L10 3" fill="none" stroke="#333" stroke-width="1.2"/></svg>
<div class="a" style="left:1807px;top:30px;width:108px;height:21px;background:#e1e1e1;border:1px solid #adadad;box-sizing:border-box"></div>
<div class="a" style="left:1807px;top:35px;width:108px;text-align:center;font-size:10.6px;line-height:13px">Zurücksetzen</div>
<div class="a" style="left:1530px;top:56px;width:69px;height:26px;background:#fff;border:1px solid #7a7a7a;box-sizing:border-box"></div>
<div class="a" style="left:1532px;top:64px;font-size:10.6px;line-height:13px">s Designs</div>
<svg class="a" style="left:1584px;top:64px" width="12" height="10" viewBox="0 0 12 10"><path d="M2 3 L6 7 L10 3" fill="none" stroke="#333" stroke-width="1.2"/></svg>
<div class="a" style="left:1604px;top:63px;font-size:12px;line-height:13px">*</div>
<div class="a" style="left:1614px;top:57px;width:38px;height:24px;background:#e1e1e1;border:1px solid #adadad;box-sizing:border-box"></div>
<div class="a" style="left:1614px;top:64px;width:38px;text-align:center;font-size:10.6px;line-height:13px">+</div>
<div class="a" style="left:1658px;top:57px;width:38px;height:24px;background:#e1e1e1;border:1px solid #adadad;box-sizing:border-box"></div>
<div class="a" style="left:1658px;top:64px;width:38px;text-align:center;font-size:10.6px;line-height:13px">-</div>
<div class="a" style="left:1702px;top:57px;width:213px;height:24px;background:#e1e1e1;border:1px solid #adadad;box-sizing:border-box"></div>
<div class="a" style="left:1705px;top:61px;font-size:14.1px;line-height:18px;white-space:nowrap">aktuelle Voreinstellung speichern</div>
<div class="a" style="left:1530px;top:86px;width:386px;height:880px;border:1px solid #828282;box-sizing:border-box"></div>
<div class="a" style="left:1531px;top:87px;width:384px;height:21px;background:#c4dcf2;border:1px solid #99c9f5;border-top:none;box-sizing:border-box"></div>
<svg class="a" style="left:1536px;top:95px" width="14" height="8" viewBox="0 0 14 8"><path d="M0 0 H13 L6.5 7.5 Z" fill="#000"/></svg>
<div class="a" style="left:1552px;top:94px;font-size:10.6px;line-height:13px">Parameters</div>

<div class="a" style="left:1535px;top:108.5px;font-size:12.2px;line-height:14px;font-weight:bold">hole height</div>
<div class="a" style="left:1864px;top:109px;width:47px;height:18px;background:#fff;border:1px solid #7a7a7a;box-sizing:border-box"></div>
<div class="a" style="left:1864px;top:113px;width:25px;font-size:10.6px;line-height:13px;text-align:right">25</div>
<div class="a" style="left:1895px;top:110px;width:15px;height:16px;background:#efefef;border:1px solid #dadada;box-sizing:border-box"></div>
<svg class="a" style="left:1895px;top:110px" width="15" height="16" viewBox="0 0 15 16"><path d="M1 8 H14" stroke="#d0d0d0" stroke-width="1"/><path d="M4.5 6 L7.5 3 L10.5 6 Z M4.5 10 L10.5 10 L7.5 13 Z" fill="#111"/></svg>
<div class="a" style="left:1535px;top:126.5px;font-size:12.2px;line-height:14px;font-weight:bold">inner diameter</div>
<div class="a" style="left:1854px;top:127px;width:57px;height:18px;background:#fff;border:1px solid #7a7a7a;box-sizing:border-box"></div>
<div class="a" style="left:1854px;top:131px;width:35px;font-size:10.6px;line-height:13px;text-align:right">60,5</div>
<div class="a" style="left:1895px;top:128px;width:15px;height:16px;background:#efefef;border:1px solid #dadada;box-sizing:border-box"></div>
<svg class="a" style="left:1895px;top:128px" width="15" height="16" viewBox="0 0 15 16"><path d="M1 8 H14" stroke="#d0d0d0" stroke-width="1"/><path d="M4.5 6 L7.5 3 L10.5 6 Z M4.5 10 L10.5 10 L7.5 13 Z" fill="#111"/></svg>
<div class="a" style="left:1535px;top:144.5px;font-size:12.2px;line-height:14px;font-weight:bold">wall thickness</div>
<div class="a" style="left:1864px;top:145px;width:47px;height:18px;background:#fff;border:1px solid #7a7a7a;box-sizing:border-box"></div>
<div class="a" style="left:1864px;top:149px;width:25px;font-size:10.6px;line-height:13px;text-align:right">2</div>
<div class="a" style="left:1895px;top:146px;width:15px;height:16px;background:#efefef;border:1px solid #dadada;box-sizing:border-box"></div>
<svg class="a" style="left:1895px;top:146px" width="15" height="16" viewBox="0 0 15 16"><path d="M1 8 H14" stroke="#d0d0d0" stroke-width="1"/><path d="M4.5 6 L7.5 3 L10.5 6 Z M4.5 10 L10.5 10 L7.5 13 Z" fill="#111"/></svg>
<div class="a" style="left:1535px;top:162.5px;font-size:12.2px;line-height:14px;font-weight:bold">inner chamfer</div>
<div class="a" style="left:1854px;top:163px;width:57px;height:18px;background:#fff;border:1px solid #7a7a7a;box-sizing:border-box"></div>
<div class="a" style="left:1854px;top:167px;width:35px;font-size:10.6px;line-height:13px;text-align:right">0,4</div>
<div class="a" style="left:1895px;top:164px;width:15px;height:16px;background:#efefef;border:1px solid #dadada;box-sizing:border-box"></div>
<svg class="a" style="left:1895px;top:164px" width="15" height="16" viewBox="0 0 15 16"><path d="M1 8 H14" stroke="#d0d0d0" stroke-width="1"/><path d="M4.5 6 L7.5 3 L10.5 6 Z M4.5 10 L10.5 10 L7.5 13 Z" fill="#111"/></svg>
<div class="a" style="left:1535px;top:180.5px;font-size:12.2px;line-height:14px;font-weight:bold">bulge factor</div>
<div class="a" style="left:1848px;top:181px;width:63px;height:18px;background:#fff;border:1px solid #7a7a7a;box-sizing:border-box"></div>
<div class="a" style="left:1848px;top:185px;width:41px;font-size:10.6px;line-height:13px;text-align:right">0,25</div>
<div class="a" style="left:1895px;top:182px;width:15px;height:16px;background:#efefef;border:1px solid #dadada;box-sizing:border-box"></div>
<svg class="a" style="left:1895px;top:182px" width="15" height="16" viewBox="0 0 15 16"><path d="M1 8 H14" stroke="#d0d0d0" stroke-width="1"/><path d="M4.5 6 L7.5 3 L10.5 6 Z M4.5 10 L10.5 10 L7.5 13 Z" fill="#111"/></svg>
<div class="a" style="left:1535px;top:198.5px;font-size:12.2px;line-height:14px;font-weight:bold">&#36;fn</div>
<div class="a" style="left:1864px;top:199px;width:47px;height:18px;background:#fff;border:1px solid #7a7a7a;box-sizing:border-box"></div>
<div class="a" style="left:1864px;top:203px;width:25px;font-size:10.6px;line-height:13px;text-align:right">75</div>
<div class="a" style="left:1895px;top:200px;width:15px;height:16px;background:#efefef;border:1px solid #dadada;box-sizing:border-box"></div>
<svg class="a" style="left:1895px;top:200px" width="15" height="16" viewBox="0 0 15 16"><path d="M1 8 H14" stroke="#d0d0d0" stroke-width="1"/><path d="M4.5 6 L7.5 3 L10.5 6 Z M4.5 10 L10.5 10 L7.5 13 Z" fill="#111"/></svg>


</body></html>
